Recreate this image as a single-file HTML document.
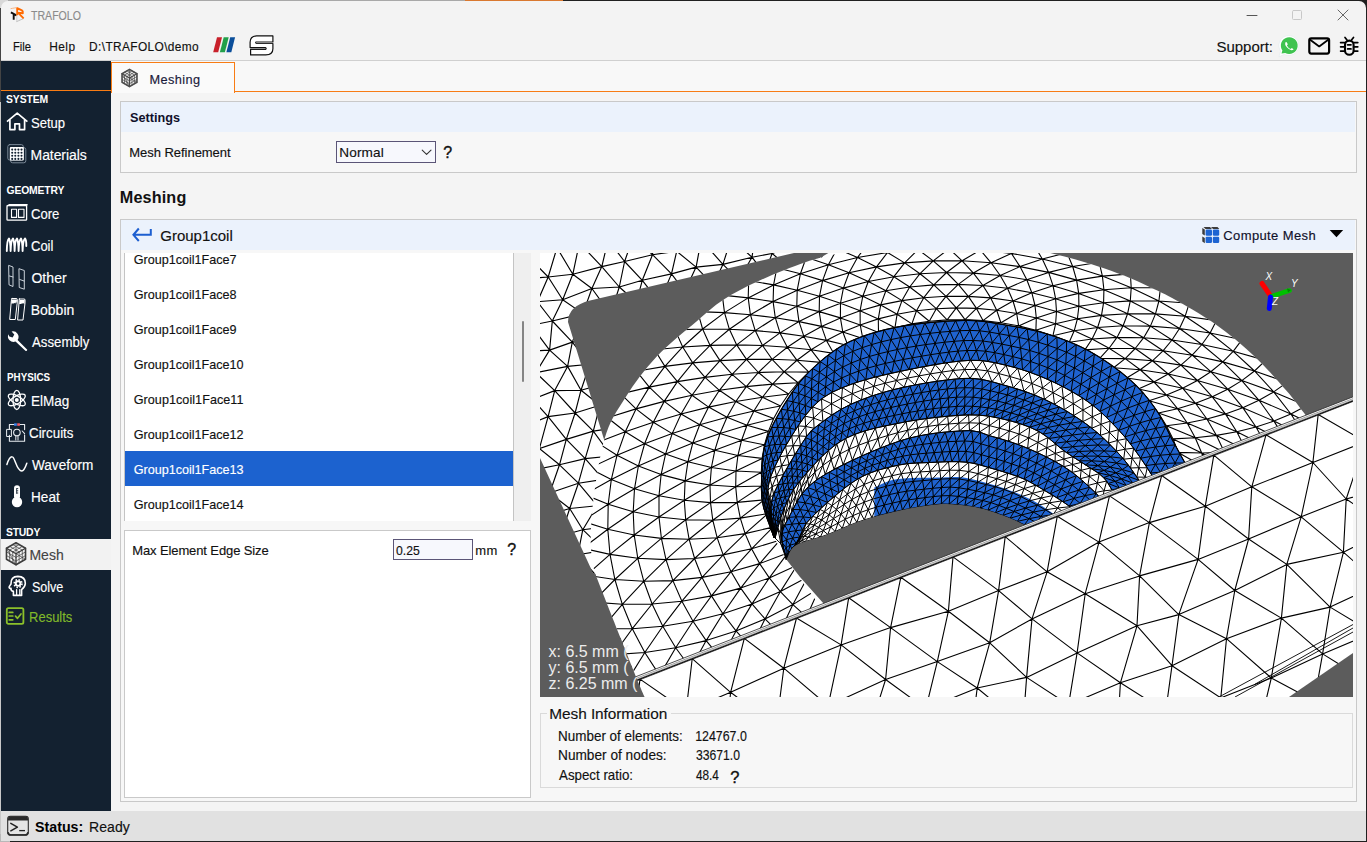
<!DOCTYPE html><html><head><meta charset="utf-8"><style>
html,body{margin:0;padding:0;width:1367px;height:842px;overflow:hidden;background:#202020}
body{position:relative;font-family:"Liberation Sans",sans-serif}
.t{position:absolute;line-height:1;white-space:pre;font-family:"Liberation Sans",sans-serif;-webkit-text-stroke:0.15px currentColor}
svg{position:absolute;overflow:hidden}
</style></head><body>
<div style="position:absolute;left:0px;top:0px;width:1367px;height:842px;background:#202020"></div>

<div style="position:absolute;left:0px;top:0px;width:10px;height:10px;background:#d8d8d8"></div>

<div style="position:absolute;left:0px;top:832px;width:10px;height:10px;background:#b8b8b8"></div>

<div style="position:absolute;left:1px;top:1px;width:1365px;height:840px;background:#f3f3f3;border-radius:7px;overflow:hidden"></div>

<div style="position:absolute;left:8px;top:0px;width:457px;height:1px;background:#a8a8a8"></div>

<div style="position:absolute;left:465px;top:0px;width:98px;height:1px;background:#d9782f"></div>

<div style="position:absolute;left:0px;top:8px;width:1px;height:94px;background:#444"></div>

<div style="position:absolute;left:0px;top:102px;width:1px;height:732px;background:#c8c8c8"></div>

<div style="position:absolute;left:1px;top:60px;width:1365px;height:1px;background:#d0d0d0"></div>

<div style="position:absolute;left:111px;top:61px;width:1255px;height:30px;background:#f8f8f8"></div>

<div style="position:absolute;left:1px;top:61px;width:110px;height:750px;background:#132130"></div>

<div style="position:absolute;left:1px;top:90px;width:111px;height:1px;background:#f87c14"></div>

<div style="position:absolute;left:234px;top:91px;width:1132px;height:1px;background:#f87c14"></div>

<div style="position:absolute;left:111px;top:92px;width:1255px;height:719px;background:#f4f4f4"></div>

<div style="position:absolute;left:111px;top:62px;width:122px;height:30px;background:#fafafa;border:1px solid #f87c14;border-bottom:none"></div>

<div style="position:absolute;left:1px;top:539px;width:110px;height:31px;background:#f2f2f2"></div>

<div style="position:absolute;left:120px;top:101px;width:1235px;height:70px;background:#f7f7f7;border:1px solid #c9c9c9"></div>

<div style="position:absolute;left:121px;top:102px;width:1234px;height:30px;background:#ebf2fc"></div>

<div style="position:absolute;left:336px;top:141px;width:98px;height:20px;background:#f7f8fd;border:1px solid #5b5577"></div>

<div style="position:absolute;left:120px;top:219px;width:1235px;height:581px;background:#f7f7f7;border:1px solid #c9c9c9"></div>

<div style="position:absolute;left:121px;top:220px;width:1234px;height:30px;background:#ebf2fc"></div>

<div style="position:absolute;left:124px;top:253px;width:389px;height:268px;background:#fff;border-left:1px solid #c4c4c4"></div>

<div style="position:absolute;left:513px;top:253px;width:1px;height:268px;background:#c4c4c4"></div>

<div style="position:absolute;left:514px;top:253px;width:17px;height:268px;background:#efefef"></div>

<div style="position:absolute;left:522px;top:321px;width:2px;height:61px;background:#848484;border-radius:1px"></div>

<div style="position:absolute;left:125px;top:451px;width:388px;height:35px;background:#1c62cf"></div>

<div style="position:absolute;left:124px;top:530px;width:405px;height:266px;background:#fff;border:1px solid #c9c9c9"></div>

<div style="position:absolute;left:393px;top:539px;width:78px;height:19px;background:#f7f8fd;border:1px solid #5b5577"></div>

<div style="position:absolute;left:540px;top:713px;width:811px;height:73px;border:1px solid #dadada"></div>

<div style="position:absolute;left:547px;top:705px;width:124px;height:16px;background:#f7f7f7"></div>

<div style="position:absolute;left:1px;top:811px;width:1365px;height:30px;background:#e1e1e1"></div>

<div style="position:absolute;left:540px;top:253px;width:813px;height:444px;overflow:hidden"><svg width="813" height="444" viewBox="540 253 813 444" style="left:0;top:0"><defs><clipPath id="cd"><path d="M845 240L840.4 252.9C828.7 256 818.9 257.6 805.3 262.3C791.6 267 772.1 274.8 758.5 281C744.9 287.2 733.7 293 723.4 299.7C713.1 306.4 707.9 311.7 696.8 321.2C685.6 330.7 668.4 344.1 656.5 356.8C644.6 369.5 634.3 383.3 625.6 397.2C616.9 411.1 609.9 419.6 604.2 440C598.5 460.4 593 497.6 591.5 519.8C590 542 590.2 553.6 594.9 573C599.6 592.4 612.3 617.4 619.8 636.2C627.3 655 635.4 675.4 639.8 686C644.2 696.6 643.9 695.3 646 700L1400 705L1400 428L1315 428C1311.2 422.8 1308.2 418.5 1303.5 412.3C1298.8 406.1 1294.7 400.1 1286.5 390.7C1278.3 381.3 1265.9 367.1 1254.1 356C1242.3 344.9 1229.2 333.9 1215.5 324.3C1201.8 314.7 1183.1 304.3 1172.1 298.1C1161.1 291.9 1157.6 290.6 1149.6 286.9C1141.6 283.1 1132.5 279 1124 275.6C1115.5 272.2 1106.6 269.1 1098.4 266.4C1090.2 263.7 1082.8 261.4 1074.8 259.2C1066.8 257 1058.4 255.1 1050.2 253.1L1045 240Z"/></clipPath></defs><rect x="540" y="253" width="813" height="444" fill="#fff"/><path d="M509.1 618.2L536.4 612.7M509.1 618.2L529.6 637.4M509.1 618.2L500.1 644.3M500.1 644.3L529.6 637.4M500.1 644.3L514.8 663.9M500.1 644.3L489.6 669.7M514.8 663.9L546 656.5M514.8 663.9L532.6 682.5M514.8 663.9L508.3 694.1M508.3 694.1L532.6 682.5M508.3 694.1L527.4 709.8M508.3 694.1L499.1 715M527.4 709.8L550.9 705.1M527.4 709.8L546 728.6M527.4 709.8L517.4 734.6M517.4 734.6L546 728.6M517.4 734.6L536.2 753.9M517.4 734.6L513.6 762.9M507.3 475.1L529.1 470.7M507.3 475.1L520.9 496M507.3 475.1L498.9 505.4M514.8 520.6L539.2 517.8M514.8 520.6L530.7 543.9M514.8 520.6L506.9 550.9M506.9 550.9L530.7 543.9M506.9 550.9L522.2 564.5M506.9 550.9L497 575.4M522.2 564.5L551.2 559.6M522.2 564.5L541.8 587.9M522.2 564.5L516.3 594.7M516.3 594.7L541.8 587.9M516.3 594.7L536.4 612.7M516.3 594.7L509.1 618.2M536.4 612.7L563.9 607M536.4 612.7L550.6 637M536.4 612.7L529.6 637.4M529.6 637.4L550.6 637M529.6 637.4L546 656.5M529.6 637.4L514.8 663.9M546 656.5L573.3 655.4M546 656.5L560.7 677.2M546 656.5L532.6 682.5M532.6 682.5L560.7 677.2M532.6 682.5L550.9 705.1M532.6 682.5L527.4 709.8M550.9 705.1L578.7 696.5M550.9 705.1L568.8 725.3M550.9 705.1L546 728.6M546 728.6L568.8 725.3M546 728.6L566.8 749.9M546 728.6L536.2 753.9M500.7 335.6L531.2 325.3M500.7 335.6L518.2 351.9M500.7 335.6L495.6 356M512.4 377.4L535.9 372.7M512.4 377.4L532.5 399.5M512.4 377.4L503.5 402.2M503.5 402.2L532.5 399.5M503.5 402.2L518.7 428.5M503.5 402.2L497.3 429M518.7 428.5L548.1 416.6M518.7 428.5L539.4 448.6M518.7 428.5L512.4 453.4M512.4 453.4L539.4 448.6M512.4 453.4L529.1 470.7M512.4 453.4L507.3 475.1M529.1 470.7L559.5 464.8M529.1 470.7L549.7 493M529.1 470.7L520.9 496M520.9 496L549.7 493M520.9 496L539.2 517.8M520.9 496L514.8 520.6M539.2 517.8L569.7 508.5M539.2 517.8L560.8 535.7M539.2 517.8L530.7 543.9M530.7 543.9L560.8 535.7M530.7 543.9L551.2 559.6M530.7 543.9L522.2 564.5M551.2 559.6L577.8 554.8M551.2 559.6L568.4 581.2M551.2 559.6L541.8 587.9M541.8 587.9L568.4 581.2M541.8 587.9L563.9 607M541.8 587.9L536.4 612.7M563.9 607L586.5 599M563.9 607L576.9 628.6M563.9 607L550.6 637M550.6 637L576.9 628.6M550.6 637L573.3 655.4M550.6 637L546 656.5M573.3 655.4L594 645.9M573.3 655.4L590.3 672.3M573.3 655.4L560.7 677.2M560.7 677.2L590.3 672.3M560.7 677.2L578.7 696.5M560.7 677.2L550.9 705.1M578.7 696.5L605.6 692.1M578.7 696.5L600.8 716.7M578.7 696.5L568.8 725.3M568.8 725.3L600.8 716.7M568.8 725.3L589.5 745.7M568.8 725.3L566.8 749.9M509.3 237.5L534.4 229.2M509.3 237.5L526.3 254.8M509.3 237.5L503.5 264.9M503.5 264.9L526.3 254.8M503.5 264.9L521.9 279M503.5 264.9L494.4 290.5M521.9 279L548.2 277M521.9 279L537.4 301.7M521.9 279L510.1 310.2M510.1 310.2L537.4 301.7M510.1 310.2L531.2 325.3M510.1 310.2L500.7 335.6M531.2 325.3L552.3 321M531.2 325.3L549.6 350.1M531.2 325.3L518.2 351.9M518.2 351.9L549.6 350.1M518.2 351.9L535.9 372.7M518.2 351.9L512.4 377.4M535.9 372.7L567.6 366.4M535.9 372.7L554.7 390.6M535.9 372.7L532.5 399.5M532.5 399.5L554.7 390.6M532.5 399.5L548.1 416.6M532.5 399.5L518.7 428.5M548.1 416.6L575.1 413M548.1 416.6L566.3 439.4M548.1 416.6L539.4 448.6M539.4 448.6L566.3 439.4M539.4 448.6L559.5 464.8M539.4 448.6L529.1 470.7M559.5 464.8L585.2 458.6M559.5 464.8L578.4 483.2M559.5 464.8L549.7 493M549.7 493L578.4 483.2M549.7 493L569.7 508.5M549.7 493L539.2 517.8M569.7 508.5L597.2 505.7M569.7 508.5L582.8 529.7M569.7 508.5L560.8 535.7M560.8 535.7L582.8 529.7M560.8 535.7L577.8 554.8M560.8 535.7L551.2 559.6M577.8 554.8L604.3 550.4M577.8 554.8L596.1 575.5M577.8 554.8L568.4 581.2M568.4 581.2L596.1 575.5M568.4 581.2L586.5 599M568.4 581.2L563.9 607M586.5 599L612.2 598.9M586.5 599L604 624M586.5 599L576.9 628.6M576.9 628.6L604 624M576.9 628.6L594 645.9M576.9 628.6L573.3 655.4M594 645.9L625.6 643.2M594 645.9L614.8 671.3M594 645.9L590.3 672.3M590.3 672.3L614.8 671.3M590.3 672.3L605.6 692.1M590.3 672.3L578.7 696.5M605.6 692.1L632.8 690.9M605.6 692.1L621.8 713.5M605.6 692.1L600.8 716.7M600.8 716.7L621.8 713.5M600.8 716.7L617.5 742.2M600.8 716.7L589.5 745.7M514.4 214.2L542.7 207.9M514.4 214.2L534.4 229.2M514.4 214.2L509.3 237.5M534.4 229.2L564.8 223.3M534.4 229.2L557 247.7M534.4 229.2L526.3 254.8M526.3 254.8L557 247.7M526.3 254.8L548.2 277M526.3 254.8L521.9 279M548.2 277L572.8 274.3M548.2 277L562.7 299.8M548.2 277L537.4 301.7M537.4 301.7L562.7 299.8M537.4 301.7L552.3 321M537.4 301.7L531.2 325.3M552.3 321L582.9 313.6M552.3 321L572.3 342.1M552.3 321L549.6 350.1M549.6 350.1L572.3 342.1M549.6 350.1L567.6 366.4M549.6 350.1L535.9 372.7M567.6 366.4L589.8 364.2M567.6 366.4L581 390.2M567.6 366.4L554.7 390.6M554.7 390.6L581 390.2M554.7 390.6L575.1 413M554.7 390.6L548.1 416.6M575.1 413L599.9 405.2M575.1 413L593.3 431.1M575.1 413L566.3 439.4M566.3 439.4L593.3 431.1M566.3 439.4L585.2 458.6M566.3 439.4L559.5 464.8M585.2 458.6L611.4 456M585.2 458.6L603.3 479.4M585.2 458.6L578.4 483.2M578.4 483.2L603.3 479.4M578.4 483.2L597.2 505.7M578.4 483.2L569.7 508.5M597.2 505.7L617.5 499.8M597.2 505.7L609.6 526.4M597.2 505.7L582.8 529.7M582.8 529.7L609.6 526.4M582.8 529.7L604.3 550.4M582.8 529.7L577.8 554.8M604.3 550.4L627.9 546M604.3 550.4L621.1 570.2M604.3 550.4L596.1 575.5M596.1 575.5L621.1 570.2M596.1 575.5L612.2 598.9M596.1 575.5L586.5 599M612.2 598.9L641.3 588.8M612.2 598.9L629.5 620M612.2 598.9L604 624M604 624L629.5 620M604 624L625.6 643.2M604 624L594 645.9M625.6 643.2L648.7 639.3M625.6 643.2L644.2 662.5M625.6 643.2L614.8 671.3M614.8 671.3L644.2 662.5M614.8 671.3L632.8 690.9M614.8 671.3L605.6 692.1M632.8 690.9L657.2 679.8M632.8 690.9L653.9 705.7M632.8 690.9L621.8 713.5M621.8 713.5L653.9 705.7M621.8 713.5L643.9 730.9M621.8 713.5L617.5 742.2M643.9 730.9L669.3 728.7M643.9 730.9L658.3 753.9M643.9 730.9L637.1 756.7M564.8 223.3L585.9 221.2M564.8 223.3L579.4 243M564.8 223.3L557 247.7M557 247.7L579.4 243M557 247.7L572.8 274.3M557 247.7L548.2 277M572.8 274.3L601.8 266.6M572.8 274.3L591.9 288.5M572.8 274.3L562.7 299.8M562.7 299.8L591.9 288.5M562.7 299.8L582.9 313.6M562.7 299.8L552.3 321M582.9 313.6L610.5 314.2M582.9 313.6L602.7 338.5M582.9 313.6L572.3 342.1M572.3 342.1L602.7 338.5M572.3 342.1L589.8 364.2M572.3 342.1L567.6 366.4M589.8 364.2L620.3 359M589.8 364.2L610.2 382.1M589.8 364.2L581 390.2M581 390.2L610.2 382.1M581 390.2L599.9 405.2M581 390.2L575.1 413M599.9 405.2L630 404.6M599.9 405.2L621.9 426.9M599.9 405.2L593.3 431.1M593.3 431.1L621.9 426.9M593.3 431.1L611.4 456M593.3 431.1L585.2 458.6M611.4 456L640.6 448.6M611.4 456L632.2 471.3M611.4 456L603.3 479.4M603.3 479.4L632.2 471.3M603.3 479.4L617.5 499.8M603.3 479.4L597.2 505.7M617.5 499.8L650.4 496.1M617.5 499.8L637 522.1M617.5 499.8L609.6 526.4M609.6 526.4L637 522.1M609.6 526.4L627.9 546M609.6 526.4L604.3 550.4M627.9 546L655 537.7M627.9 546L648.2 563.7M627.9 546L621.1 570.2M621.1 570.2L648.2 563.7M621.1 570.2L641.3 588.8M621.1 570.2L612.2 598.9M641.3 588.8L666.5 588.4M641.3 588.8L659.5 612.7M641.3 588.8L629.5 620M629.5 620L659.5 612.7M629.5 620L648.7 639.3M629.5 620L625.6 643.2M648.7 639.3L675.5 633.3M648.7 639.3L670 658.3M648.7 639.3L644.2 662.5M644.2 662.5L670 658.3M644.2 662.5L657.2 679.8M644.2 662.5L632.8 690.9M657.2 679.8L689.1 679.3M657.2 679.8L677 699.8M657.2 679.8L653.9 705.7M653.9 705.7L677 699.8M653.9 705.7L669.3 728.7M653.9 705.7L643.9 730.9M669.3 728.7L696.8 725.2M669.3 728.7L686.3 749.1M669.3 728.7L658.3 753.9M585.9 221.2L612.1 216.4M585.9 221.2L608.1 240.1M585.9 221.2L579.4 243M579.4 243L608.1 240.1M579.4 243L601.8 266.6M579.4 243L572.8 274.3M601.8 266.6L624.6 261.5M601.8 266.6L619.3 287M601.8 266.6L591.9 288.5M591.9 288.5L619.3 287M591.9 288.5L610.5 314.2M591.9 288.5L582.9 313.6M610.5 314.2L636.4 302.3M610.5 314.2L625.1 328.6M610.5 314.2L602.7 338.5M602.7 338.5L625.1 328.6M602.7 338.5L620.3 359M602.7 338.5L589.8 364.2M620.3 359L647.5 354M620.3 359L633.5 377.5M620.3 359L610.2 382.1M610.2 382.1L633.5 377.5M610.2 382.1L630 404.6M610.2 382.1L599.9 405.2M630 404.6L654.6 393.8M630 404.6L645 424.4M630 404.6L621.9 426.9M621.9 426.9L645 424.4M621.9 426.9L640.6 448.6M621.9 426.9L611.4 456M640.6 448.6L664.8 441.2M640.6 448.6L657.3 467M640.6 448.6L632.2 471.3M632.2 471.3L657.3 467M632.2 471.3L650.4 496.1M632.2 471.3L617.5 499.8M650.4 496.1L673.8 487.9M650.4 496.1L668.5 515.2M650.4 496.1L637 522.1M637 522.1L668.5 515.2M637 522.1L655 537.7M637 522.1L627.9 546M655 537.7L685.4 535.5M655 537.7L674.1 563.1M655 537.7L648.2 563.7M648.2 563.7L674.1 563.1M648.2 563.7L666.5 588.4M648.2 563.7L641.3 588.8M666.5 588.4L694.5 581.3M666.5 588.4L683.1 603.3M666.5 588.4L659.5 612.7M659.5 612.7L683.1 603.3M659.5 612.7L675.5 633.3M659.5 612.7L648.7 639.3M675.5 633.3L703.2 628M675.5 633.3L696.4 650.3M675.5 633.3L670 658.3M670 658.3L696.4 650.3M670 658.3L689.1 679.3M670 658.3L657.2 679.8M689.1 679.3L709.9 671.6M689.1 679.3L706.7 694.8M689.1 679.3L677 699.8M677 699.8L706.7 694.8M677 699.8L696.8 725.2M677 699.8L669.3 728.7M696.8 725.2L723.8 714.9M696.8 725.2L712.5 739.7M696.8 725.2L686.3 749.1M612.1 216.4L638.6 207.8M612.1 216.4L633.3 236.6M612.1 216.4L608.1 240.1M608.1 240.1L633.3 236.6M608.1 240.1L624.6 261.5M608.1 240.1L601.8 266.6M624.6 261.5L652.5 254.7M624.6 261.5L642.3 280.3M624.6 261.5L619.3 287M619.3 287L642.3 280.3M619.3 287L636.4 302.3M619.3 287L610.5 314.2M636.4 302.3L659.5 302.3M636.4 302.3L654.7 327.9M636.4 302.3L625.1 328.6M625.1 328.6L654.7 327.9M625.1 328.6L647.5 354M625.1 328.6L620.3 359M647.5 354L668.3 346.8M647.5 354L664.2 371.3M647.5 354L633.5 377.5M633.5 377.5L664.2 371.3M633.5 377.5L654.6 393.8M633.5 377.5L630 404.6M654.6 393.8L683.3 394.2M654.6 393.8L673.9 419.3M654.6 393.8L645 424.4M645 424.4L673.9 419.3M645 424.4L664.8 441.2M645 424.4L640.6 448.6M664.8 441.2L691.3 439.8M664.8 441.2L679.3 464.2M664.8 441.2L657.3 467M657.3 467L679.3 464.2M657.3 467L673.8 487.9M657.3 467L650.4 496.1M673.8 487.9L701.4 483.7M673.8 487.9L690 505.5M673.8 487.9L668.5 515.2M668.5 515.2L690 505.5M668.5 515.2L685.4 535.5M668.5 515.2L655 537.7M685.4 535.5L710.4 530.9M685.4 535.5L699.7 552.3M685.4 535.5L674.1 563.1M674.1 563.1L699.7 552.3M674.1 563.1L694.5 581.3M674.1 563.1L666.5 588.4M694.5 581.3L717.5 571.5M694.5 581.3L712.3 603.4M694.5 581.3L683.1 603.3M683.1 603.3L712.3 603.4M683.1 603.3L703.2 628M683.1 603.3L675.5 633.3M703.2 628L731.2 619.1M703.2 628L722.2 642.8M703.2 628L696.4 650.3M696.4 650.3L722.2 642.8M696.4 650.3L709.9 671.6M696.4 650.3L689.1 679.3M709.9 671.6L741.2 664.6M709.9 671.6L727 692.4M709.9 671.6L706.7 694.8M706.7 694.8L727 692.4M706.7 694.8L723.8 714.9M706.7 694.8L696.8 725.2M723.8 714.9L746 710M723.8 714.9L737.1 736.9M723.8 714.9L712.5 739.7M633.3 236.6L656.5 226.2M633.3 236.6L652.5 254.7M633.3 236.6L624.6 261.5M652.5 254.7L676.7 251.3M652.5 254.7L671.5 273.9M652.5 254.7L642.3 280.3M642.3 280.3L671.5 273.9M642.3 280.3L659.5 302.3M642.3 280.3L636.4 302.3M659.5 302.3L684.7 291.5M659.5 302.3L676.7 321.9M659.5 302.3L654.7 327.9M654.7 327.9L676.7 321.9M654.7 327.9L668.3 346.8M654.7 327.9L647.5 354M668.3 346.8L697 343.5M668.3 346.8L691.7 367.8M668.3 346.8L664.2 371.3M664.2 371.3L691.7 367.8M664.2 371.3L683.3 394.2M664.2 371.3L654.6 393.8M683.3 394.2L706.7 388M683.3 394.2L696 408.7M683.3 394.2L673.9 419.3M673.9 419.3L696 408.7M673.9 419.3L691.3 439.8M673.9 419.3L664.8 441.2M691.3 439.8L717.1 431.6M691.3 439.8L706.3 455.5M691.3 439.8L679.3 464.2M679.3 464.2L706.3 455.5M679.3 464.2L701.4 483.7M679.3 464.2L673.8 487.9M701.4 483.7L723 480.1M701.4 483.7L719.5 506M701.4 483.7L690 505.5M690 505.5L719.5 506M690 505.5L710.4 530.9M690 505.5L685.4 535.5M710.4 530.9L739.4 522.6M710.4 530.9L729.4 547.9M710.4 530.9L699.7 552.3M699.7 552.3L729.4 547.9M699.7 552.3L717.5 571.5M699.7 552.3L694.5 581.3M717.5 571.5L748 571.1M717.5 571.5L734.9 591M717.5 571.5L712.3 603.4M712.3 603.4L734.9 591M712.3 603.4L731.2 619.1M712.3 603.4L703.2 628M731.2 619.1L753.5 615.1M731.2 619.1L746.3 636.7M731.2 619.1L722.2 642.8M722.2 642.8L746.3 636.7M722.2 642.8L741.2 664.6M722.2 642.8L709.9 671.6M741.2 664.6L767.6 662.2M741.2 664.6L756.7 682.7M741.2 664.6L727 692.4M727 692.4L756.7 682.7M727 692.4L746 710M727 692.4L723.8 714.9M746 710L777.7 706.2M746 710L763.6 730.4M746 710L737.1 736.9M737.1 736.9L763.6 730.4M737.1 736.9L758.7 759.5M737.1 736.9L730.5 762.1M656.5 226.2L686.8 225M656.5 226.2L676.7 251.3M656.5 226.2L652.5 254.7M676.7 251.3L701.2 239.8M676.7 251.3L696.1 267.1M676.7 251.3L671.5 273.9M671.5 273.9L696.1 267.1M671.5 273.9L684.7 291.5M671.5 273.9L659.5 302.3M684.7 291.5L713.2 285.2M684.7 291.5L707.2 311M684.7 291.5L676.7 321.9M676.7 321.9L707.2 311M676.7 321.9L697 343.5M676.7 321.9L668.3 346.8M697 343.5L725.9 336.6M697 343.5L715 357.4M697 343.5L691.7 367.8M691.7 367.8L715 357.4M691.7 367.8L706.7 388M691.7 367.8L683.3 394.2M706.7 388L734.4 378.1M706.7 388L724.5 403.1M706.7 388L696 408.7M696 408.7L724.5 403.1M696 408.7L717.1 431.6M696 408.7L691.3 439.8M717.1 431.6L746.4 426.2M717.1 431.6L733.7 448.7M717.1 431.6L706.3 455.5M706.3 455.5L733.7 448.7M706.3 455.5L723 480.1M706.3 455.5L701.4 483.7M723 480.1L754.4 474.1M723 480.1L746.9 494.5M723 480.1L719.5 506M719.5 506L746.9 494.5M719.5 506L739.4 522.6M719.5 506L710.4 530.9M739.4 522.6L761.6 516M739.4 522.6L756 540.6M739.4 522.6L729.4 547.9M729.4 547.9L756 540.6M729.4 547.9L748 571.1M729.4 547.9L717.5 571.5M748 571.1L773 566.5M748 571.1L765.8 585.3M748 571.1L734.9 591M734.9 591L765.8 585.3M734.9 591L753.5 615.1M734.9 591L731.2 619.1M753.5 615.1L779 606.2M753.5 615.1L774.9 635.2M753.5 615.1L746.3 636.7M746.3 636.7L774.9 635.2M746.3 636.7L767.6 662.2M746.3 636.7L741.2 664.6M767.6 662.2L791.8 654.3M767.6 662.2L782.7 681.1M767.6 662.2L756.7 682.7M756.7 682.7L782.7 681.1M756.7 682.7L777.7 706.2M756.7 682.7L746 710M777.7 706.2L802.4 703.3M777.7 706.2L794.7 728.1M777.7 706.2L763.6 730.4M763.6 730.4L794.7 728.1M763.6 730.4L785.6 754.4M763.6 730.4L758.7 759.5M686.8 225L715.7 218.3M686.8 225L701.2 239.8M686.8 225L676.7 251.3M701.2 239.8L731.2 238.4M701.2 239.8L722.9 264.4M701.2 239.8L696.1 267.1M696.1 267.1L722.9 264.4M696.1 267.1L713.2 285.2M696.1 267.1L684.7 291.5M713.2 285.2L738.9 280M713.2 285.2L728.9 305.3M713.2 285.2L707.2 311M707.2 311L728.9 305.3M707.2 311L725.9 336.6M707.2 311L697 343.5M725.9 336.6L749 326.3M725.9 336.6L739 354.4M725.9 336.6L715 357.4M715 357.4L739 354.4M715 357.4L734.4 378.1M715 357.4L706.7 388M734.4 378.1L763 375.9M734.4 378.1L749.8 402.1M734.4 378.1L724.5 403.1M724.5 403.1L749.8 402.1M724.5 403.1L746.4 426.2M724.5 403.1L717.1 431.6M746.4 426.2L767.2 417.5M746.4 426.2L759.7 445.3M746.4 426.2L733.7 448.7M733.7 448.7L759.7 445.3M733.7 448.7L754.4 474.1M733.7 448.7L723 480.1M754.4 474.1L780.5 465.6M754.4 474.1L772.4 488.9M754.4 474.1L746.9 494.5M746.9 494.5L772.4 488.9M746.9 494.5L761.6 516M746.9 494.5L739.4 522.6M761.6 516L791.9 510.7M761.6 516L782.9 534.2M761.6 516L756 540.6M756 540.6L782.9 534.2M756 540.6L773 566.5M756 540.6L748 571.1M773 566.5L800.9 555.6M773 566.5L792.8 585.3M773 566.5L765.8 585.3M765.8 585.3L792.8 585.3M765.8 585.3L779 606.2M765.8 585.3L753.5 615.1M779 606.2L809.5 601.7M779 606.2L796.6 626.8M779 606.2L774.9 635.2M774.9 635.2L796.6 626.8M774.9 635.2L791.8 654.3M774.9 635.2L767.6 662.2M791.8 654.3L820.9 646.6M791.8 654.3L810.8 675.3M791.8 654.3L782.7 681.1M782.7 681.1L810.8 675.3M782.7 681.1L802.4 703.3M782.7 681.1L777.7 706.2M802.4 703.3L828.9 692.5M802.4 703.3L817 717.6M802.4 703.3L794.7 728.1M794.7 728.1L817 717.6M794.7 728.1L814 748.5M794.7 728.1L785.6 754.4M715.7 218.3L736.8 212.8M715.7 218.3L731.2 238.4M715.7 218.3L701.2 239.8M731.2 238.4L756 229M731.2 238.4L752 257.2M731.2 238.4L722.9 264.4M722.9 264.4L752 257.2M722.9 264.4L738.9 280M722.9 264.4L713.2 285.2M738.9 280L764.5 274M738.9 280L759.4 303.2M738.9 280L728.9 305.3M728.9 305.3L759.4 303.2M728.9 305.3L749 326.3M728.9 305.3L725.9 336.6M749 326.3L773.1 323M749 326.3L769.8 349.1M749 326.3L739 354.4M739 354.4L769.8 349.1M739 354.4L763 375.9M739 354.4L734.4 378.1M763 375.9L784.3 368.9M763 375.9L778.5 395.7M763 375.9L749.8 402.1M749.8 402.1L778.5 395.7M749.8 402.1L767.2 417.5M749.8 402.1L746.4 426.2M767.2 417.5L793.4 416.8M767.2 417.5L790.6 442M767.2 417.5L759.7 445.3M759.7 445.3L790.6 442M759.7 445.3L780.5 465.6M759.7 445.3L754.4 474.1M780.5 465.6L808.1 459.5M780.5 465.6L800.1 483.9M780.5 465.6L772.4 488.9M772.4 488.9L800.1 483.9M772.4 488.9L791.9 510.7M772.4 488.9L761.6 516M791.9 510.7L813.4 506.8M791.9 510.7L809.8 528.9M791.9 510.7L782.9 534.2M782.9 534.2L809.8 528.9M782.9 534.2L800.9 555.6M782.9 534.2L773 566.5M800.9 555.6L823.1 548.6M800.9 555.6L816.3 575.1M800.9 555.6L792.8 585.3M792.8 585.3L816.3 575.1M792.8 585.3L809.5 601.7M792.8 585.3L779 606.2M809.5 601.7L832.6 599.4M809.5 601.7L827 626.4M809.5 601.7L796.6 626.8M796.6 626.8L827 626.4M796.6 626.8L820.9 646.6M796.6 626.8L791.8 654.3M820.9 646.6L843.8 644.6M820.9 646.6L832.7 672.2M820.9 646.6L810.8 675.3M810.8 675.3L832.7 672.2M810.8 675.3L828.9 692.5M810.8 675.3L802.4 703.3M828.9 692.5L852.3 689M828.9 692.5L845.9 717.9M828.9 692.5L817 717.6M817 717.6L845.9 717.9M817 717.6L840.9 739.7M817 717.6L814 748.5M756 229L783.6 227.3M756 229L772.1 253.5M756 229L752 257.2M752 257.2L772.1 253.5M752 257.2L764.5 274M752 257.2L738.9 280M764.5 274L794 271.6M764.5 274L786 299.6M764.5 274L759.4 303.2M759.4 303.2L786 299.6M759.4 303.2L773.1 323M759.4 303.2L749 326.3M773.1 323L799.4 317.4M773.1 323L795.7 344.7M773.1 323L769.8 349.1M769.8 349.1L795.7 344.7M769.8 349.1L784.3 368.9M769.8 349.1L763 375.9M784.3 368.9L813.6 361.1M784.3 368.9L807.4 391M784.3 368.9L778.5 395.7M778.5 395.7L807.4 391M778.5 395.7L793.4 416.8M778.5 395.7L767.2 417.5M793.4 416.8L820.4 408.6M793.4 416.8L817.1 432.7M793.4 416.8L790.6 442M790.6 442L817.1 432.7M790.6 442L808.1 459.5M790.6 442L780.5 465.6M808.1 459.5L831.4 458M808.1 459.5L826.5 478.6M808.1 459.5L800.1 483.9M800.1 483.9L826.5 478.6M800.1 483.9L813.4 506.8M800.1 483.9L791.9 510.7M813.4 506.8L843.4 499.6M813.4 506.8L834.5 528.1M813.4 506.8L809.8 528.9M809.8 528.9L834.5 528.1M809.8 528.9L823.1 548.6M809.8 528.9L800.9 555.6M823.1 548.6L848.8 544.3M823.1 548.6L841.1 570.3M823.1 548.6L816.3 575.1M816.3 575.1L841.1 570.3M816.3 575.1L832.6 599.4M816.3 575.1L809.5 601.7M832.6 599.4L857.9 589.5M832.6 599.4L852.2 617.1M832.6 599.4L827 626.4M827 626.4L852.2 617.1M827 626.4L843.8 644.6M827 626.4L820.9 646.6M843.8 644.6L867.9 638.3M843.8 644.6L865.6 664M843.8 644.6L832.7 672.2M832.7 672.2L865.6 664M832.7 672.2L852.3 689M832.7 672.2L828.9 692.5M852.3 689L879.6 684.9M852.3 689L871.8 706.9M852.3 689L845.9 717.9M845.9 717.9L871.8 706.9M845.9 717.9L863.9 738.3M845.9 717.9L840.9 739.7M783.6 227.3L810.9 220.9M783.6 227.3L798.9 244M783.6 227.3L772.1 253.5M772.1 253.5L798.9 244M772.1 253.5L794 271.6M772.1 253.5L764.5 274M794 271.6L820.1 263.5M794 271.6L812.1 290.1M794 271.6L786 299.6M786 299.6L812.1 290.1M786 299.6L799.4 317.4M786 299.6L773.1 323M799.4 317.4L827.5 311.4M799.4 317.4L821.1 339.2M799.4 317.4L795.7 344.7M795.7 344.7L821.1 339.2M795.7 344.7L813.6 361.1M795.7 344.7L784.3 368.9M813.6 361.1L835.7 359.3M813.6 361.1L828.7 381.9M813.6 361.1L807.4 391M807.4 391L828.7 381.9M807.4 391L820.4 408.6M807.4 391L793.4 416.8M820.4 408.6L849.7 404.8M820.4 408.6L841.1 431.9M820.4 408.6L817.1 432.7M817.1 432.7L841.1 431.9M817.1 432.7L831.4 458M817.1 432.7L808.1 459.5M831.4 458L856.3 447.9M831.4 458L851.2 473.2M831.4 458L826.5 478.6M826.5 478.6L851.2 473.2M826.5 478.6L843.4 499.6M826.5 478.6L813.4 506.8M843.4 499.6L865.7 493M843.4 499.6L861.7 522.9M843.4 499.6L834.5 528.1M834.5 528.1L861.7 522.9M834.5 528.1L848.8 544.3M834.5 528.1L823.1 548.6M848.8 544.3L879.4 543.9M848.8 544.3L871.6 565M848.8 544.3L841.1 570.3M841.1 570.3L871.6 565M841.1 570.3L857.9 589.5M841.1 570.3L832.6 599.4M857.9 589.5L886.3 588M857.9 589.5L876.1 612.9M857.9 589.5L852.2 617.1M852.2 617.1L876.1 612.9M852.2 617.1L867.9 638.3M852.2 617.1L843.8 644.6M867.9 638.3L894.4 629M867.9 638.3L889.1 655.4M867.9 638.3L865.6 664M865.6 664L889.1 655.4M865.6 664L879.6 684.9M865.6 664L852.3 689M879.6 684.9L910 680.5M879.6 684.9L898.4 701.5M879.6 684.9L871.8 706.9M871.8 706.9L898.4 701.5M871.8 706.9L890.2 725.9M871.8 706.9L863.9 738.3M890.2 725.9L914.1 723.7M890.2 725.9L908.6 748.4M890.2 725.9L883.2 752.6M810.9 220.9L835.1 213.1M810.9 220.9L826.1 240.3M810.9 220.9L798.9 244M798.9 244L826.1 240.3M798.9 244L820.1 263.5M798.9 244L794 271.6M820.1 263.5L849.4 258.1M820.1 263.5L840.1 285M820.1 263.5L812.1 290.1M812.1 290.1L840.1 285M812.1 290.1L827.5 311.4M812.1 290.1L799.4 317.4M827.5 311.4L853.4 308.1M827.5 311.4L846.2 329.8M827.5 311.4L821.1 339.2M821.1 339.2L846.2 329.8M821.1 339.2L835.7 359.3M821.1 339.2L813.6 361.1M835.7 359.3L864.8 354.3M835.7 359.3L859.6 378.3M835.7 359.3L828.7 381.9M828.7 381.9L859.6 378.3M828.7 381.9L849.7 404.8M828.7 381.9L820.4 408.6M849.7 404.8L871.7 399.7M849.7 404.8L867.5 426.3M849.7 404.8L841.1 431.9M841.1 431.9L867.5 426.3M841.1 431.9L856.3 447.9M841.1 431.9L831.4 458M856.3 447.9L888 442.4M856.3 447.9L878.9 471.5M856.3 447.9L851.2 473.2M851.2 473.2L878.9 471.5M851.2 473.2L865.7 493M851.2 473.2L843.4 499.6M865.7 493L892.9 488.4M865.7 493L885.3 514M865.7 493L861.7 522.9M861.7 522.9L885.3 514M861.7 522.9L879.4 543.9M861.7 522.9L848.8 544.3M879.4 543.9L903.4 532.3M879.4 543.9L894 563.6M879.4 543.9L871.6 565M871.6 565L894 563.6M871.6 565L886.3 588M871.6 565L857.9 589.5M886.3 588L913.4 581.7M886.3 588L908.4 608.3M886.3 588L876.1 612.9M876.1 612.9L908.4 608.3M876.1 612.9L894.4 629M876.1 612.9L867.9 638.3M894.4 629L921.9 629.5M894.4 629L917.5 655.7M894.4 629L889.1 655.4M889.1 655.4L917.5 655.7M889.1 655.4L910 680.5M889.1 655.4L879.6 684.9M910 680.5L935 674.1M910 680.5L927.3 696.2M910 680.5L898.4 701.5M898.4 701.5L927.3 696.2M898.4 701.5L914.1 723.7M898.4 701.5L890.2 725.9M914.1 723.7L944.2 717.2M914.1 723.7L937.2 741.1M914.1 723.7L908.6 748.4M835.1 213.1L864.7 207.3M835.1 213.1L857 238.4M835.1 213.1L826.1 240.3M826.1 240.3L857 238.4M826.1 240.3L849.4 258.1M826.1 240.3L820.1 263.5M849.4 258.1L871.9 254.2M849.4 258.1L865.5 283.7M849.4 258.1L840.1 285M840.1 285L865.5 283.7M840.1 285L853.4 308.1M840.1 285L827.5 311.4M853.4 308.1L880 299.3M853.4 308.1L872.5 328M853.4 308.1L846.2 329.8M846.2 329.8L872.5 328M846.2 329.8L864.8 354.3M846.2 329.8L835.7 359.3M864.8 354.3L889.6 346.8M864.8 354.3L883.4 373.3M864.8 354.3L859.6 378.3M859.6 378.3L883.4 373.3M859.6 378.3L871.7 399.7M859.6 378.3L849.7 404.8M871.7 399.7L899 395.4M871.7 399.7L896.7 418.3M871.7 399.7L867.5 426.3M867.5 426.3L896.7 418.3M867.5 426.3L888 442.4M867.5 426.3L856.3 447.9M888 442.4L913.3 435.7M888 442.4L905.8 464M888 442.4L878.9 471.5M878.9 471.5L905.8 464M878.9 471.5L892.9 488.4M878.9 471.5L865.7 493M892.9 488.4L922.8 486.3M892.9 488.4L911.6 512.3M892.9 488.4L885.3 514M885.3 514L911.6 512.3M885.3 514L903.4 532.3M885.3 514L879.4 543.9M903.4 532.3L928.6 526.1M903.4 532.3L922.3 557.9M903.4 532.3L894 563.6M894 563.6L922.3 557.9M894 563.6L913.4 581.7M894 563.6L886.3 588M913.4 581.7L943.2 578.4M913.4 581.7L932.1 603.9M913.4 581.7L908.4 608.3M908.4 608.3L932.1 603.9M908.4 608.3L921.9 629.5M908.4 608.3L894.4 629M921.9 629.5L950.5 618.4M921.9 629.5L942.7 648.7M921.9 629.5L917.5 655.7M917.5 655.7L942.7 648.7M917.5 655.7L935 674.1M917.5 655.7L910 680.5M935 674.1L959.3 667.4M935 674.1L949.8 690.8M935 674.1L927.3 696.2M927.3 696.2L949.8 690.8M927.3 696.2L944.2 717.2M927.3 696.2L914.1 723.7M944.2 717.2L969 712.5M944.2 717.2L961 735.2M944.2 717.2L937.2 741.1M857 238.4L880.2 227.9M857 238.4L871.9 254.2M857 238.4L849.4 258.1M871.9 254.2L899.1 250.5M871.9 254.2L892 278.2M871.9 254.2L865.5 283.7M865.5 283.7L892 278.2M865.5 283.7L880 299.3M865.5 283.7L853.4 308.1M880 299.3L906 294.2M880 299.3L902.6 322.8M880 299.3L872.5 328M872.5 328L902.6 322.8M872.5 328L889.6 346.8M872.5 328L864.8 354.3M889.6 346.8L918.8 342.1M889.6 346.8L908.7 369.6M889.6 346.8L883.4 373.3M883.4 373.3L908.7 369.6M883.4 373.3L899 395.4M883.4 373.3L871.7 399.7M899 395.4L928.3 385.9M899 395.4L917.3 409.6M899 395.4L896.7 418.3M896.7 418.3L917.3 409.6M896.7 418.3L913.3 435.7M896.7 418.3L888 442.4M913.3 435.7L940.4 434.4M913.3 435.7L926 456.8M913.3 435.7L905.8 464M905.8 464L926 456.8M905.8 464L922.8 486.3M905.8 464L892.9 488.4M922.8 486.3L947.2 478.1M922.8 486.3L938.1 506.5M922.8 486.3L911.6 512.3M911.6 512.3L938.1 506.5M911.6 512.3L928.6 526.1M911.6 512.3L903.4 532.3M928.6 526.1L956 524.1M928.6 526.1L951.7 550.5M928.6 526.1L922.3 557.9M922.3 557.9L951.7 550.5M922.3 557.9L943.2 578.4M922.3 557.9L913.4 581.7M943.2 578.4L966.6 568.4M943.2 578.4L957.7 596M943.2 578.4L932.1 603.9M932.1 603.9L957.7 596M932.1 603.9L950.5 618.4M932.1 603.9L921.9 629.5M950.5 618.4L978.5 613.6M950.5 618.4L967.3 640.2M950.5 618.4L942.7 648.7M942.7 648.7L967.3 640.2M942.7 648.7L959.3 667.4M942.7 648.7L935 674.1M959.3 667.4L985.3 663.9M959.3 667.4L978.2 685.2M959.3 667.4L949.8 690.8M949.8 690.8L978.2 685.2M949.8 690.8L969 712.5M949.8 690.8L944.2 717.2M969 712.5L994.8 709M969 712.5L985.3 733.8M969 712.5L961 735.2M961 735.2L985.3 733.8M961 735.2L975.8 757M961 735.2L953.2 762.6M880.2 227.9L909.1 223.8M880.2 227.9L899.1 250.5M880.2 227.9L871.9 254.2M899.1 250.5L921.7 245.8M899.1 250.5L916.2 270.6M899.1 250.5L892 278.2M892 278.2L916.2 270.6M892 278.2L906 294.2M892 278.2L880 299.3M906 294.2L935.4 291.1M906 294.2L925.9 318.4M906 294.2L902.6 322.8M902.6 322.8L925.9 318.4M902.6 322.8L918.8 342.1M902.6 322.8L889.6 346.8M918.8 342.1L947.8 338.2M918.8 342.1L937.1 359.6M918.8 342.1L908.7 369.6M908.7 369.6L937.1 359.6M908.7 369.6L928.3 385.9M908.7 369.6L899 395.4M928.3 385.9L953.5 379.4M928.3 385.9L948.8 408.7M928.3 385.9L917.3 409.6M917.3 409.6L948.8 408.7M917.3 409.6L940.4 434.4M917.3 409.6L913.3 435.7M940.4 434.4L966.1 429M940.4 434.4L959.1 453.7M940.4 434.4L926 456.8M926 456.8L959.1 453.7M926 456.8L947.2 478.1M926 456.8L922.8 486.3M947.2 478.1L972.5 474.3M947.2 478.1L963.8 498.9M947.2 478.1L938.1 506.5M938.1 506.5L963.8 498.9M938.1 506.5L956 524.1M938.1 506.5L928.6 526.1M956 524.1L981.1 520.7M956 524.1L975.1 542.3M956 524.1L951.7 550.5M951.7 550.5L975.1 542.3M951.7 550.5L966.6 568.4M951.7 550.5L943.2 578.4M966.6 568.4L996.2 561M966.6 568.4L987.9 591.4M966.6 568.4L957.7 596M957.7 596L987.9 591.4M957.7 596L978.5 613.6M957.7 596L950.5 618.4M978.5 613.6L1000.5 611.5M978.5 613.6L995.1 638.2M978.5 613.6L967.3 640.2M967.3 640.2L995.1 638.2M967.3 640.2L985.3 663.9M967.3 640.2L959.3 667.4M985.3 663.9L1013.3 654.9M985.3 663.9L1007.4 678.2M985.3 663.9L978.2 685.2M978.2 685.2L1007.4 678.2M978.2 685.2L994.8 709M978.2 685.2L969 712.5M994.8 709L1024.3 698.4M994.8 709L1012.5 724.2M994.8 709L985.3 733.8M985.3 733.8L1012.5 724.2M985.3 733.8L1002.4 750.4M985.3 733.8L975.8 757M909.1 223.8L935.6 219.4M909.1 223.8L921.7 245.8M909.1 223.8L899.1 250.5M921.7 245.8L953.3 236.3M921.7 245.8L943 266.1M921.7 245.8L916.2 270.6M916.2 270.6L943 266.1M916.2 270.6L935.4 291.1M916.2 270.6L906 294.2M935.4 291.1L964.5 286.9M935.4 291.1L950.6 310.9M935.4 291.1L925.9 318.4M925.9 318.4L950.6 310.9M925.9 318.4L947.8 338.2M925.9 318.4L918.8 342.1M947.8 338.2L971.4 329M947.8 338.2L960.3 352.8M947.8 338.2L937.1 359.6M937.1 359.6L960.3 352.8M937.1 359.6L953.5 379.4M937.1 359.6L928.3 385.9M953.5 379.4L980.5 375.3M953.5 379.4L970.8 400.1M953.5 379.4L948.8 408.7M948.8 408.7L970.8 400.1M948.8 408.7L966.1 429M948.8 408.7L940.4 434.4M966.1 429L990.8 422.9M966.1 429L982.7 444.4M966.1 429L959.1 453.7M959.1 453.7L982.7 444.4M959.1 453.7L972.5 474.3M959.1 453.7L947.2 478.1M972.5 474.3L1002.9 465.9M972.5 474.3L995.1 495.9M972.5 474.3L963.8 498.9M963.8 498.9L995.1 495.9M963.8 498.9L981.1 520.7M963.8 498.9L956 524.1M981.1 520.7L1007.4 513.2M981.1 520.7L1004.8 537.5M981.1 520.7L975.1 542.3M975.1 542.3L1004.8 537.5M975.1 542.3L996.2 561M975.1 542.3L966.6 568.4M996.2 561L1020 557M996.2 561L1008 582M996.2 561L987.9 591.4M987.9 591.4L1008 582M987.9 591.4L1000.5 611.5M987.9 591.4L978.5 613.6M1000.5 611.5L1026.7 602.6M1000.5 611.5L1021.9 630.2M1000.5 611.5L995.1 638.2M995.1 638.2L1021.9 630.2M995.1 638.2L1013.3 654.9M995.1 638.2L985.3 663.9M1013.3 654.9L1042.2 651.1M1013.3 654.9L1029.8 678.6M1013.3 654.9L1007.4 678.2M1007.4 678.2L1029.8 678.6M1007.4 678.2L1024.3 698.4M1007.4 678.2L994.8 709M1024.3 698.4L1049.7 695.9M1024.3 698.4L1043 722.4M1024.3 698.4L1012.5 724.2M1012.5 724.2L1043 722.4M1012.5 724.2L1034.7 746.5M1012.5 724.2L1002.4 750.4M935.6 219.4L956.5 209.4M935.6 219.4L953.3 236.3M935.6 219.4L921.7 245.8M953.3 236.3L977.4 230.7M953.3 236.3L971.4 256.4M953.3 236.3L943 266.1M943 266.1L971.4 256.4M943 266.1L964.5 286.9M943 266.1L935.4 291.1M964.5 286.9L990 276.5M964.5 286.9L976.5 303.8M964.5 286.9L950.6 310.9M950.6 310.9L976.5 303.8M950.6 310.9L971.4 329M950.6 310.9L947.8 338.2M971.4 329L996.6 322.9M971.4 329L990.9 347.8M971.4 329L960.3 352.8M960.3 352.8L990.9 347.8M960.3 352.8L980.5 375.3M960.3 352.8L953.5 379.4M980.5 375.3L1008.3 372.1M980.5 375.3L998.5 395.5M980.5 375.3L970.8 400.1M970.8 400.1L998.5 395.5M970.8 400.1L990.8 422.9M970.8 400.1L966.1 429M990.8 422.9L1019.8 416.2M990.8 422.9L1006.3 438.2M990.8 422.9L982.7 444.4M982.7 444.4L1006.3 438.2M982.7 444.4L1002.9 465.9M982.7 444.4L972.5 474.3M1002.9 465.9L1023.7 460.1M1002.9 465.9L1015.4 488M1002.9 465.9L995.1 495.9M995.1 495.9L1015.4 488M995.1 495.9L1007.4 513.2M995.1 495.9L981.1 520.7M1007.4 513.2L1035.8 505.6M1007.4 513.2L1028.1 535.7M1007.4 513.2L1004.8 537.5M1004.8 537.5L1028.1 535.7M1004.8 537.5L1020 557M1004.8 537.5L996.2 561M1020 557L1044.2 550.3M1020 557L1036.3 577.2M1020 557L1008 582M1008 582L1036.3 577.2M1008 582L1026.7 602.6M1008 582L1000.5 611.5M1026.7 602.6L1058.6 599.9M1026.7 602.6L1046.9 621.8M1026.7 602.6L1021.9 630.2M1021.9 630.2L1046.9 621.8M1021.9 630.2L1042.2 651.1M1021.9 630.2L1013.3 654.9M1042.2 651.1L1062.3 641.6M1042.2 651.1L1059.6 670.9M1042.2 651.1L1029.8 678.6M1029.8 678.6L1059.6 670.9M1029.8 678.6L1049.7 695.9M1029.8 678.6L1024.3 698.4M1049.7 695.9L1072.8 690.8M1049.7 695.9L1063.8 715.7M1049.7 695.9L1043 722.4M1043 722.4L1063.8 715.7M1043 722.4L1057.5 742M1043 722.4L1034.7 746.5M977.4 230.7L1003.4 229.5M977.4 230.7L999.5 251.3M977.4 230.7L971.4 256.4M971.4 256.4L999.5 251.3M971.4 256.4L990 276.5M971.4 256.4L964.5 286.9M990 276.5L1017 274.7M990 276.5L1008.3 299M990 276.5L976.5 303.8M976.5 303.8L1008.3 299M976.5 303.8L996.6 322.9M976.5 303.8L971.4 329M996.6 322.9L1027.1 319.4M996.6 322.9L1018.6 344.5M996.6 322.9L990.9 347.8M990.9 347.8L1018.6 344.5M990.9 347.8L1008.3 372.1M990.9 347.8L980.5 375.3M1008.3 372.1L1031.4 364.3M1008.3 372.1L1025.1 388.7M1008.3 372.1L998.5 395.5M998.5 395.5L1025.1 388.7M998.5 395.5L1019.8 416.2M998.5 395.5L990.8 422.9M1019.8 416.2L1042.4 410M1019.8 416.2L1035.6 433.6M1019.8 416.2L1006.3 438.2M1006.3 438.2L1035.6 433.6M1006.3 438.2L1023.7 460.1M1006.3 438.2L1002.9 465.9M1023.7 460.1L1051.4 455.7M1023.7 460.1L1044.7 480.7M1023.7 460.1L1015.4 488M1015.4 488L1044.7 480.7M1015.4 488L1035.8 505.6M1015.4 488L1007.4 513.2M1035.8 505.6L1063.9 499.2M1035.8 505.6L1054.6 525.5M1035.8 505.6L1028.1 535.7M1028.1 535.7L1054.6 525.5M1028.1 535.7L1044.2 550.3M1028.1 535.7L1020 557M1044.2 550.3L1074.3 548.5M1044.2 550.3L1066.1 572.9M1044.2 550.3L1036.3 577.2M1036.3 577.2L1066.1 572.9M1036.3 577.2L1058.6 599.9M1036.3 577.2L1026.7 602.6M1058.6 599.9L1080.4 595.8M1058.6 599.9L1073.9 617.7M1058.6 599.9L1046.9 621.8M1046.9 621.8L1073.9 617.7M1046.9 621.8L1062.3 641.6M1046.9 621.8L1042.2 651.1M1062.3 641.6L1090.4 637.9M1062.3 641.6L1085 666.5M1062.3 641.6L1059.6 670.9M1059.6 670.9L1085 666.5M1059.6 670.9L1072.8 690.8M1059.6 670.9L1049.7 695.9M1072.8 690.8L1101.5 686M1072.8 690.8L1091.3 709.7M1072.8 690.8L1063.8 715.7M1063.8 715.7L1091.3 709.7M1063.8 715.7L1083.8 732.9M1063.8 715.7L1057.5 742M1083.8 732.9L1110.3 728.7M1083.8 732.9L1102 757.5M1083.8 732.9L1078.3 762.9M1003.4 229.5L1029.6 218.1M1003.4 229.5L1021.2 248M1003.4 229.5L999.5 251.3M999.5 251.3L1021.2 248M999.5 251.3L1017 274.7M999.5 251.3L990 276.5M1017 274.7L1041.2 267.1M1017 274.7L1029.5 290.7M1017 274.7L1008.3 299M1008.3 299L1029.5 290.7M1008.3 299L1027.1 319.4M1008.3 299L996.6 322.9M1027.1 319.4L1048.9 312.2M1027.1 319.4L1040.9 341.3M1027.1 319.4L1018.6 344.5M1018.6 344.5L1040.9 341.3M1018.6 344.5L1031.4 364.3M1018.6 344.5L1008.3 372.1M1031.4 364.3L1057.3 361.9M1031.4 364.3L1049.8 386.7M1031.4 364.3L1025.1 388.7M1025.1 388.7L1049.8 386.7M1025.1 388.7L1042.4 410M1025.1 388.7L1019.8 416.2M1042.4 410L1067.9 404.9M1042.4 410L1060.5 426.7M1042.4 410L1035.6 433.6M1035.6 433.6L1060.5 426.7M1035.6 433.6L1051.4 455.7M1035.6 433.6L1023.7 460.1M1051.4 455.7L1081.5 452.2M1051.4 455.7L1069.5 477.6M1051.4 455.7L1044.7 480.7M1044.7 480.7L1069.5 477.6M1044.7 480.7L1063.9 499.2M1044.7 480.7L1035.8 505.6M1063.9 499.2L1089 499.2M1063.9 499.2L1077.7 520.6M1063.9 499.2L1054.6 525.5M1054.6 525.5L1077.7 520.6M1054.6 525.5L1074.3 548.5M1054.6 525.5L1044.2 550.3M1074.3 548.5L1097 542.4M1074.3 548.5L1092.5 569.6M1074.3 548.5L1066.1 572.9M1066.1 572.9L1092.5 569.6M1066.1 572.9L1080.4 595.8M1066.1 572.9L1058.6 599.9M1080.4 595.8L1108.9 586.5M1080.4 595.8L1102.3 610.2M1080.4 595.8L1073.9 617.7M1073.9 617.7L1102.3 610.2M1073.9 617.7L1090.4 637.9M1073.9 617.7L1062.3 641.6M1090.4 637.9L1116.6 634.8M1090.4 637.9L1109.5 662.1M1090.4 637.9L1085 666.5M1085 666.5L1109.5 662.1M1085 666.5L1101.5 686M1085 666.5L1072.8 690.8M1101.5 686L1125.2 678.5M1101.5 686L1117.7 700.9M1101.5 686L1091.3 709.7M1091.3 709.7L1117.7 700.9M1091.3 709.7L1110.3 728.7M1091.3 709.7L1083.8 732.9M1110.3 728.7L1134.9 721.6M1110.3 728.7L1128.5 749.7M1110.3 728.7L1102 757.5M1029.6 218.1L1056.8 218M1029.6 218.1L1049.3 243.1M1029.6 218.1L1021.2 248M1021.2 248L1049.3 243.1M1021.2 248L1041.2 267.1M1021.2 248L1017 274.7M1041.2 267.1L1066 261.1M1041.2 267.1L1061.9 289.4M1041.2 267.1L1029.5 290.7M1029.5 290.7L1061.9 289.4M1029.5 290.7L1048.9 312.2M1029.5 290.7L1027.1 319.4M1048.9 312.2L1077.7 304.4M1048.9 312.2L1069.1 329.6M1048.9 312.2L1040.9 341.3M1040.9 341.3L1069.1 329.6M1040.9 341.3L1057.3 361.9M1040.9 341.3L1031.4 364.3M1057.3 361.9L1089.4 356.2M1057.3 361.9L1079.6 377M1057.3 361.9L1049.8 386.7M1049.8 386.7L1079.6 377M1049.8 386.7L1067.9 404.9M1049.8 386.7L1042.4 410M1067.9 404.9L1098.5 396.4M1067.9 404.9L1090 424.5M1067.9 404.9L1060.5 426.7M1060.5 426.7L1090 424.5M1060.5 426.7L1081.5 452.2M1060.5 426.7L1051.4 455.7M1081.5 452.2L1102.4 447.1M1081.5 452.2L1097.1 472.4M1081.5 452.2L1069.5 477.6M1069.5 477.6L1097.1 472.4M1069.5 477.6L1089 499.2M1069.5 477.6L1063.9 499.2M1089 499.2L1116.9 490.4M1089 499.2L1109.7 513.7M1089 499.2L1077.7 520.6M1077.7 520.6L1109.7 513.7M1077.7 520.6L1097 542.4M1077.7 520.6L1074.3 548.5M1097 542.4L1128.1 534.8M1097 542.4L1113.6 560.4M1097 542.4L1092.5 569.6M1092.5 569.6L1113.6 560.4M1092.5 569.6L1108.9 586.5M1092.5 569.6L1080.4 595.8M1108.9 586.5L1132 578.6M1108.9 586.5L1127.5 604.7M1108.9 586.5L1102.3 610.2M1102.3 610.2L1127.5 604.7M1102.3 610.2L1116.6 634.8M1102.3 610.2L1090.4 637.9M1116.6 634.8L1142.3 625.9M1116.6 634.8L1134.8 656M1116.6 634.8L1109.5 662.1M1109.5 662.1L1134.8 656M1109.5 662.1L1125.2 678.5M1109.5 662.1L1101.5 686M1125.2 678.5L1157.3 675.7M1125.2 678.5L1149.5 698.4M1125.2 678.5L1117.7 700.9M1117.7 700.9L1149.5 698.4M1117.7 700.9L1134.9 721.6M1117.7 700.9L1110.3 728.7M1134.9 721.6L1166.2 717.3M1134.9 721.6L1158.8 746.7M1134.9 721.6L1128.5 749.7M1056.8 218L1080.8 209.5M1056.8 218L1075.3 233.3M1056.8 218L1049.3 243.1M1049.3 243.1L1075.3 233.3M1049.3 243.1L1066 261.1M1049.3 243.1L1041.2 267.1M1066 261.1L1091.4 258.4M1066 261.1L1084.2 279M1066 261.1L1061.9 289.4M1061.9 289.4L1084.2 279M1061.9 289.4L1077.7 304.4M1061.9 289.4L1048.9 312.2M1077.7 304.4L1100.8 302.1M1077.7 304.4L1092.5 327.1M1077.7 304.4L1069.1 329.6M1069.1 329.6L1092.5 327.1M1069.1 329.6L1089.4 356.2M1069.1 329.6L1057.3 361.9M1089.4 356.2L1113 346.9M1089.4 356.2L1104.5 375.3M1089.4 356.2L1079.6 377M1079.6 377L1104.5 375.3M1079.6 377L1098.5 396.4M1079.6 377L1067.9 404.9M1098.5 396.4L1119.1 396.1M1098.5 396.4L1112.1 415.5M1098.5 396.4L1090 424.5M1090 424.5L1112.1 415.5M1090 424.5L1102.4 447.1M1090 424.5L1081.5 452.2M1102.4 447.1L1134.1 439.3M1102.4 447.1L1124.2 462.5M1102.4 447.1L1097.1 472.4M1097.1 472.4L1124.2 462.5M1097.1 472.4L1116.9 490.4M1097.1 472.4L1089 499.2M1116.9 490.4L1143.9 483.2M1116.9 490.4L1135.2 508.3M1116.9 490.4L1109.7 513.7M1109.7 513.7L1135.2 508.3M1109.7 513.7L1128.1 534.8M1109.7 513.7L1097 542.4M1128.1 534.8L1152.2 531.3M1128.1 534.8L1142.4 555.8M1128.1 534.8L1113.6 560.4M1113.6 560.4L1142.4 555.8M1113.6 560.4L1132 578.6M1113.6 560.4L1108.9 586.5M1132 578.6L1158.4 577M1132 578.6L1154.4 599.3M1132 578.6L1127.5 604.7M1127.5 604.7L1154.4 599.3M1127.5 604.7L1142.3 625.9M1127.5 604.7L1116.6 634.8M1142.3 625.9L1171.5 623.4M1142.3 625.9L1160 649.8M1142.3 625.9L1134.8 656M1134.8 656L1160 649.8M1134.8 656L1157.3 675.7M1134.8 656L1125.2 678.5M1157.3 675.7L1183.4 664.4M1157.3 675.7L1170.7 690.3M1157.3 675.7L1149.5 698.4M1149.5 698.4L1170.7 690.3M1149.5 698.4L1166.2 717.3M1149.5 698.4L1134.9 721.6M1166.2 717.3L1188.8 710.3M1166.2 717.3L1182.1 737.2M1166.2 717.3L1158.8 746.7M1075.3 233.3L1100.8 227.9M1075.3 233.3L1091.4 258.4M1075.3 233.3L1066 261.1M1091.4 258.4L1119 250.2M1091.4 258.4L1110.8 273.2M1091.4 258.4L1084.2 279M1084.2 279L1110.8 273.2M1084.2 279L1100.8 302.1M1084.2 279L1077.7 304.4M1100.8 302.1L1129.6 294.5M1100.8 302.1L1124.4 320.8M1100.8 302.1L1092.5 327.1M1092.5 327.1L1124.4 320.8M1092.5 327.1L1113 346.9M1092.5 327.1L1089.4 356.2M1113 346.9L1138.7 339.8M1113 346.9L1134.1 366.1M1113 346.9L1104.5 375.3M1104.5 375.3L1134.1 366.1M1104.5 375.3L1119.1 396.1M1104.5 375.3L1098.5 396.4M1119.1 396.1L1149.9 389.8M1119.1 396.1L1139.8 414.9M1119.1 396.1L1112.1 415.5M1112.1 415.5L1139.8 414.9M1112.1 415.5L1134.1 439.3M1112.1 415.5L1102.4 447.1M1134.1 439.3L1157.1 430.4M1134.1 439.3L1147.1 458.5M1134.1 439.3L1124.2 462.5M1124.2 462.5L1147.1 458.5M1124.2 462.5L1143.9 483.2M1124.2 462.5L1116.9 490.4M1143.9 483.2L1171 476.8M1143.9 483.2L1159.6 506.4M1143.9 483.2L1135.2 508.3M1135.2 508.3L1159.6 506.4M1135.2 508.3L1152.2 531.3M1135.2 508.3L1128.1 534.8M1152.2 531.3L1176.5 522.2M1152.2 531.3L1169.9 549.8M1152.2 531.3L1142.4 555.8M1142.4 555.8L1169.9 549.8M1142.4 555.8L1158.4 577M1142.4 555.8L1132 578.6M1158.4 577L1190.9 573.2M1158.4 577L1177.6 596.5M1158.4 577L1154.4 599.3M1154.4 599.3L1177.6 596.5M1154.4 599.3L1171.5 623.4M1154.4 599.3L1142.3 625.9M1171.5 623.4L1196.9 612.9M1171.5 623.4L1188.8 644.7M1171.5 623.4L1160 649.8M1160 649.8L1188.8 644.7M1160 649.8L1183.4 664.4M1160 649.8L1157.3 675.7M1183.4 664.4L1205.9 662.5M1183.4 664.4L1200.4 684.5M1183.4 664.4L1170.7 690.3M1170.7 690.3L1200.4 684.5M1170.7 690.3L1188.8 710.3M1170.7 690.3L1166.2 717.3M1188.8 710.3L1219.9 704.9M1188.8 710.3L1207.2 734.8M1188.8 710.3L1182.1 737.2M1100.8 227.9L1129.1 225.8M1100.8 227.9L1119 250.2M1100.8 227.9L1091.4 258.4M1119 250.2L1143 242.4M1119 250.2L1141 269.5M1119 250.2L1110.8 273.2M1110.8 273.2L1141 269.5M1110.8 273.2L1129.6 294.5M1110.8 273.2L1100.8 302.1M1129.6 294.5L1155.4 289.5M1129.6 294.5L1148.9 317.7M1129.6 294.5L1124.4 320.8M1124.4 320.8L1148.9 317.7M1124.4 320.8L1138.7 339.8M1124.4 320.8L1113 346.9M1138.7 339.8L1166.7 335.4M1138.7 339.8L1157.7 361.9M1138.7 339.8L1134.1 366.1M1134.1 366.1L1157.7 361.9M1134.1 366.1L1149.9 389.8M1134.1 366.1L1119.1 396.1M1149.9 389.8L1173.1 385M1149.9 389.8L1170.2 409.4M1149.9 389.8L1139.8 414.9M1139.8 414.9L1170.2 409.4M1139.8 414.9L1157.1 430.4M1139.8 414.9L1134.1 439.3M1157.1 430.4L1188.5 427.3M1157.1 430.4L1179.1 451.4M1157.1 430.4L1147.1 458.5M1147.1 458.5L1179.1 451.4M1147.1 458.5L1171 476.8M1147.1 458.5L1143.9 483.2M1171 476.8L1196.5 474.8M1171 476.8L1189.5 501.3M1171 476.8L1159.6 506.4M1159.6 506.4L1189.5 501.3M1159.6 506.4L1176.5 522.2M1159.6 506.4L1152.2 531.3M1176.5 522.2L1207.2 517.4M1176.5 522.2L1198.2 544.6M1176.5 522.2L1169.9 549.8M1169.9 549.8L1198.2 544.6M1169.9 549.8L1190.9 573.2M1169.9 549.8L1158.4 577M1190.9 573.2L1212.9 563.9M1190.9 573.2L1208 592.9M1190.9 573.2L1177.6 596.5M1177.6 596.5L1208 592.9M1177.6 596.5L1196.9 612.9M1177.6 596.5L1171.5 623.4M1196.9 612.9L1226.4 611.7M1196.9 612.9L1213.3 633.8M1196.9 612.9L1188.8 644.7M1188.8 644.7L1213.3 633.8M1188.8 644.7L1205.9 662.5M1188.8 644.7L1183.4 664.4M1205.9 662.5L1234.1 654.3M1205.9 662.5L1224.2 679.2M1205.9 662.5L1200.4 684.5M1200.4 684.5L1224.2 679.2M1200.4 684.5L1219.9 704.9M1200.4 684.5L1188.8 710.3M1219.9 704.9L1241 703.5M1219.9 704.9L1233.1 730.1M1219.9 704.9L1207.2 734.8M1207.2 734.8L1233.1 730.1M1207.2 734.8L1223.3 752.5M1207.2 734.8L1198.9 758.7M1129.1 225.8L1154.1 221M1129.1 225.8L1143 242.4M1129.1 225.8L1119 250.2M1143 242.4L1173.5 236.7M1143 242.4L1167.5 262.4M1143 242.4L1141 269.5M1141 269.5L1167.5 262.4M1141 269.5L1155.4 289.5M1141 269.5L1129.6 294.5M1155.4 289.5L1179.3 284.4M1155.4 289.5L1170.6 310.3M1155.4 289.5L1148.9 317.7M1148.9 317.7L1170.6 310.3M1148.9 317.7L1166.7 335.4M1148.9 317.7L1138.7 339.8M1166.7 335.4L1191.4 333.6M1166.7 335.4L1183.1 358.6M1166.7 335.4L1157.7 361.9M1157.7 361.9L1183.1 358.6M1157.7 361.9L1173.1 385M1157.7 361.9L1149.9 389.8M1173.1 385L1203.7 376.8M1173.1 385L1191.6 400.5M1173.1 385L1170.2 409.4M1170.2 409.4L1191.6 400.5M1170.2 409.4L1188.5 427.3M1170.2 409.4L1157.1 430.4M1188.5 427.3L1211.4 421.2M1188.5 427.3L1204.1 447.7M1188.5 427.3L1179.1 451.4M1179.1 451.4L1204.1 447.7M1179.1 451.4L1196.5 474.8M1179.1 451.4L1171 476.8M1196.5 474.8L1219.9 468.4M1196.5 474.8L1216.3 491.3M1196.5 474.8L1189.5 501.3M1189.5 501.3L1216.3 491.3M1189.5 501.3L1207.2 517.4M1189.5 501.3L1176.5 522.2M1207.2 517.4L1229.8 510M1207.2 517.4L1219.7 536M1207.2 517.4L1198.2 544.6M1198.2 544.6L1219.7 536M1198.2 544.6L1212.9 563.9M1198.2 544.6L1190.9 573.2M1212.9 563.9L1240.1 561.5M1212.9 563.9L1233.7 588.1M1212.9 563.9L1208 592.9M1208 592.9L1233.7 588.1M1208 592.9L1226.4 611.7M1208 592.9L1196.9 612.9M1226.4 611.7L1252.7 605.5M1226.4 611.7L1242.6 627.2M1226.4 611.7L1213.3 633.8M1213.3 633.8L1242.6 627.2M1213.3 633.8L1234.1 654.3M1213.3 633.8L1205.9 662.5M1234.1 654.3L1259.3 649M1234.1 654.3L1252.6 673.3M1234.1 654.3L1224.2 679.2M1224.2 679.2L1252.6 673.3M1224.2 679.2L1241 703.5M1224.2 679.2L1219.9 704.9M1241 703.5L1270.1 695.5M1241 703.5L1261.4 721.4M1241 703.5L1233.1 730.1M1233.1 730.1L1261.4 721.4M1233.1 730.1L1251.9 750.2M1233.1 730.1L1223.3 752.5M1154.1 221L1180.2 213.6M1154.1 221L1173.5 236.7M1154.1 221L1143 242.4M1173.5 236.7L1202 230.3M1173.5 236.7L1189.4 256.6M1173.5 236.7L1167.5 262.4M1167.5 262.4L1189.4 256.6M1167.5 262.4L1179.3 284.4M1167.5 262.4L1155.4 289.5M1179.3 284.4L1206.1 277.7M1179.3 284.4L1201.8 305.3M1179.3 284.4L1170.6 310.3M1170.6 310.3L1201.8 305.3M1170.6 310.3L1191.4 333.6M1170.6 310.3L1166.7 335.4M1191.4 333.6L1215.8 327M1191.4 333.6L1210.1 348M1191.4 333.6L1183.1 358.6M1183.1 358.6L1210.1 348M1183.1 358.6L1203.7 376.8M1183.1 358.6L1173.1 385M1203.7 376.8L1230.4 372.8M1203.7 376.8L1217.8 399.3M1203.7 376.8L1191.6 400.5M1191.6 400.5L1217.8 399.3M1191.6 400.5L1211.4 421.2M1191.6 400.5L1188.5 427.3M1211.4 421.2L1240 414.4M1211.4 421.2L1226 444.6M1211.4 421.2L1204.1 447.7M1204.1 447.7L1226 444.6M1204.1 447.7L1219.9 468.4M1204.1 447.7L1196.5 474.8M1219.9 468.4L1249.9 459.3M1219.9 468.4L1241.1 489.7M1219.9 468.4L1216.3 491.3M1216.3 491.3L1241.1 489.7M1216.3 491.3L1229.8 510M1216.3 491.3L1207.2 517.4M1229.8 510L1258.3 510.1M1229.8 510L1252.4 532.3M1229.8 510L1219.7 536M1219.7 536L1252.4 532.3M1219.7 536L1240.1 561.5M1219.7 536L1212.9 563.9M1240.1 561.5L1269.4 556.5M1240.1 561.5L1257.4 580.5M1240.1 561.5L1233.7 588.1M1233.7 588.1L1257.4 580.5M1233.7 588.1L1252.7 605.5M1233.7 588.1L1226.4 611.7M1252.7 605.5L1278.1 601.7M1252.7 605.5L1268.9 623.4M1252.7 605.5L1242.6 627.2M1242.6 627.2L1268.9 623.4M1242.6 627.2L1259.3 649M1242.6 627.2L1234.1 654.3M1259.3 649L1284.7 645.3M1259.3 649L1275.6 673.2M1259.3 649L1252.6 673.3M1252.6 673.3L1275.6 673.2M1252.6 673.3L1270.1 695.5M1252.6 673.3L1241 703.5M1270.1 695.5L1298.9 689M1270.1 695.5L1289.2 717.7M1270.1 695.5L1261.4 721.4M1261.4 721.4L1289.2 717.7M1261.4 721.4L1276.7 743.8M1261.4 721.4L1251.9 750.2M1180.2 213.6L1210.3 207.5M1180.2 213.6L1202 230.3M1180.2 213.6L1173.5 236.7M1202 230.3L1228.6 225.2M1202 230.3L1220 254.4M1202 230.3L1189.4 256.6M1189.4 256.6L1220 254.4M1189.4 256.6L1206.1 277.7M1189.4 256.6L1179.3 284.4M1206.1 277.7L1237.7 272.9M1206.1 277.7L1230.2 295.8M1206.1 277.7L1201.8 305.3M1201.8 305.3L1230.2 295.8M1201.8 305.3L1215.8 327M1201.8 305.3L1191.4 333.6M1215.8 327L1247.3 321.5M1215.8 327L1235.6 347.2M1215.8 327L1210.1 348M1210.1 348L1235.6 347.2M1210.1 348L1230.4 372.8M1210.1 348L1203.7 376.8M1230.4 372.8L1252.6 366.7M1230.4 372.8L1246 390M1230.4 372.8L1217.8 399.3M1217.8 399.3L1246 390M1217.8 399.3L1240 414.4M1217.8 399.3L1211.4 421.2M1240 414.4L1262.2 412.8M1240 414.4L1257.6 433.5M1240 414.4L1226 444.6M1226 444.6L1257.6 433.5M1226 444.6L1249.9 459.3M1226 444.6L1219.9 468.4M1249.9 459.3L1277.3 454.5M1249.9 459.3L1264.8 481.5M1249.9 459.3L1241.1 489.7M1241.1 489.7L1264.8 481.5M1241.1 489.7L1258.3 510.1M1241.1 489.7L1229.8 510M1258.3 510.1L1284.3 504.9M1258.3 510.1L1278.5 528.8M1258.3 510.1L1252.4 532.3M1252.4 532.3L1278.5 528.8M1252.4 532.3L1269.4 556.5M1252.4 532.3L1240.1 561.5M1269.4 556.5L1292.5 545.2M1269.4 556.5L1282.1 573.8M1269.4 556.5L1257.4 580.5M1257.4 580.5L1282.1 573.8M1257.4 580.5L1278.1 601.7M1257.4 580.5L1252.7 605.5M1278.1 601.7L1303.8 593.3M1278.1 601.7L1298.2 618.8M1278.1 601.7L1268.9 623.4M1268.9 623.4L1298.2 618.8M1268.9 623.4L1284.7 645.3M1268.9 623.4L1259.3 649M1284.7 645.3L1311.9 638.9M1284.7 645.3L1302.3 668.2M1284.7 645.3L1275.6 673.2M1275.6 673.2L1302.3 668.2M1275.6 673.2L1298.9 689M1275.6 673.2L1270.1 695.5M1298.9 689L1323.3 685.5M1298.9 689L1313.8 709.1M1298.9 689L1289.2 717.7M1289.2 717.7L1313.8 709.1M1289.2 717.7L1303.3 738.5M1289.2 717.7L1276.7 743.8M1228.6 225.2L1252.1 221.4M1228.6 225.2L1245.3 246.5M1228.6 225.2L1220 254.4M1220 254.4L1245.3 246.5M1220 254.4L1237.7 272.9M1220 254.4L1206.1 277.7M1237.7 272.9L1259.5 269.9M1237.7 272.9L1253.5 295.3M1237.7 272.9L1230.2 295.8M1230.2 295.8L1253.5 295.3M1230.2 295.8L1247.3 321.5M1230.2 295.8L1215.8 327M1247.3 321.5L1271.2 310.4M1247.3 321.5L1264.8 337.3M1247.3 321.5L1235.6 347.2M1235.6 347.2L1264.8 337.3M1235.6 347.2L1252.6 366.7M1235.6 347.2L1230.4 372.8M1252.6 366.7L1280.8 355.9M1252.6 366.7L1270.9 386.2M1252.6 366.7L1246 390M1246 390L1270.9 386.2M1246 390L1262.2 412.8M1246 390L1240 414.4M1262.2 412.8L1292.5 406.1M1262.2 412.8L1281.9 432.4M1262.2 412.8L1257.6 433.5M1257.6 433.5L1281.9 432.4M1257.6 433.5L1277.3 454.5M1257.6 433.5L1249.9 459.3M1277.3 454.5L1301.6 448.8M1277.3 454.5L1292.3 477.2M1277.3 454.5L1264.8 481.5M1264.8 481.5L1292.3 477.2M1264.8 481.5L1284.3 504.9M1264.8 481.5L1258.3 510.1M1284.3 504.9L1311.7 494.5M1284.3 504.9L1300.5 521.2M1284.3 504.9L1278.5 528.8M1278.5 528.8L1300.5 521.2M1278.5 528.8L1292.5 545.2M1278.5 528.8L1269.4 556.5M1292.5 545.2L1317 541.3M1292.5 545.2L1313.1 568.6M1292.5 545.2L1282.1 573.8M1282.1 573.8L1313.1 568.6M1282.1 573.8L1303.8 593.3M1282.1 573.8L1278.1 601.7M1303.8 593.3L1327.3 589.7M1303.8 593.3L1318.6 615.5M1303.8 593.3L1298.2 618.8M1298.2 618.8L1318.6 615.5M1298.2 618.8L1311.9 638.9M1298.2 618.8L1284.7 645.3M1311.9 638.9L1336.8 631M1311.9 638.9L1329.2 659.6M1311.9 638.9L1302.3 668.2M1302.3 668.2L1329.2 659.6M1302.3 668.2L1323.3 685.5M1302.3 668.2L1298.9 689M1323.3 685.5L1347.4 682.2M1323.3 685.5L1343.8 703.7M1323.3 685.5L1313.8 709.1M1313.8 709.1L1343.8 703.7M1313.8 709.1L1331 730.9M1313.8 709.1L1303.3 738.5M1331 730.9L1360.5 726.7M1331 730.9L1350.8 749.3M1331 730.9L1323.6 759.9M1252.1 221.4L1280.9 214.4M1252.1 221.4L1270.2 245.3M1252.1 221.4L1245.3 246.5M1245.3 246.5L1270.2 245.3M1245.3 246.5L1259.5 269.9M1245.3 246.5L1237.7 272.9M1259.5 269.9L1285.3 264.7M1259.5 269.9L1281.5 289.7M1259.5 269.9L1253.5 295.3M1253.5 295.3L1281.5 289.7M1253.5 295.3L1271.2 310.4M1253.5 295.3L1247.3 321.5M1271.2 310.4L1298.4 305.2M1271.2 310.4L1292.5 330.9M1271.2 310.4L1264.8 337.3M1264.8 337.3L1292.5 330.9M1264.8 337.3L1280.8 355.9M1264.8 337.3L1252.6 366.7M1280.8 355.9L1309.4 355.3M1280.8 355.9L1297.8 380.7M1280.8 355.9L1270.9 386.2M1270.9 386.2L1297.8 380.7M1270.9 386.2L1292.5 406.1M1270.9 386.2L1262.2 412.8M1292.5 406.1L1316.5 401.2M1292.5 406.1L1305.6 428.2M1292.5 406.1L1281.9 432.4M1281.9 432.4L1305.6 428.2M1281.9 432.4L1301.6 448.8M1281.9 432.4L1277.3 454.5M1301.6 448.8L1326 447.4M1301.6 448.8L1318.3 473.1M1301.6 448.8L1292.3 477.2M1292.3 477.2L1318.3 473.1M1292.3 477.2L1311.7 494.5M1292.3 477.2L1284.3 504.9M1311.7 494.5L1335.2 491.3M1311.7 494.5L1324.9 516.6M1311.7 494.5L1300.5 521.2M1300.5 521.2L1324.9 516.6M1300.5 521.2L1317 541.3M1300.5 521.2L1292.5 545.2M1317 541.3L1343.3 539.2M1317 541.3L1339.2 561.9M1317 541.3L1313.1 568.6M1313.1 568.6L1339.2 561.9M1313.1 568.6L1327.3 589.7M1313.1 568.6L1303.8 593.3M1327.3 589.7L1359.3 585.6M1327.3 589.7L1350.8 605.2M1327.3 589.7L1318.6 615.5M1318.6 615.5L1350.8 605.2M1318.6 615.5L1336.8 631M1318.6 615.5L1311.9 638.9M1336.8 631L1367.1 629.8M1336.8 631L1358.1 650.5M1336.8 631L1329.2 659.6M1329.2 659.6L1358.1 650.5M1329.2 659.6L1347.4 682.2M1329.2 659.6L1323.3 685.5M1347.4 682.2L1378.4 673.5M1347.4 682.2L1367.8 701.8M1347.4 682.2L1343.8 703.7M1343.8 703.7L1367.8 701.8M1343.8 703.7L1360.5 726.7M1343.8 703.7L1331 730.9M1360.5 726.7L1383.6 716.4M1360.5 726.7L1379.8 743.8M1360.5 726.7L1350.8 749.3M1280.9 214.4L1307.6 211.9M1280.9 214.4L1297.4 237.2M1280.9 214.4L1270.2 245.3M1270.2 245.3L1297.4 237.2M1270.2 245.3L1285.3 264.7M1270.2 245.3L1259.5 269.9M1285.3 264.7L1314.3 258.5M1285.3 264.7L1306.5 279.7M1285.3 264.7L1281.5 289.7M1281.5 289.7L1306.5 279.7M1281.5 289.7L1298.4 305.2M1281.5 289.7L1271.2 310.4M1298.4 305.2L1323.5 301.8M1298.4 305.2L1315.2 328.5M1298.4 305.2L1292.5 330.9M1292.5 330.9L1315.2 328.5M1292.5 330.9L1309.4 355.3M1292.5 330.9L1280.8 355.9M1309.4 355.3L1332.8 347.4M1309.4 355.3L1324.9 372.9M1309.4 355.3L1297.8 380.7M1297.8 380.7L1324.9 372.9M1297.8 380.7L1316.5 401.2M1297.8 380.7L1292.5 406.1M1316.5 401.2L1346.8 391M1316.5 401.2L1331.8 421.1M1316.5 401.2L1305.6 428.2M1305.6 428.2L1331.8 421.1M1305.6 428.2L1326 447.4M1305.6 428.2L1301.6 448.8M1326 447.4L1352.5 439.3M1326 447.4L1345.5 464.4M1326 447.4L1318.3 473.1M1318.3 473.1L1345.5 464.4M1318.3 473.1L1335.2 491.3M1318.3 473.1L1311.7 494.5M1335.2 491.3L1361.1 482M1335.2 491.3L1357.2 514.1M1335.2 491.3L1324.9 516.6M1324.9 516.6L1357.2 514.1M1324.9 516.6L1343.3 539.2M1324.9 516.6L1317 541.3M1343.3 539.2L1371.2 530.9M1343.3 539.2L1363.1 553.7M1343.3 539.2L1339.2 561.9M1339.2 561.9L1363.1 553.7M1339.2 561.9L1359.3 585.6M1339.2 561.9L1327.3 589.7M1359.3 585.6L1385.2 579.2M1359.3 585.6L1372.2 600.8M1359.3 585.6L1350.8 605.2M1350.8 605.2L1372.2 600.8M1350.8 605.2L1367.1 629.8M1350.8 605.2L1336.8 631M1367.1 629.8L1393.5 624.7M1367.1 629.8L1383.6 647.5M1367.1 629.8L1358.1 650.5M1358.1 650.5L1383.6 647.5M1358.1 650.5L1378.4 673.5M1358.1 650.5L1347.4 682.2M1378.4 673.5L1400 670.4M1378.4 673.5L1396 696.5M1378.4 673.5L1367.8 701.8M1367.8 701.8L1396 696.5M1367.8 701.8L1383.6 716.4M1367.8 701.8L1360.5 726.7M1383.6 716.4L1408.9 714.7M1383.6 716.4L1406.6 741.3M1383.6 716.4L1379.8 743.8M1297.4 237.2L1321.7 232.4M1297.4 237.2L1314.3 258.5M1297.4 237.2L1285.3 264.7M1314.3 258.5L1340.5 251.2M1314.3 258.5L1330.4 274.5M1314.3 258.5L1306.5 279.7M1306.5 279.7L1330.4 274.5M1306.5 279.7L1323.5 301.8M1306.5 279.7L1298.4 305.2M1323.5 301.8L1349.3 298.1M1323.5 301.8L1342.4 319M1323.5 301.8L1315.2 328.5M1315.2 328.5L1342.4 319M1315.2 328.5L1332.8 347.4M1315.2 328.5L1309.4 355.3M1332.8 347.4L1361.7 342.1M1332.8 347.4L1348.8 366.5M1332.8 347.4L1324.9 372.9M1324.9 372.9L1348.8 366.5M1324.9 372.9L1346.8 391M1324.9 372.9L1316.5 401.2M1346.8 391L1367.9 390.5M1346.8 391L1361.9 412.7M1346.8 391L1331.8 421.1M1331.8 421.1L1361.9 412.7M1331.8 421.1L1352.5 439.3M1331.8 421.1L1326 447.4M1352.5 439.3L1377.9 432.5M1352.5 439.3L1369.8 458.6M1352.5 439.3L1345.5 464.4M1345.5 464.4L1369.8 458.6M1345.5 464.4L1361.1 482M1345.5 464.4L1335.2 491.3M1361.1 482L1391.4 481.8M1361.1 482L1382.4 508.1M1361.1 482L1357.2 514.1M1357.2 514.1L1382.4 508.1M1357.2 514.1L1371.2 530.9M1357.2 514.1L1343.3 539.2M1371.2 530.9L1400.2 522.8M1371.2 530.9L1387.6 548.8M1371.2 530.9L1363.1 553.7M1363.1 553.7L1387.6 548.8M1363.1 553.7L1385.2 579.2M1363.1 553.7L1359.3 585.6M1385.2 579.2L1407.1 571.4M1385.2 579.2L1402.7 597.5M1385.2 579.2L1372.2 600.8M1372.2 600.8L1402.7 597.5M1372.2 600.8L1393.5 624.7M1372.2 600.8L1367.1 629.8M1383.6 647.5L1413.6 644.4M1383.6 647.5L1400 670.4M1383.6 647.5L1378.4 673.5M1321.7 232.4L1347.9 224.7M1321.7 232.4L1340.5 251.2M1321.7 232.4L1314.3 258.5M1340.5 251.2L1367.4 242.6M1340.5 251.2L1360.3 273.2M1340.5 251.2L1330.4 274.5M1330.4 274.5L1360.3 273.2M1330.4 274.5L1349.3 298.1M1330.4 274.5L1323.5 301.8M1349.3 298.1L1379 293.8M1349.3 298.1L1367.3 314.4M1349.3 298.1L1342.4 319M1342.4 319L1367.3 314.4M1342.4 319L1361.7 342.1M1342.4 319L1332.8 347.4M1361.7 342.1L1388.4 338.3M1361.7 342.1L1377.4 361.5M1361.7 342.1L1348.8 366.5M1348.8 366.5L1377.4 361.5M1348.8 366.5L1367.9 390.5M1348.8 366.5L1346.8 391M1367.9 390.5L1393.9 385M1367.9 390.5L1387.7 410.5M1367.9 390.5L1361.9 412.7M1361.9 412.7L1387.7 410.5M1361.9 412.7L1377.9 432.5M1361.9 412.7L1352.5 439.3M1377.9 432.5L1404.9 427.1M1377.9 432.5L1397.8 455.8M1377.9 432.5L1369.8 458.6M1369.8 458.6L1397.8 455.8M1369.8 458.6L1391.4 481.8M1369.8 458.6L1361.1 482M1391.4 481.8L1418.5 473.1M1391.4 481.8L1408.8 499.1M1391.4 481.8L1382.4 508.1M1382.4 508.1L1408.8 499.1M1382.4 508.1L1400.2 522.8M1382.4 508.1L1371.2 530.9M1387.6 548.8L1417.5 544.6M1387.6 548.8L1407.1 571.4M1387.6 548.8L1385.2 579.2M1347.9 224.7L1378.7 217.8M1347.9 224.7L1367.4 242.6M1347.9 224.7L1340.5 251.2M1367.4 242.6L1391.6 236.5M1367.4 242.6L1383.6 262.4M1367.4 242.6L1360.3 273.2M1360.3 273.2L1383.6 262.4M1360.3 273.2L1379 293.8M1360.3 273.2L1349.3 298.1M1379 293.8L1403.5 284.2M1379 293.8L1396.2 311.7M1379 293.8L1367.3 314.4M1367.3 314.4L1396.2 311.7M1367.3 314.4L1388.4 338.3M1367.3 314.4L1361.7 342.1M1388.4 338.3L1413.7 329.9M1388.4 338.3L1406.3 358.3M1388.4 338.3L1377.4 361.5M1377.4 361.5L1406.3 358.3M1377.4 361.5L1393.9 385M1377.4 361.5L1367.9 390.5M1387.7 410.5L1414.1 401.2M1387.7 410.5L1404.9 427.1M1387.7 410.5L1377.9 432.5M1378.7 217.8L1399.6 210.7M1378.7 217.8L1391.6 236.5M1378.7 217.8L1367.4 242.6M1391.6 236.5L1421.8 234.9M1391.6 236.5L1410.7 256.5M1391.6 236.5L1383.6 262.4M1383.6 262.4L1410.7 256.5M1383.6 262.4L1403.5 284.2M1383.6 262.4L1379 293.8" stroke="#000" stroke-width="1.15" fill="none"/><path d="M794 240L794 253L590 300.5Q568 306 568 322L604.2 440L700 330L850 240Z" fill="#5c5c5c"/><path d="M1000 240L1370 240L1370 420L1300 420L1200 330Z" fill="#5c5c5c"/><path d="M845 240L840.4 252.9C828.7 256 818.9 257.6 805.3 262.3C791.6 267 772.1 274.8 758.5 281C744.9 287.2 733.7 293 723.4 299.7C713.1 306.4 707.9 311.7 696.8 321.2C685.6 330.7 668.4 344.1 656.5 356.8C644.6 369.5 634.3 383.3 625.6 397.2C616.9 411.1 609.9 419.6 604.2 440C598.5 460.4 593 497.6 591.5 519.8C590 542 590.2 553.6 594.9 573C599.6 592.4 612.3 617.4 619.8 636.2C627.3 655 635.4 675.4 639.8 686C644.2 696.6 643.9 695.3 646 700L1400 705L1400 428L1315 428C1311.2 422.8 1308.2 418.5 1303.5 412.3C1298.8 406.1 1294.7 400.1 1286.5 390.7C1278.3 381.3 1265.9 367.1 1254.1 356C1242.3 344.9 1229.2 333.9 1215.5 324.3C1201.8 314.7 1183.1 304.3 1172.1 298.1C1161.1 291.9 1157.6 290.6 1149.6 286.9C1141.6 283.1 1132.5 279 1124 275.6C1115.5 272.2 1106.6 269.1 1098.4 266.4C1090.2 263.7 1082.8 261.4 1074.8 259.2C1066.8 257 1058.4 255.1 1050.2 253.1L1045 240Z" fill="#fff"/><g clip-path="url(#cd)"><path d="M1390 648L1382.9 675.7L1372.9 702.7L1360 728.6L1344.3 753.4L1326 776.8L1305.2 798.6L1282 818.8L1256.6 837.2L1229.2 853.6L1199.9 868L1169 880.1L1136.8 890L1103.4 897.5L1069 902.7L1034 905.4L998.6 905.7L963 903.5L927.6 898.9L892.4 891.8L857.9 882.5L824.2 870.8L791.6 856.9L760.3 841L730.6 823L702.7 803.2L676.7 781.7L652.9 758.6L631.4 734.1L612.4 708.4L596 681.7L582.3 654.1L571.5 625.9L563.6 597.3L558.7 568.4L556.8 539.5L557.9 510.8L562 482.5L569.1 454.8L579.1 427.9L592 401.9L607.6 377.2L625.9 353.8L646.7 331.9L669.9 311.7L695.3 293.3L722.8 276.9L752 262.6L782.9 250.4L815.1 240.5L848.6 233L882.9 227.9L917.9 225.1L953.3 224.9L988.9 227L1024.4 231.7L1059.5 238.7L1094.1 248.1L1127.7 259.7L1160.3 273.6L1191.6 289.6L1221.3 307.5L1249.3 327.3L1275.2 348.9L1299.1 371.9L1320.6 396.4L1339.6 422.1L1356 448.8L1369.6 476.4L1380.4 504.6L1388.3 533.2L1393.3 562.1L1395.2 591L1394.1 619.7ZM1361.8 641.7L1354 667.4L1343.6 692.2L1330.4 716.1L1314.7 738.8L1296.6 760.2L1276.1 780.1L1253.5 798.3L1228.9 814.9L1202.5 829.5L1174.4 842.2L1144.9 852.8L1114.1 861.2L1082.4 867.5L1049.9 871.5L1016.9 873.2L983.6 872.6L950.2 869.7L917 864.6L884.2 857.2L852.1 847.7L820.8 836.1L790.7 822.4L761.9 806.8L734.7 789.4L709.2 770.3L685.6 749.6L664.1 727.5L644.8 704.2L627.9 679.9L613.6 654.6L601.8 628.6L592.7 602.1L586.4 575.2L582.9 548.2L582.3 521.2L584.4 494.5L589.4 468.2L597.2 442.6L607.6 417.7L620.8 393.9L636.5 371.2L654.6 349.8L675.1 329.9L697.7 311.6L722.3 295.1L748.7 280.5L776.8 267.8L806.3 257.2L837.1 248.7L868.8 242.5L901.3 238.5L934.3 236.8L967.7 237.4L1001 240.2L1034.2 245.4L1067 252.7L1099.2 262.3L1130.4 273.9L1160.5 287.6L1189.3 303.2L1216.5 320.6L1242 339.7L1265.6 360.4L1287.1 382.4L1306.4 405.7L1323.3 430.1L1337.6 455.4L1349.4 481.4L1358.5 507.9L1364.8 534.8L1368.3 561.8L1368.9 588.7L1366.8 615.5ZM1339.2 609.8L1333.5 634.1L1325.2 657.7L1314.4 680.5L1301.2 702.3L1285.6 723L1267.8 742.4L1247.8 760.4L1225.9 776.8L1202.2 791.5L1176.9 804.5L1150.1 815.6L1122.1 824.7L1093 831.9L1063 836.9L1032.4 839.9L1001.4 840.7L970.2 839.4L939.1 836L908.2 830.4L877.8 822.9L848.1 813.3L819.3 801.7L791.6 788.4L765.3 773.2L740.4 756.5L717.3 738.1L696 718.4L676.7 697.5L659.6 675.4L644.8 652.5L632.3 628.7L622.3 604.3L614.9 579.5L610 554.4L607.8 529.3L608.2 504.3L611.3 479.6L617 455.3L625.3 431.7L636 408.9L649.3 387.1L664.9 366.4L682.7 347L702.6 329L724.5 312.6L748.2 297.9L773.6 284.9L800.4 273.8L828.4 264.7L857.5 257.5L887.5 252.5L918.1 249.5L949.1 248.7L980.3 250L1011.4 253.4L1042.3 259L1072.7 266.5L1102.4 276.1L1131.2 287.7L1158.9 301L1185.2 316.2L1210.1 333L1233.2 351.3L1254.5 371L1273.7 391.9L1290.9 414L1305.7 437L1318.2 460.7L1328.2 485.1L1335.6 509.9L1340.5 535L1342.7 560.1L1342.3 585.1ZM1311.4 602.8L1305.1 625L1296.5 646.6L1285.5 667.4L1272.4 687.2L1257 705.9L1239.7 723.4L1220.4 739.5L1199.3 754.2L1176.7 767.2L1152.6 778.6L1127.2 788.3L1100.7 796L1073.3 802L1045.2 805.9L1016.6 808L987.6 808L958.6 806.1L929.8 802.2L901.2 796.4L873.2 788.7L845.9 779.2L819.5 767.9L794.2 754.9L770.3 740.4L747.8 724.3L727 706.9L707.9 688.3L690.8 668.5L675.7 647.8L662.8 626.2L652.1 604L643.8 581.3L637.8 558.3L634.2 535L633.2 511.8L634.5 488.8L638.4 466L644.6 443.8L653.3 422.2L664.2 401.4L677.4 381.6L692.7 362.9L710.1 345.4L729.4 329.3L750.4 314.7L773.1 301.6L797.2 290.2L822.6 280.6L849.1 272.8L876.5 266.9L904.6 262.9L933.2 260.9L962.1 260.8L991.1 262.8L1020 266.6L1048.6 272.4L1076.6 280.1L1103.9 289.7L1130.3 300.9L1155.5 313.9L1179.5 328.5L1201.9 344.5L1222.8 361.9L1241.8 380.6L1259 400.3L1274 421.1L1287 442.6L1297.6 464.8L1306 487.5L1312 510.6L1315.5 533.8L1316.6 557L1315.2 580.1ZM1287.9 573.7L1283.5 594.4L1276.8 614.7L1268 634.3L1257 653L1244 670.9L1229.1 687.7L1212.3 703.3L1193.8 717.7L1173.8 730.6L1152.3 742.1L1129.5 752L1105.6 760.2L1080.8 766.7L1055.2 771.5L1029 774.6L1002.4 775.8L975.6 775.2L948.8 772.7L922.2 768.5L896 762.6L870.4 754.9L845.5 745.5L821.5 734.6L798.6 722.1L777 708.3L756.8 693L738.2 676.6L721.3 659.1L706.2 640.6L693 621.2L681.9 601.2L672.9 580.6L666 559.6L661.4 538.4L659 517L659 495.7L661.1 474.6L665.6 453.9L672.2 433.6L681.1 414L692 395.2L705 377.4L720 360.6L736.7 344.9L755.2 330.6L775.3 317.7L796.8 306.2L819.5 296.3L843.4 288.1L868.3 281.5L893.9 276.7L920 273.7L946.6 272.5L973.4 273.1L1000.2 275.5L1026.8 279.7L1053 285.7L1078.7 293.4L1103.6 302.7L1127.6 313.7L1150.4 326.1L1172 340L1192.2 355.2L1210.8 371.7L1227.7 389.2L1242.8 407.7L1256 427L1267.1 447.1L1276.1 467.7L1283 488.7L1287.6 509.9L1290 531.3L1290.1 552.6ZM1260.4 565.9L1255.5 584.7L1248.6 603L1239.7 620.6L1228.9 637.4L1216.2 653.4L1201.8 668.3L1185.8 682.2L1168.3 694.8L1149.3 706.1L1129.1 716.1L1107.8 724.6L1085.5 731.5L1062.4 736.9L1038.6 740.7L1014.4 742.9L990 743.4L965.4 742.2L940.8 739.4L916.5 735L892.6 729L869.4 721.4L846.8 712.4L825.2 701.9L804.6 690L785.3 676.9L767.3 662.6L750.9 647.3L736 630.9L722.9 613.8L711.5 595.9L702.1 577.4L694.6 558.5L689.1 539.2L685.7 519.8L684.3 500.3L685.1 480.9L687.9 461.8L692.8 443L699.7 424.8L708.6 407.1L719.4 390.3L732.1 374.3L746.5 359.4L762.5 345.5L780 332.9L799 321.6L819.2 311.6L840.5 303.2L862.8 296.2L885.9 290.8L909.7 287L933.8 284.9L958.3 284.4L982.9 285.5L1007.5 288.3L1031.8 292.7L1055.6 298.7L1078.9 306.3L1101.5 315.4L1123.1 325.8L1143.7 337.7L1163 350.8L1180.9 365.1L1197.4 380.5L1212.3 396.8L1225.4 413.9L1236.8 431.8L1246.2 450.3L1253.7 469.2L1259.2 488.5L1262.6 507.9L1264 527.4L1263.2 546.8ZM1236.1 539.6L1232.8 556.8L1227.6 573.6L1220.6 589.9L1211.8 605.6L1201.3 620.6L1189.1 634.7L1175.4 647.8L1160.3 660L1143.8 671L1126 680.8L1107.2 689.3L1087.4 696.4L1066.8 702.2L1045.6 706.6L1023.8 709.5L1001.6 710.9L979.3 710.8L956.9 709.2L934.6 706.2L912.6 701.6L891.1 695.7L870.1 688.4L849.9 679.7L830.6 669.8L812.3 658.6L795.2 646.4L779.4 633.1L765 618.9L752 603.9L740.7 588.1L731.1 571.7L723.2 554.9L717.1 537.7L712.8 520.2L710.5 502.6L710 485L711.4 467.5L714.8 450.3L720 433.5L727 417.2L735.8 401.5L746.3 386.6L758.4 372.5L772.1 359.3L787.3 347.2L803.8 336.2L821.5 326.4L840.4 317.9L860.1 310.7L880.7 304.9L902 300.6L923.8 297.7L946 296.3L968.3 296.4L990.7 297.9L1013 301L1035 305.5L1056.5 311.5L1077.4 318.8L1097.6 327.5L1117 337.4L1135.2 348.5L1152.4 360.8L1168.2 374L1182.6 388.2L1195.5 403.3L1206.9 419L1216.5 435.4L1224.4 452.3L1230.5 469.5L1234.7 487L1237.1 504.6L1237.6 522.2ZM1208.9 531.1L1205.2 546.4L1199.9 561.2L1192.9 575.6L1184.4 589.4L1174.3 602.5L1162.8 614.8L1149.9 626.3L1135.7 636.8L1120.4 646.2L1104 654.5L1086.7 661.7L1068.5 667.7L1049.7 672.4L1030.3 675.8L1010.6 677.9L990.5 678.7L970.3 678.2L950.2 676.3L930.2 673.1L910.5 668.5L891.3 662.8L872.6 655.8L854.7 647.6L837.7 638.4L821.6 628L806.6 616.8L792.9 604.6L780.4 591.6L769.3 577.9L759.7 563.6L751.6 548.8L745.1 533.6L740.3 518.1L737.2 502.4L735.7 486.7L736 471L737.9 455.5L741.6 440.2L747 425.3L753.9 411L762.5 397.2L772.6 384.1L784.1 371.8L797 360.3L811.1 349.8L826.4 340.4L842.8 332L860.2 324.9L878.3 318.9L897.1 314.2L916.5 310.8L936.3 308.7L956.3 307.9L976.5 308.4L996.7 310.3L1016.7 313.5L1036.3 318L1055.6 323.8L1074.2 330.8L1092.1 339L1109.1 348.2L1125.2 358.6L1140.2 369.8L1154 382L1166.5 395L1177.5 408.7L1187.2 423L1195.2 437.8L1201.7 453L1206.5 468.5L1209.7 484.2L1211.1 499.9L1210.9 515.6ZM1184 507.7L1181.6 521.3L1177.7 534.6L1172.4 547.6L1165.6 560.1L1157.5 572L1148 583.3L1137.2 593.9L1125.3 603.7L1112.3 612.6L1098.2 620.6L1083.3 627.6L1067.6 633.5L1051.2 638.4L1034.2 642.1L1016.8 644.7L999 646.1L981.1 646.4L963.2 645.5L945.2 643.4L927.5 640.1L910.2 635.8L893.3 630.3L876.9 623.7L861.2 616.2L846.4 607.7L832.5 598.3L819.5 588L807.7 577L797.1 565.3L787.7 553.1L779.7 540.3L773.1 527.1L767.9 513.6L764.2 499.9L762 486L761.3 472.2L762.1 458.4L764.5 444.8L768.4 431.4L773.7 418.5L780.5 406L788.6 394L798.1 382.7L808.9 372.1L820.8 362.4L833.8 353.4L847.9 345.5L862.8 338.5L878.5 332.5L895 327.7L911.9 323.9L929.3 321.3L947.1 319.9L965 319.6L983 320.6L1000.9 322.7L1018.6 325.9L1035.9 330.3L1052.9 335.8L1069.2 342.3L1084.9 349.9L1099.7 358.4L1113.6 367.8L1126.6 378L1138.4 389L1149 400.7L1158.4 413L1166.4 425.7L1173 438.9L1178.2 452.4L1181.9 466.2L1184.1 480L1184.8 493.9ZM1390 648L1361.8 641.7M1390 648L1366.8 615.5M1382.9 675.7L1354 667.4M1382.9 675.7L1361.8 641.7M1372.9 702.7L1343.6 692.2M1372.9 702.7L1354 667.4M1360 728.6L1330.4 716.1M1360 728.6L1343.6 692.2M1344.3 753.4L1314.7 738.8M1344.3 753.4L1330.4 716.1M1326 776.8L1296.6 760.2M1326 776.8L1314.7 738.8M1305.2 798.6L1276.1 780.1M1305.2 798.6L1296.6 760.2M1282 818.8L1253.5 798.3M1282 818.8L1276.1 780.1M1256.6 837.2L1228.9 814.9M1256.6 837.2L1253.5 798.3M1229.2 853.6L1202.5 829.5M1229.2 853.6L1228.9 814.9M1199.9 868L1174.4 842.2M1199.9 868L1202.5 829.5M1169 880.1L1144.9 852.8M1169 880.1L1174.4 842.2M1136.8 890L1114.1 861.2M1136.8 890L1144.9 852.8M1103.4 897.5L1082.4 867.5M1103.4 897.5L1114.1 861.2M1069 902.7L1049.9 871.5M1069 902.7L1082.4 867.5M1034 905.4L1016.9 873.2M1034 905.4L1049.9 871.5M998.6 905.7L983.6 872.6M998.6 905.7L1016.9 873.2M963 903.5L950.2 869.7M963 903.5L983.6 872.6M927.6 898.9L917 864.6M927.6 898.9L950.2 869.7M892.4 891.8L884.2 857.2M892.4 891.8L917 864.6M857.9 882.5L852.1 847.7M857.9 882.5L884.2 857.2M824.2 870.8L820.8 836.1M824.2 870.8L852.1 847.7M791.6 856.9L790.7 822.4M791.6 856.9L820.8 836.1M760.3 841L761.9 806.8M760.3 841L790.7 822.4M730.6 823L734.7 789.4M730.6 823L761.9 806.8M702.7 803.2L709.2 770.3M702.7 803.2L734.7 789.4M676.7 781.7L685.6 749.6M676.7 781.7L709.2 770.3M652.9 758.6L664.1 727.5M652.9 758.6L685.6 749.6M631.4 734.1L644.8 704.2M631.4 734.1L664.1 727.5M612.4 708.4L627.9 679.9M612.4 708.4L644.8 704.2M596 681.7L613.6 654.6M596 681.7L627.9 679.9M582.3 654.1L601.8 628.6M582.3 654.1L613.6 654.6M571.5 625.9L592.7 602.1M571.5 625.9L601.8 628.6M563.6 597.3L586.4 575.2M563.6 597.3L592.7 602.1M558.7 568.4L582.9 548.2M558.7 568.4L586.4 575.2M556.8 539.5L582.3 521.2M556.8 539.5L582.9 548.2M557.9 510.8L584.4 494.5M557.9 510.8L582.3 521.2M562 482.5L589.4 468.2M562 482.5L584.4 494.5M569.1 454.8L597.2 442.6M569.1 454.8L589.4 468.2M579.1 427.9L607.6 417.7M579.1 427.9L597.2 442.6M592 401.9L620.8 393.9M592 401.9L607.6 417.7M607.6 377.2L636.5 371.2M607.6 377.2L620.8 393.9M625.9 353.8L654.6 349.8M625.9 353.8L636.5 371.2M646.7 331.9L675.1 329.9M646.7 331.9L654.6 349.8M669.9 311.7L697.7 311.6M669.9 311.7L675.1 329.9M695.3 293.3L722.3 295.1M695.3 293.3L697.7 311.6M722.8 276.9L748.7 280.5M722.8 276.9L722.3 295.1M752 262.6L776.8 267.8M752 262.6L748.7 280.5M782.9 250.4L806.3 257.2M782.9 250.4L776.8 267.8M815.1 240.5L837.1 248.7M815.1 240.5L806.3 257.2M848.6 233L868.8 242.5M848.6 233L837.1 248.7M882.9 227.9L901.3 238.5M882.9 227.9L868.8 242.5M917.9 225.1L934.3 236.8M917.9 225.1L901.3 238.5M953.3 224.9L967.7 237.4M953.3 224.9L934.3 236.8M988.9 227L1001 240.2M988.9 227L967.7 237.4M1024.4 231.7L1034.2 245.4M1024.4 231.7L1001 240.2M1059.5 238.7L1067 252.7M1059.5 238.7L1034.2 245.4M1094.1 248.1L1099.2 262.3M1094.1 248.1L1067 252.7M1127.7 259.7L1130.4 273.9M1127.7 259.7L1099.2 262.3M1160.3 273.6L1160.5 287.6M1160.3 273.6L1130.4 273.9M1191.6 289.6L1189.3 303.2M1191.6 289.6L1160.5 287.6M1221.3 307.5L1216.5 320.6M1221.3 307.5L1189.3 303.2M1249.3 327.3L1242 339.7M1249.3 327.3L1216.5 320.6M1275.2 348.9L1265.6 360.4M1275.2 348.9L1242 339.7M1299.1 371.9L1287.1 382.4M1299.1 371.9L1265.6 360.4M1320.6 396.4L1306.4 405.7M1320.6 396.4L1287.1 382.4M1339.6 422.1L1323.3 430.1M1339.6 422.1L1306.4 405.7M1356 448.8L1337.6 455.4M1356 448.8L1323.3 430.1M1369.6 476.4L1349.4 481.4M1369.6 476.4L1337.6 455.4M1380.4 504.6L1358.5 507.9M1380.4 504.6L1349.4 481.4M1388.3 533.2L1364.8 534.8M1388.3 533.2L1358.5 507.9M1393.3 562.1L1368.3 561.8M1393.3 562.1L1364.8 534.8M1395.2 591L1368.9 588.7M1395.2 591L1368.3 561.8M1394.1 619.7L1366.8 615.5M1394.1 619.7L1368.9 588.7M1361.8 641.7L1339.2 609.8M1361.8 641.7L1333.5 634.1M1354 667.4L1333.5 634.1M1354 667.4L1325.2 657.7M1343.6 692.2L1325.2 657.7M1343.6 692.2L1314.4 680.5M1330.4 716.1L1314.4 680.5M1330.4 716.1L1301.2 702.3M1314.7 738.8L1301.2 702.3M1314.7 738.8L1285.6 723M1296.6 760.2L1285.6 723M1296.6 760.2L1267.8 742.4M1276.1 780.1L1267.8 742.4M1276.1 780.1L1247.8 760.4M1253.5 798.3L1247.8 760.4M1253.5 798.3L1225.9 776.8M1228.9 814.9L1225.9 776.8M1228.9 814.9L1202.2 791.5M1202.5 829.5L1202.2 791.5M1202.5 829.5L1176.9 804.5M1174.4 842.2L1176.9 804.5M1174.4 842.2L1150.1 815.6M1144.9 852.8L1150.1 815.6M1144.9 852.8L1122.1 824.7M1114.1 861.2L1122.1 824.7M1114.1 861.2L1093 831.9M1082.4 867.5L1093 831.9M1082.4 867.5L1063 836.9M1049.9 871.5L1063 836.9M1049.9 871.5L1032.4 839.9M1016.9 873.2L1032.4 839.9M1016.9 873.2L1001.4 840.7M983.6 872.6L1001.4 840.7M983.6 872.6L970.2 839.4M950.2 869.7L970.2 839.4M950.2 869.7L939.1 836M917 864.6L939.1 836M917 864.6L908.2 830.4M884.2 857.2L908.2 830.4M884.2 857.2L877.8 822.9M852.1 847.7L877.8 822.9M852.1 847.7L848.1 813.3M820.8 836.1L848.1 813.3M820.8 836.1L819.3 801.7M790.7 822.4L819.3 801.7M790.7 822.4L791.6 788.4M761.9 806.8L791.6 788.4M761.9 806.8L765.3 773.2M734.7 789.4L765.3 773.2M734.7 789.4L740.4 756.5M709.2 770.3L740.4 756.5M709.2 770.3L717.3 738.1M685.6 749.6L717.3 738.1M685.6 749.6L696 718.4M664.1 727.5L696 718.4M664.1 727.5L676.7 697.5M644.8 704.2L676.7 697.5M644.8 704.2L659.6 675.4M627.9 679.9L659.6 675.4M627.9 679.9L644.8 652.5M613.6 654.6L644.8 652.5M613.6 654.6L632.3 628.7M601.8 628.6L632.3 628.7M601.8 628.6L622.3 604.3M592.7 602.1L622.3 604.3M592.7 602.1L614.9 579.5M586.4 575.2L614.9 579.5M586.4 575.2L610 554.4M582.9 548.2L610 554.4M582.9 548.2L607.8 529.3M582.3 521.2L607.8 529.3M582.3 521.2L608.2 504.3M584.4 494.5L608.2 504.3M584.4 494.5L611.3 479.6M589.4 468.2L611.3 479.6M589.4 468.2L617 455.3M597.2 442.6L617 455.3M597.2 442.6L625.3 431.7M607.6 417.7L625.3 431.7M607.6 417.7L636 408.9M620.8 393.9L636 408.9M620.8 393.9L649.3 387.1M636.5 371.2L649.3 387.1M636.5 371.2L664.9 366.4M654.6 349.8L664.9 366.4M654.6 349.8L682.7 347M675.1 329.9L682.7 347M675.1 329.9L702.6 329M697.7 311.6L702.6 329M697.7 311.6L724.5 312.6M722.3 295.1L724.5 312.6M722.3 295.1L748.2 297.9M748.7 280.5L748.2 297.9M748.7 280.5L773.6 284.9M776.8 267.8L773.6 284.9M776.8 267.8L800.4 273.8M806.3 257.2L800.4 273.8M806.3 257.2L828.4 264.7M837.1 248.7L828.4 264.7M837.1 248.7L857.5 257.5M868.8 242.5L857.5 257.5M868.8 242.5L887.5 252.5M901.3 238.5L887.5 252.5M901.3 238.5L918.1 249.5M934.3 236.8L918.1 249.5M934.3 236.8L949.1 248.7M967.7 237.4L949.1 248.7M967.7 237.4L980.3 250M1001 240.2L980.3 250M1001 240.2L1011.4 253.4M1034.2 245.4L1011.4 253.4M1034.2 245.4L1042.3 259M1067 252.7L1042.3 259M1067 252.7L1072.7 266.5M1099.2 262.3L1072.7 266.5M1099.2 262.3L1102.4 276.1M1130.4 273.9L1102.4 276.1M1130.4 273.9L1131.2 287.7M1160.5 287.6L1131.2 287.7M1160.5 287.6L1158.9 301M1189.3 303.2L1158.9 301M1189.3 303.2L1185.2 316.2M1216.5 320.6L1185.2 316.2M1216.5 320.6L1210.1 333M1242 339.7L1210.1 333M1242 339.7L1233.2 351.3M1265.6 360.4L1233.2 351.3M1265.6 360.4L1254.5 371M1287.1 382.4L1254.5 371M1287.1 382.4L1273.7 391.9M1306.4 405.7L1273.7 391.9M1306.4 405.7L1290.9 414M1323.3 430.1L1290.9 414M1323.3 430.1L1305.7 437M1337.6 455.4L1305.7 437M1337.6 455.4L1318.2 460.7M1349.4 481.4L1318.2 460.7M1349.4 481.4L1328.2 485.1M1358.5 507.9L1328.2 485.1M1358.5 507.9L1335.6 509.9M1364.8 534.8L1335.6 509.9M1364.8 534.8L1340.5 535M1368.3 561.8L1340.5 535M1368.3 561.8L1342.7 560.1M1368.9 588.7L1342.7 560.1M1368.9 588.7L1342.3 585.1M1366.8 615.5L1342.3 585.1M1366.8 615.5L1339.2 609.8M1339.2 609.8L1311.4 602.8M1339.2 609.8L1315.2 580.1M1333.5 634.1L1305.1 625M1333.5 634.1L1311.4 602.8M1325.2 657.7L1296.5 646.6M1325.2 657.7L1305.1 625M1314.4 680.5L1285.5 667.4M1314.4 680.5L1296.5 646.6M1301.2 702.3L1272.4 687.2M1301.2 702.3L1285.5 667.4M1285.6 723L1257 705.9M1285.6 723L1272.4 687.2M1267.8 742.4L1239.7 723.4M1267.8 742.4L1257 705.9M1247.8 760.4L1220.4 739.5M1247.8 760.4L1239.7 723.4M1225.9 776.8L1199.3 754.2M1225.9 776.8L1220.4 739.5M1202.2 791.5L1176.7 767.2M1202.2 791.5L1199.3 754.2M1176.9 804.5L1152.6 778.6M1176.9 804.5L1176.7 767.2M1150.1 815.6L1127.2 788.3M1150.1 815.6L1152.6 778.6M1122.1 824.7L1100.7 796M1122.1 824.7L1127.2 788.3M1093 831.9L1073.3 802M1093 831.9L1100.7 796M1063 836.9L1045.2 805.9M1063 836.9L1073.3 802M1032.4 839.9L1016.6 808M1032.4 839.9L1045.2 805.9M1001.4 840.7L987.6 808M1001.4 840.7L1016.6 808M970.2 839.4L958.6 806.1M970.2 839.4L987.6 808M939.1 836L929.8 802.2M939.1 836L958.6 806.1M908.2 830.4L901.2 796.4M908.2 830.4L929.8 802.2M877.8 822.9L873.2 788.7M877.8 822.9L901.2 796.4M848.1 813.3L845.9 779.2M848.1 813.3L873.2 788.7M819.3 801.7L819.5 767.9M819.3 801.7L845.9 779.2M791.6 788.4L794.2 754.9M791.6 788.4L819.5 767.9M765.3 773.2L770.3 740.4M765.3 773.2L794.2 754.9M740.4 756.5L747.8 724.3M740.4 756.5L770.3 740.4M717.3 738.1L727 706.9M717.3 738.1L747.8 724.3M696 718.4L707.9 688.3M696 718.4L727 706.9M676.7 697.5L690.8 668.5M676.7 697.5L707.9 688.3M659.6 675.4L675.7 647.8M659.6 675.4L690.8 668.5M644.8 652.5L662.8 626.2M644.8 652.5L675.7 647.8M632.3 628.7L652.1 604M632.3 628.7L662.8 626.2M622.3 604.3L643.8 581.3M622.3 604.3L652.1 604M614.9 579.5L637.8 558.3M614.9 579.5L643.8 581.3M610 554.4L634.2 535M610 554.4L637.8 558.3M607.8 529.3L633.2 511.8M607.8 529.3L634.2 535M608.2 504.3L634.5 488.8M608.2 504.3L633.2 511.8M611.3 479.6L638.4 466M611.3 479.6L634.5 488.8M617 455.3L644.6 443.8M617 455.3L638.4 466M625.3 431.7L653.3 422.2M625.3 431.7L644.6 443.8M636 408.9L664.2 401.4M636 408.9L653.3 422.2M649.3 387.1L677.4 381.6M649.3 387.1L664.2 401.4M664.9 366.4L692.7 362.9M664.9 366.4L677.4 381.6M682.7 347L710.1 345.4M682.7 347L692.7 362.9M702.6 329L729.4 329.3M702.6 329L710.1 345.4M724.5 312.6L750.4 314.7M724.5 312.6L729.4 329.3M748.2 297.9L773.1 301.6M748.2 297.9L750.4 314.7M773.6 284.9L797.2 290.2M773.6 284.9L773.1 301.6M800.4 273.8L822.6 280.6M800.4 273.8L797.2 290.2M828.4 264.7L849.1 272.8M828.4 264.7L822.6 280.6M857.5 257.5L876.5 266.9M857.5 257.5L849.1 272.8M887.5 252.5L904.6 262.9M887.5 252.5L876.5 266.9M918.1 249.5L933.2 260.9M918.1 249.5L904.6 262.9M949.1 248.7L962.1 260.8M949.1 248.7L933.2 260.9M980.3 250L991.1 262.8M980.3 250L962.1 260.8M1011.4 253.4L1020 266.6M1011.4 253.4L991.1 262.8M1042.3 259L1048.6 272.4M1042.3 259L1020 266.6M1072.7 266.5L1076.6 280.1M1072.7 266.5L1048.6 272.4M1102.4 276.1L1103.9 289.7M1102.4 276.1L1076.6 280.1M1131.2 287.7L1130.3 300.9M1131.2 287.7L1103.9 289.7M1158.9 301L1155.5 313.9M1158.9 301L1130.3 300.9M1185.2 316.2L1179.5 328.5M1185.2 316.2L1155.5 313.9M1210.1 333L1201.9 344.5M1210.1 333L1179.5 328.5M1233.2 351.3L1222.8 361.9M1233.2 351.3L1201.9 344.5M1254.5 371L1241.8 380.6M1254.5 371L1222.8 361.9M1273.7 391.9L1259 400.3M1273.7 391.9L1241.8 380.6M1290.9 414L1274 421.1M1290.9 414L1259 400.3M1305.7 437L1287 442.6M1305.7 437L1274 421.1M1318.2 460.7L1297.6 464.8M1318.2 460.7L1287 442.6M1328.2 485.1L1306 487.5M1328.2 485.1L1297.6 464.8M1335.6 509.9L1312 510.6M1335.6 509.9L1306 487.5M1340.5 535L1315.5 533.8M1340.5 535L1312 510.6M1342.7 560.1L1316.6 557M1342.7 560.1L1315.5 533.8M1342.3 585.1L1315.2 580.1M1342.3 585.1L1316.6 557M1311.4 602.8L1287.9 573.7M1311.4 602.8L1283.5 594.4M1305.1 625L1283.5 594.4M1305.1 625L1276.8 614.7M1296.5 646.6L1276.8 614.7M1296.5 646.6L1268 634.3M1285.5 667.4L1268 634.3M1285.5 667.4L1257 653M1272.4 687.2L1257 653M1272.4 687.2L1244 670.9M1257 705.9L1244 670.9M1257 705.9L1229.1 687.7M1239.7 723.4L1229.1 687.7M1239.7 723.4L1212.3 703.3M1220.4 739.5L1212.3 703.3M1220.4 739.5L1193.8 717.7M1199.3 754.2L1193.8 717.7M1199.3 754.2L1173.8 730.6M1176.7 767.2L1173.8 730.6M1176.7 767.2L1152.3 742.1M1152.6 778.6L1152.3 742.1M1152.6 778.6L1129.5 752M1127.2 788.3L1129.5 752M1127.2 788.3L1105.6 760.2M1100.7 796L1105.6 760.2M1100.7 796L1080.8 766.7M1073.3 802L1080.8 766.7M1073.3 802L1055.2 771.5M1045.2 805.9L1055.2 771.5M1045.2 805.9L1029 774.6M1016.6 808L1029 774.6M1016.6 808L1002.4 775.8M987.6 808L1002.4 775.8M987.6 808L975.6 775.2M958.6 806.1L975.6 775.2M958.6 806.1L948.8 772.7M929.8 802.2L948.8 772.7M929.8 802.2L922.2 768.5M901.2 796.4L922.2 768.5M901.2 796.4L896 762.6M873.2 788.7L896 762.6M873.2 788.7L870.4 754.9M845.9 779.2L870.4 754.9M845.9 779.2L845.5 745.5M819.5 767.9L845.5 745.5M819.5 767.9L821.5 734.6M794.2 754.9L821.5 734.6M794.2 754.9L798.6 722.1M770.3 740.4L798.6 722.1M770.3 740.4L777 708.3M747.8 724.3L777 708.3M747.8 724.3L756.8 693M727 706.9L756.8 693M727 706.9L738.2 676.6M707.9 688.3L738.2 676.6M707.9 688.3L721.3 659.1M690.8 668.5L721.3 659.1M690.8 668.5L706.2 640.6M675.7 647.8L706.2 640.6M675.7 647.8L693 621.2M662.8 626.2L693 621.2M662.8 626.2L681.9 601.2M652.1 604L681.9 601.2M652.1 604L672.9 580.6M643.8 581.3L672.9 580.6M643.8 581.3L666 559.6M637.8 558.3L666 559.6M637.8 558.3L661.4 538.4M634.2 535L661.4 538.4M634.2 535L659 517M633.2 511.8L659 517M633.2 511.8L659 495.7M634.5 488.8L659 495.7M634.5 488.8L661.1 474.6M638.4 466L661.1 474.6M638.4 466L665.6 453.9M644.6 443.8L665.6 453.9M644.6 443.8L672.2 433.6M653.3 422.2L672.2 433.6M653.3 422.2L681.1 414M664.2 401.4L681.1 414M664.2 401.4L692 395.2M677.4 381.6L692 395.2M677.4 381.6L705 377.4M692.7 362.9L705 377.4M692.7 362.9L720 360.6M710.1 345.4L720 360.6M710.1 345.4L736.7 344.9M729.4 329.3L736.7 344.9M729.4 329.3L755.2 330.6M750.4 314.7L755.2 330.6M750.4 314.7L775.3 317.7M773.1 301.6L775.3 317.7M773.1 301.6L796.8 306.2M797.2 290.2L796.8 306.2M797.2 290.2L819.5 296.3M822.6 280.6L819.5 296.3M822.6 280.6L843.4 288.1M849.1 272.8L843.4 288.1M849.1 272.8L868.3 281.5M876.5 266.9L868.3 281.5M876.5 266.9L893.9 276.7M904.6 262.9L893.9 276.7M904.6 262.9L920 273.7M933.2 260.9L920 273.7M933.2 260.9L946.6 272.5M962.1 260.8L946.6 272.5M962.1 260.8L973.4 273.1M991.1 262.8L973.4 273.1M991.1 262.8L1000.2 275.5M1020 266.6L1000.2 275.5M1020 266.6L1026.8 279.7M1048.6 272.4L1026.8 279.7M1048.6 272.4L1053 285.7M1076.6 280.1L1053 285.7M1076.6 280.1L1078.7 293.4M1103.9 289.7L1078.7 293.4M1103.9 289.7L1103.6 302.7M1130.3 300.9L1103.6 302.7M1130.3 300.9L1127.6 313.7M1155.5 313.9L1127.6 313.7M1155.5 313.9L1150.4 326.1M1179.5 328.5L1150.4 326.1M1179.5 328.5L1172 340M1201.9 344.5L1172 340M1201.9 344.5L1192.2 355.2M1222.8 361.9L1192.2 355.2M1222.8 361.9L1210.8 371.7M1241.8 380.6L1210.8 371.7M1241.8 380.6L1227.7 389.2M1259 400.3L1227.7 389.2M1259 400.3L1242.8 407.7M1274 421.1L1242.8 407.7M1274 421.1L1256 427M1287 442.6L1256 427M1287 442.6L1267.1 447.1M1297.6 464.8L1267.1 447.1M1297.6 464.8L1276.1 467.7M1306 487.5L1276.1 467.7M1306 487.5L1283 488.7M1312 510.6L1283 488.7M1312 510.6L1287.6 509.9M1315.5 533.8L1287.6 509.9M1315.5 533.8L1290 531.3M1316.6 557L1290 531.3M1316.6 557L1290.1 552.6M1315.2 580.1L1290.1 552.6M1315.2 580.1L1287.9 573.7M1287.9 573.7L1260.4 565.9M1287.9 573.7L1263.2 546.8M1283.5 594.4L1255.5 584.7M1283.5 594.4L1260.4 565.9M1276.8 614.7L1248.6 603M1276.8 614.7L1255.5 584.7M1268 634.3L1239.7 620.6M1268 634.3L1248.6 603M1257 653L1228.9 637.4M1257 653L1239.7 620.6M1244 670.9L1216.2 653.4M1244 670.9L1228.9 637.4M1229.1 687.7L1201.8 668.3M1229.1 687.7L1216.2 653.4M1212.3 703.3L1185.8 682.2M1212.3 703.3L1201.8 668.3M1193.8 717.7L1168.3 694.8M1193.8 717.7L1185.8 682.2M1173.8 730.6L1149.3 706.1M1173.8 730.6L1168.3 694.8M1152.3 742.1L1129.1 716.1M1152.3 742.1L1149.3 706.1M1129.5 752L1107.8 724.6M1129.5 752L1129.1 716.1M1105.6 760.2L1085.5 731.5M1105.6 760.2L1107.8 724.6M1080.8 766.7L1062.4 736.9M1080.8 766.7L1085.5 731.5M1055.2 771.5L1038.6 740.7M1055.2 771.5L1062.4 736.9M1029 774.6L1014.4 742.9M1029 774.6L1038.6 740.7M1002.4 775.8L990 743.4M1002.4 775.8L1014.4 742.9M975.6 775.2L965.4 742.2M975.6 775.2L990 743.4M948.8 772.7L940.8 739.4M948.8 772.7L965.4 742.2M922.2 768.5L916.5 735M922.2 768.5L940.8 739.4M896 762.6L892.6 729M896 762.6L916.5 735M870.4 754.9L869.4 721.4M870.4 754.9L892.6 729M845.5 745.5L846.8 712.4M845.5 745.5L869.4 721.4M821.5 734.6L825.2 701.9M821.5 734.6L846.8 712.4M798.6 722.1L804.6 690M798.6 722.1L825.2 701.9M777 708.3L785.3 676.9M777 708.3L804.6 690M756.8 693L767.3 662.6M756.8 693L785.3 676.9M738.2 676.6L750.9 647.3M738.2 676.6L767.3 662.6M721.3 659.1L736 630.9M721.3 659.1L750.9 647.3M706.2 640.6L722.9 613.8M706.2 640.6L736 630.9M693 621.2L711.5 595.9M693 621.2L722.9 613.8M681.9 601.2L702.1 577.4M681.9 601.2L711.5 595.9M672.9 580.6L694.6 558.5M672.9 580.6L702.1 577.4M666 559.6L689.1 539.2M666 559.6L694.6 558.5M661.4 538.4L685.7 519.8M661.4 538.4L689.1 539.2M659 517L684.3 500.3M659 517L685.7 519.8M659 495.7L685.1 480.9M659 495.7L684.3 500.3M661.1 474.6L687.9 461.8M661.1 474.6L685.1 480.9M665.6 453.9L692.8 443M665.6 453.9L687.9 461.8M672.2 433.6L699.7 424.8M672.2 433.6L692.8 443M681.1 414L708.6 407.1M681.1 414L699.7 424.8M692 395.2L719.4 390.3M692 395.2L708.6 407.1M705 377.4L732.1 374.3M705 377.4L719.4 390.3M720 360.6L746.5 359.4M720 360.6L732.1 374.3M736.7 344.9L762.5 345.5M736.7 344.9L746.5 359.4M755.2 330.6L780 332.9M755.2 330.6L762.5 345.5M775.3 317.7L799 321.6M775.3 317.7L780 332.9M796.8 306.2L819.2 311.6M796.8 306.2L799 321.6M819.5 296.3L840.5 303.2M819.5 296.3L819.2 311.6M843.4 288.1L862.8 296.2M843.4 288.1L840.5 303.2M868.3 281.5L885.9 290.8M868.3 281.5L862.8 296.2M893.9 276.7L909.7 287M893.9 276.7L885.9 290.8M920 273.7L933.8 284.9M920 273.7L909.7 287M946.6 272.5L958.3 284.4M946.6 272.5L933.8 284.9M973.4 273.1L982.9 285.5M973.4 273.1L958.3 284.4M1000.2 275.5L1007.5 288.3M1000.2 275.5L982.9 285.5M1026.8 279.7L1031.8 292.7M1026.8 279.7L1007.5 288.3M1053 285.7L1055.6 298.7M1053 285.7L1031.8 292.7M1078.7 293.4L1078.9 306.3M1078.7 293.4L1055.6 298.7M1103.6 302.7L1101.5 315.4M1103.6 302.7L1078.9 306.3M1127.6 313.7L1123.1 325.8M1127.6 313.7L1101.5 315.4M1150.4 326.1L1143.7 337.7M1150.4 326.1L1123.1 325.8M1172 340L1163 350.8M1172 340L1143.7 337.7M1192.2 355.2L1180.9 365.1M1192.2 355.2L1163 350.8M1210.8 371.7L1197.4 380.5M1210.8 371.7L1180.9 365.1M1227.7 389.2L1212.3 396.8M1227.7 389.2L1197.4 380.5M1242.8 407.7L1225.4 413.9M1242.8 407.7L1212.3 396.8M1256 427L1236.8 431.8M1256 427L1225.4 413.9M1267.1 447.1L1246.2 450.3M1267.1 447.1L1236.8 431.8M1276.1 467.7L1253.7 469.2M1276.1 467.7L1246.2 450.3M1283 488.7L1259.2 488.5M1283 488.7L1253.7 469.2M1287.6 509.9L1262.6 507.9M1287.6 509.9L1259.2 488.5M1290 531.3L1264 527.4M1290 531.3L1262.6 507.9M1290.1 552.6L1263.2 546.8M1290.1 552.6L1264 527.4M1260.4 565.9L1236.1 539.6M1260.4 565.9L1232.8 556.8M1255.5 584.7L1232.8 556.8M1255.5 584.7L1227.6 573.6M1248.6 603L1227.6 573.6M1248.6 603L1220.6 589.9M1239.7 620.6L1220.6 589.9M1239.7 620.6L1211.8 605.6M1228.9 637.4L1211.8 605.6M1228.9 637.4L1201.3 620.6M1216.2 653.4L1201.3 620.6M1216.2 653.4L1189.1 634.7M1201.8 668.3L1189.1 634.7M1201.8 668.3L1175.4 647.8M1185.8 682.2L1175.4 647.8M1185.8 682.2L1160.3 660M1168.3 694.8L1160.3 660M1168.3 694.8L1143.8 671M1149.3 706.1L1143.8 671M1149.3 706.1L1126 680.8M1129.1 716.1L1126 680.8M1129.1 716.1L1107.2 689.3M1107.8 724.6L1107.2 689.3M1107.8 724.6L1087.4 696.4M1085.5 731.5L1087.4 696.4M1085.5 731.5L1066.8 702.2M1062.4 736.9L1066.8 702.2M1062.4 736.9L1045.6 706.6M1038.6 740.7L1045.6 706.6M1038.6 740.7L1023.8 709.5M1014.4 742.9L1023.8 709.5M1014.4 742.9L1001.6 710.9M990 743.4L1001.6 710.9M990 743.4L979.3 710.8M965.4 742.2L979.3 710.8M965.4 742.2L956.9 709.2M940.8 739.4L956.9 709.2M940.8 739.4L934.6 706.2M916.5 735L934.6 706.2M916.5 735L912.6 701.6M892.6 729L912.6 701.6M892.6 729L891.1 695.7M869.4 721.4L891.1 695.7M869.4 721.4L870.1 688.4M846.8 712.4L870.1 688.4M846.8 712.4L849.9 679.7M825.2 701.9L849.9 679.7M825.2 701.9L830.6 669.8M804.6 690L830.6 669.8M804.6 690L812.3 658.6M785.3 676.9L812.3 658.6M785.3 676.9L795.2 646.4M767.3 662.6L795.2 646.4M767.3 662.6L779.4 633.1M750.9 647.3L779.4 633.1M750.9 647.3L765 618.9M736 630.9L765 618.9M736 630.9L752 603.9M722.9 613.8L752 603.9M722.9 613.8L740.7 588.1M711.5 595.9L740.7 588.1M711.5 595.9L731.1 571.7M702.1 577.4L731.1 571.7M702.1 577.4L723.2 554.9M694.6 558.5L723.2 554.9M694.6 558.5L717.1 537.7M689.1 539.2L717.1 537.7M689.1 539.2L712.8 520.2M685.7 519.8L712.8 520.2M685.7 519.8L710.5 502.6M684.3 500.3L710.5 502.6M684.3 500.3L710 485M685.1 480.9L710 485M685.1 480.9L711.4 467.5M687.9 461.8L711.4 467.5M687.9 461.8L714.8 450.3M692.8 443L714.8 450.3M692.8 443L720 433.5M699.7 424.8L720 433.5M699.7 424.8L727 417.2M708.6 407.1L727 417.2M708.6 407.1L735.8 401.5M719.4 390.3L735.8 401.5M719.4 390.3L746.3 386.6M732.1 374.3L746.3 386.6M732.1 374.3L758.4 372.5M746.5 359.4L758.4 372.5M746.5 359.4L772.1 359.3M762.5 345.5L772.1 359.3M762.5 345.5L787.3 347.2M780 332.9L787.3 347.2M780 332.9L803.8 336.2M799 321.6L803.8 336.2M799 321.6L821.5 326.4M819.2 311.6L821.5 326.4M819.2 311.6L840.4 317.9M840.5 303.2L840.4 317.9M840.5 303.2L860.1 310.7M862.8 296.2L860.1 310.7M862.8 296.2L880.7 304.9M885.9 290.8L880.7 304.9M885.9 290.8L902 300.6M909.7 287L902 300.6M909.7 287L923.8 297.7M933.8 284.9L923.8 297.7M933.8 284.9L946 296.3M958.3 284.4L946 296.3M958.3 284.4L968.3 296.4M982.9 285.5L968.3 296.4M982.9 285.5L990.7 297.9M1007.5 288.3L990.7 297.9M1007.5 288.3L1013 301M1031.8 292.7L1013 301M1031.8 292.7L1035 305.5M1055.6 298.7L1035 305.5M1055.6 298.7L1056.5 311.5M1078.9 306.3L1056.5 311.5M1078.9 306.3L1077.4 318.8M1101.5 315.4L1077.4 318.8M1101.5 315.4L1097.6 327.5M1123.1 325.8L1097.6 327.5M1123.1 325.8L1117 337.4M1143.7 337.7L1117 337.4M1143.7 337.7L1135.2 348.5M1163 350.8L1135.2 348.5M1163 350.8L1152.4 360.8M1180.9 365.1L1152.4 360.8M1180.9 365.1L1168.2 374M1197.4 380.5L1168.2 374M1197.4 380.5L1182.6 388.2M1212.3 396.8L1182.6 388.2M1212.3 396.8L1195.5 403.3M1225.4 413.9L1195.5 403.3M1225.4 413.9L1206.9 419M1236.8 431.8L1206.9 419M1236.8 431.8L1216.5 435.4M1246.2 450.3L1216.5 435.4M1246.2 450.3L1224.4 452.3M1253.7 469.2L1224.4 452.3M1253.7 469.2L1230.5 469.5M1259.2 488.5L1230.5 469.5M1259.2 488.5L1234.7 487M1262.6 507.9L1234.7 487M1262.6 507.9L1237.1 504.6M1264 527.4L1237.1 504.6M1264 527.4L1237.6 522.2M1263.2 546.8L1237.6 522.2M1263.2 546.8L1236.1 539.6M1236.1 539.6L1208.9 531.1M1236.1 539.6L1210.9 515.6M1232.8 556.8L1205.2 546.4M1232.8 556.8L1208.9 531.1M1227.6 573.6L1199.9 561.2M1227.6 573.6L1205.2 546.4M1220.6 589.9L1192.9 575.6M1220.6 589.9L1199.9 561.2M1211.8 605.6L1184.4 589.4M1211.8 605.6L1192.9 575.6M1201.3 620.6L1174.3 602.5M1201.3 620.6L1184.4 589.4M1189.1 634.7L1162.8 614.8M1189.1 634.7L1174.3 602.5M1175.4 647.8L1149.9 626.3M1175.4 647.8L1162.8 614.8M1160.3 660L1135.7 636.8M1160.3 660L1149.9 626.3M1143.8 671L1120.4 646.2M1143.8 671L1135.7 636.8M1126 680.8L1104 654.5M1126 680.8L1120.4 646.2M1107.2 689.3L1086.7 661.7M1107.2 689.3L1104 654.5M1087.4 696.4L1068.5 667.7M1087.4 696.4L1086.7 661.7M1066.8 702.2L1049.7 672.4M1066.8 702.2L1068.5 667.7M1045.6 706.6L1030.3 675.8M1045.6 706.6L1049.7 672.4M1023.8 709.5L1010.6 677.9M1023.8 709.5L1030.3 675.8M1001.6 710.9L990.5 678.7M1001.6 710.9L1010.6 677.9M979.3 710.8L970.3 678.2M979.3 710.8L990.5 678.7M956.9 709.2L950.2 676.3M956.9 709.2L970.3 678.2M934.6 706.2L930.2 673.1M934.6 706.2L950.2 676.3M912.6 701.6L910.5 668.5M912.6 701.6L930.2 673.1M891.1 695.7L891.3 662.8M891.1 695.7L910.5 668.5M870.1 688.4L872.6 655.8M870.1 688.4L891.3 662.8M849.9 679.7L854.7 647.6M849.9 679.7L872.6 655.8M830.6 669.8L837.7 638.4M830.6 669.8L854.7 647.6M812.3 658.6L821.6 628M812.3 658.6L837.7 638.4M795.2 646.4L806.6 616.8M795.2 646.4L821.6 628M779.4 633.1L792.9 604.6M779.4 633.1L806.6 616.8M765 618.9L780.4 591.6M765 618.9L792.9 604.6M752 603.9L769.3 577.9M752 603.9L780.4 591.6M740.7 588.1L759.7 563.6M740.7 588.1L769.3 577.9M731.1 571.7L751.6 548.8M731.1 571.7L759.7 563.6M723.2 554.9L745.1 533.6M723.2 554.9L751.6 548.8M717.1 537.7L740.3 518.1M717.1 537.7L745.1 533.6M712.8 520.2L737.2 502.4M712.8 520.2L740.3 518.1M710.5 502.6L735.7 486.7M710.5 502.6L737.2 502.4M710 485L736 471M710 485L735.7 486.7M711.4 467.5L737.9 455.5M711.4 467.5L736 471M714.8 450.3L741.6 440.2M714.8 450.3L737.9 455.5M720 433.5L747 425.3M720 433.5L741.6 440.2M727 417.2L753.9 411M727 417.2L747 425.3M735.8 401.5L762.5 397.2M735.8 401.5L753.9 411M746.3 386.6L772.6 384.1M746.3 386.6L762.5 397.2M758.4 372.5L784.1 371.8M758.4 372.5L772.6 384.1M772.1 359.3L797 360.3M772.1 359.3L784.1 371.8M787.3 347.2L811.1 349.8M787.3 347.2L797 360.3M803.8 336.2L826.4 340.4M803.8 336.2L811.1 349.8M821.5 326.4L842.8 332M821.5 326.4L826.4 340.4M840.4 317.9L860.2 324.9M840.4 317.9L842.8 332M860.1 310.7L878.3 318.9M860.1 310.7L860.2 324.9M880.7 304.9L897.1 314.2M880.7 304.9L878.3 318.9M902 300.6L916.5 310.8M902 300.6L897.1 314.2M923.8 297.7L936.3 308.7M923.8 297.7L916.5 310.8M946 296.3L956.3 307.9M946 296.3L936.3 308.7M968.3 296.4L976.5 308.4M968.3 296.4L956.3 307.9M990.7 297.9L996.7 310.3M990.7 297.9L976.5 308.4M1013 301L1016.7 313.5M1013 301L996.7 310.3M1035 305.5L1036.3 318M1035 305.5L1016.7 313.5M1056.5 311.5L1055.6 323.8M1056.5 311.5L1036.3 318M1077.4 318.8L1074.2 330.8M1077.4 318.8L1055.6 323.8M1097.6 327.5L1092.1 339M1097.6 327.5L1074.2 330.8M1117 337.4L1109.1 348.2M1117 337.4L1092.1 339M1135.2 348.5L1125.2 358.6M1135.2 348.5L1109.1 348.2M1152.4 360.8L1140.2 369.8M1152.4 360.8L1125.2 358.6M1168.2 374L1154 382M1168.2 374L1140.2 369.8M1182.6 388.2L1166.5 395M1182.6 388.2L1154 382M1195.5 403.3L1177.5 408.7M1195.5 403.3L1166.5 395M1206.9 419L1187.2 423M1206.9 419L1177.5 408.7M1216.5 435.4L1195.2 437.8M1216.5 435.4L1187.2 423M1224.4 452.3L1201.7 453M1224.4 452.3L1195.2 437.8M1230.5 469.5L1206.5 468.5M1230.5 469.5L1201.7 453M1234.7 487L1209.7 484.2M1234.7 487L1206.5 468.5M1237.1 504.6L1211.1 499.9M1237.1 504.6L1209.7 484.2M1237.6 522.2L1210.9 515.6M1237.6 522.2L1211.1 499.9M1208.9 531.1L1184 507.7M1208.9 531.1L1181.6 521.3M1205.2 546.4L1181.6 521.3M1205.2 546.4L1177.7 534.6M1199.9 561.2L1177.7 534.6M1199.9 561.2L1172.4 547.6M1192.9 575.6L1172.4 547.6M1192.9 575.6L1165.6 560.1M1184.4 589.4L1165.6 560.1M1184.4 589.4L1157.5 572M1174.3 602.5L1157.5 572M1174.3 602.5L1148 583.3M1162.8 614.8L1148 583.3M1162.8 614.8L1137.2 593.9M1149.9 626.3L1137.2 593.9M1149.9 626.3L1125.3 603.7M1135.7 636.8L1125.3 603.7M1135.7 636.8L1112.3 612.6M1120.4 646.2L1112.3 612.6M1120.4 646.2L1098.2 620.6M1104 654.5L1098.2 620.6M1104 654.5L1083.3 627.6M1086.7 661.7L1083.3 627.6M1086.7 661.7L1067.6 633.5M1068.5 667.7L1067.6 633.5M1068.5 667.7L1051.2 638.4M1049.7 672.4L1051.2 638.4M1049.7 672.4L1034.2 642.1M1030.3 675.8L1034.2 642.1M1030.3 675.8L1016.8 644.7M1010.6 677.9L1016.8 644.7M1010.6 677.9L999 646.1M990.5 678.7L999 646.1M990.5 678.7L981.1 646.4M970.3 678.2L981.1 646.4M970.3 678.2L963.2 645.5M950.2 676.3L963.2 645.5M950.2 676.3L945.2 643.4M930.2 673.1L945.2 643.4M930.2 673.1L927.5 640.1M910.5 668.5L927.5 640.1M910.5 668.5L910.2 635.8M891.3 662.8L910.2 635.8M891.3 662.8L893.3 630.3M872.6 655.8L893.3 630.3M872.6 655.8L876.9 623.7M854.7 647.6L876.9 623.7M854.7 647.6L861.2 616.2M837.7 638.4L861.2 616.2M837.7 638.4L846.4 607.7M821.6 628L846.4 607.7M821.6 628L832.5 598.3M806.6 616.8L832.5 598.3M806.6 616.8L819.5 588M792.9 604.6L819.5 588M792.9 604.6L807.7 577M780.4 591.6L807.7 577M780.4 591.6L797.1 565.3M769.3 577.9L797.1 565.3M769.3 577.9L787.7 553.1M759.7 563.6L787.7 553.1M759.7 563.6L779.7 540.3M751.6 548.8L779.7 540.3M751.6 548.8L773.1 527.1M745.1 533.6L773.1 527.1M745.1 533.6L767.9 513.6M740.3 518.1L767.9 513.6M740.3 518.1L764.2 499.9M737.2 502.4L764.2 499.9M737.2 502.4L762 486M735.7 486.7L762 486M735.7 486.7L761.3 472.2M736 471L761.3 472.2M736 471L762.1 458.4M737.9 455.5L762.1 458.4M737.9 455.5L764.5 444.8M741.6 440.2L764.5 444.8M741.6 440.2L768.4 431.4M747 425.3L768.4 431.4M747 425.3L773.7 418.5M753.9 411L773.7 418.5M753.9 411L780.5 406M762.5 397.2L780.5 406M762.5 397.2L788.6 394M772.6 384.1L788.6 394M772.6 384.1L798.1 382.7M784.1 371.8L798.1 382.7M784.1 371.8L808.9 372.1M797 360.3L808.9 372.1M797 360.3L820.8 362.4M811.1 349.8L820.8 362.4M811.1 349.8L833.8 353.4M826.4 340.4L833.8 353.4M826.4 340.4L847.9 345.5M842.8 332L847.9 345.5M842.8 332L862.8 338.5M860.2 324.9L862.8 338.5M860.2 324.9L878.5 332.5M878.3 318.9L878.5 332.5M878.3 318.9L895 327.7M897.1 314.2L895 327.7M897.1 314.2L911.9 323.9M916.5 310.8L911.9 323.9M916.5 310.8L929.3 321.3M936.3 308.7L929.3 321.3M936.3 308.7L947.1 319.9M956.3 307.9L947.1 319.9M956.3 307.9L965 319.6M976.5 308.4L965 319.6M976.5 308.4L983 320.6M996.7 310.3L983 320.6M996.7 310.3L1000.9 322.7M1016.7 313.5L1000.9 322.7M1016.7 313.5L1018.6 325.9M1036.3 318L1018.6 325.9M1036.3 318L1035.9 330.3M1055.6 323.8L1035.9 330.3M1055.6 323.8L1052.9 335.8M1074.2 330.8L1052.9 335.8M1074.2 330.8L1069.2 342.3M1092.1 339L1069.2 342.3M1092.1 339L1084.9 349.9M1109.1 348.2L1084.9 349.9M1109.1 348.2L1099.7 358.4M1125.2 358.6L1099.7 358.4M1125.2 358.6L1113.6 367.8M1140.2 369.8L1113.6 367.8M1140.2 369.8L1126.6 378M1154 382L1126.6 378M1154 382L1138.4 389M1166.5 395L1138.4 389M1166.5 395L1149 400.7M1177.5 408.7L1149 400.7M1177.5 408.7L1158.4 413M1187.2 423L1158.4 413M1187.2 423L1166.4 425.7M1195.2 437.8L1166.4 425.7M1195.2 437.8L1173 438.9M1201.7 453L1173 438.9M1201.7 453L1178.2 452.4M1206.5 468.5L1178.2 452.4M1206.5 468.5L1181.9 466.2M1209.7 484.2L1181.9 466.2M1209.7 484.2L1184.1 480M1211.1 499.9L1184.1 480M1211.1 499.9L1184.8 493.9M1210.9 515.6L1184.8 493.9M1210.9 515.6L1184 507.7" stroke="#000" stroke-width="1.1" fill="none"/></g><path d="M1190 472C1184.6 462.2 1179.3 452.9 1173.8 442.6C1168.2 432.4 1163.8 420.8 1156.7 410.5C1149.6 400.2 1142.4 390.6 1131 380.6C1119.6 370.6 1102.5 358.5 1088.3 350.6C1074 342.8 1059.8 337.9 1045.5 333.5C1031.2 329.1 1016.2 326.7 1002.8 324.5C989.4 322.3 982.2 320 965 320.4C947.8 320.8 918.8 323.1 899.6 326.6C880.4 330.1 863.6 335.2 849.8 341.6C835.9 348 826.2 356.3 816.5 364.9C806.8 373.5 800 380.6 791.6 393.1C783.2 405.6 771.4 425.5 766.4 440C761.4 454.5 762.2 469.2 761.6 480C761 490.8 760.9 495.4 763 505C765.1 514.6 770.3 526.7 774 537.5L786.4 559.4L830 620L1250 460Z" fill="#fff"/><path d="M1190 472C1184.6 462.2 1179.3 452.9 1173.8 442.6C1168.2 432.4 1163.8 420.8 1156.7 410.5C1149.6 400.2 1142.4 390.6 1131 380.6C1119.6 370.6 1102.5 358.5 1088.3 350.6C1074 342.8 1059.8 337.9 1045.5 333.5C1031.2 329.1 1016.2 326.7 1002.8 324.5C989.4 322.3 982.2 320 965 320.4C947.8 320.8 918.8 323.1 899.6 326.6C880.4 330.1 863.6 335.2 849.8 341.6C835.9 348 826.2 356.3 816.5 364.9C806.8 373.5 800 380.6 791.6 393.1C783.2 405.6 771.4 425.5 766.4 440C761.4 454.5 762.2 469.2 761.6 480C761 490.8 760.9 495.4 763 505C765.1 514.6 770.3 526.7 774 537.5L774 537.5C772.3 526.7 769.8 514.6 769 505C768.2 495.4 766.1 490.8 769.5 480C772.9 469.2 781.4 452.8 789.2 440C797 427.2 806.4 412.2 816.5 403C826.6 393.8 835.9 390.1 849.8 384.8C863.6 379.6 880.4 375.5 899.6 371.5C918.8 367.5 947.8 361.8 965 360.6C982.2 359.4 989.4 361.5 1002.8 364.5C1016.2 367.5 1031.2 372.2 1045.5 378.4C1059.8 384.6 1075.8 393 1088.3 401.9C1100.8 410.8 1111.5 422.3 1120.4 431.9C1129.3 441.5 1135.1 450.3 1141.7 459.7C1148.3 469.1 1153.9 478.6 1160 488Z" fill="#1f63d0"/><path d="M1150 495C1146.5 490.3 1144.5 487.6 1139.6 481C1134.7 474.4 1129 464.6 1120.4 455.4C1111.9 446.1 1100.8 434.8 1088.3 425.5C1075.8 416.2 1059.8 406.6 1045.5 399.8C1031.2 393 1016.2 388.4 1002.8 384.8C989.4 381.2 982.2 377.8 965 378.4C947.8 379 918.8 383.8 899.6 388.2C880.4 392.6 863.6 398.4 849.8 404.8C835.9 411.2 824.1 420.5 816.5 426.4C808.9 432.3 810.2 431.1 804.2 440C798.2 448.9 786 469.2 780.5 480C775 490.8 771.9 495.3 771 505C770.1 514.7 773.7 527 775 538L775 538C778 528.3 779.7 518.7 784 509C788.3 499.3 790.9 491.5 800.7 480C810.5 468.5 826.3 449.5 842.8 440C859.3 430.5 879.2 427.2 899.6 423C920 418.8 947.8 415.7 965 415C982.2 414.3 990.6 416.3 1002.8 419C1014.9 421.7 1027.6 425.6 1037.9 431C1048.2 436.4 1056.8 445.7 1064.8 451.4C1072.8 457.1 1079.8 461 1086.2 465.3C1092.6 469.6 1099 472.9 1103.3 477C1107.6 481.1 1109.1 485.7 1112 490Z" fill="#1f63d0"/><path d="M1102 500C1100.3 498 1101.3 498.3 1096.9 494.1C1092.5 489.9 1082.6 480.4 1075.5 474.9C1068.4 469.4 1063 465.8 1054.1 461C1045.2 456.2 1032.7 450.2 1022 446C1011.3 441.8 999.5 438.4 990 435.9C980.5 433.3 980.1 429.8 965 430.7C949.9 431.6 924.4 432.8 899.6 441C874.9 449.2 835 467.1 816.5 480C798 492.9 794.1 508.9 788.3 518.5C782.5 528.1 781.9 530.7 781.6 537.5C781.3 544.3 784.8 552.1 786.4 559.4L786.4 559.4C788 556.9 788.9 555.4 791.1 551.8C793.3 548.1 796.6 543 799.7 537.5C802.9 532 800.6 528.6 810 519C819.4 509.4 841.6 488.9 856 480C870.4 471.1 884.3 468.4 896.6 465.5C908.9 462.6 918.6 463.1 930 462.5C941.4 461.9 955 461.1 965 462C975 462.9 980.5 465.2 990 467.9C999.5 470.6 1013.1 474.5 1022 478.1C1030.9 481.8 1037.2 486.2 1043.4 489.8C1049.7 493.4 1054.5 496.3 1059.5 499.5C1064.5 502.7 1070.3 506.9 1073.4 509.1C1076.5 511.4 1076.5 511.7 1078 513Z" fill="#1f63d0"/><path d="M1055 515C1053.3 513.7 1053.5 513.6 1049.8 511.2C1046.1 508.8 1039.1 503.9 1032.7 500.5C1026.3 497.1 1018.5 493.6 1011.4 490.9C1004.3 488.1 997.7 486.2 990 484C982.3 481.8 973 478.8 965 477.7C957 476.6 953.7 477.1 942.3 477.4C930.9 477.6 907.9 477.5 896.6 479.2C885.3 480.9 881.7 484.7 874.3 487.4L874.3 519L1060 540Z" fill="#1f63d0"/><path d="M1190 472L1185 463L1180 454L1175.1 444.9L1170.3 435.8L1165.8 426.5L1161 417.4L1155.4 408.7L1149.4 400.3L1142.8 392.4L1135.7 384.9L1128 378L1120 371.6L1111.7 365.5L1103.1 359.6L1094.4 354.1L1085.4 349.1L1076.2 344.6L1066.6 340.6L1056.9 337.1L1047.1 334L1037.2 331.2L1027.1 328.9L1017 326.9L1006.8 325.2L996.7 323.4L986.5 321.7L976.3 320.6L965.9 320.4L955.6 320.7L945.3 321.3L935.1 322.1L924.8 323.1L914.5 324.3L904.3 325.8L894.2 327.6L884.1 329.9L874.2 332.6L864.4 335.7L854.7 339.4L845.4 343.8L836.5 349L828.1 355.1L820.2 361.6L812.5 368.5L805.2 375.8L798.5 383.6L792.4 391.9L786.8 400.6L781.4 409.4L776.3 418.4L771.6 427.5L767.5 437L764.4 446.8L762.7 457L762 467.3L761.7 477.6L761.3 487.9L761.8 498.2L763.8 508.3L766.9 518.1L770.5 527.8L774 537.5M1180 471.7L1175.1 463L1170.2 454.4L1165.3 445.7L1160.6 437L1155.8 428.3L1150.6 419.8L1144.8 411.7L1138.6 404L1131.9 396.6L1124.8 389.7L1117.2 383.2L1109.3 377.1L1101.2 371.4L1092.9 366L1084.3 360.9L1075.5 356.3L1066.4 352.2L1057.2 348.5L1047.8 345.2L1038.3 342.2L1028.7 339.6L1019 337.4L1009.2 335.5L999.4 333.8L989.6 332.1L979.7 330.8L969.8 330.4L959.9 330.7L949.9 331.4L940 332.2L930.1 333.3L920.3 334.5L910.4 335.9L900.6 337.6L890.9 339.6L881.2 341.9L871.6 344.6L862.2 347.7L852.9 351.3L843.9 355.6L835.4 360.6L827.2 366.2L819.4 372.3L811.9 378.8L804.9 385.9L798.7 393.6L793 401.8L787.6 410.1L782.5 418.7L777.6 427.4L773.2 436.3L769.4 445.4L766.6 454.9L764.8 464.6L763.7 474.4L763 484.4L763 494.3L764.3 504.2L766.5 513.8L769.5 523.3L772.5 532.8M1175 480L1170.1 471.7L1165.3 463.5L1160.4 455.2L1155.5 447L1150.7 438.7L1145.7 430.6L1140.1 422.8L1134.1 415.3L1127.8 408.1L1121.1 401.2L1114.1 394.7L1106.7 388.7L1098.9 383L1091 377.6L1082.8 372.6L1074.4 368L1065.8 363.8L1057 359.9L1048 356.5L1039 353.3L1029.8 350.5L1020.5 348.1L1011.2 346L1001.8 344.1L992.3 342.4L982.9 341L973.3 340.5L963.7 340.6L954.2 341.3L944.6 342.2L935.1 343.4L925.6 344.6L916.1 346.1L906.7 347.7L897.3 349.5L887.9 351.6L878.6 353.9L869.4 356.5L860.3 359.5L851.3 363L842.7 367.1L834.4 371.7L826.4 376.8L818.7 382.5L811.5 388.8L805 395.8L799.1 403.4L793.7 411.3L788.6 419.4L783.7 427.6L779.1 436L774.8 444.6L771.2 453.5L768.5 462.5L766.4 471.8L765 481.2L764.5 490.8L765.3 500.3L766.7 509.8L769 519.1L771.5 528.3L774 537.5M1165.1 480.1L1160.3 472.2L1155.5 464.3L1150.6 456.5L1145.6 448.7L1140.6 441L1135.3 433.5L1129.5 426.3L1123.4 419.3L1117.1 412.6L1110.5 406.2L1103.6 400.1L1096.3 394.4L1088.8 389.1L1080.9 384.2L1072.9 379.6L1064.7 375.4L1056.4 371.4L1047.9 367.8L1039.3 364.5L1030.6 361.5L1021.7 358.9L1012.8 356.6L1003.8 354.6L994.7 352.7L985.6 351.2L976.4 350.5L967.2 350.5L958 351.1L948.8 352.1L939.7 353.3L930.6 354.7L921.5 356.2L912.4 357.8L903.3 359.5L894.3 361.4L885.3 363.4L876.3 365.7L867.4 368.2L858.7 371L850.1 374.3L841.7 378L833.5 382.1L825.6 386.8L818.2 392.3L811.4 398.5L805.3 405.4L799.8 412.8L794.7 420.5L789.8 428.3L785.1 436.3L780.6 444.3L776.5 452.6L772.9 461L769.9 469.7L767.5 478.5L766.1 487.6L766.5 496.8L767.5 505.9L769.1 515L771 524L773 533M1160 488L1155.2 480.5L1150.5 473L1145.7 465.6L1140.7 458.2L1135.6 451L1130.4 443.8L1124.8 436.9L1118.9 430.3L1112.8 423.8L1106.6 417.5L1100.1 411.4L1093.4 405.7L1086.2 400.4L1078.8 395.6L1071.1 391.1L1063.3 386.9L1055.4 382.9L1047.3 379.2L1039.2 375.8L1030.9 372.6L1022.5 369.8L1014 367.3L1005.4 365.1L996.7 363.1L988 361.4L979.2 360.4L970.3 360.3L961.5 360.9L952.7 361.9L943.9 363.2L935.1 364.6L926.4 366.2L917.7 367.8L909 369.6L900.3 371.4L891.6 373.2L883 375.2L874.4 377.3L865.8 379.6L857.3 382.2L849 385.1L840.7 388.4L832.6 392L824.9 396.4L817.9 401.8L811.6 408L805.9 414.8L800.7 422L795.8 429.4L791.1 436.9L786.5 444.5L782.1 452.2L778 460.1L774.2 468.1L770.8 476.3L768.3 484.8L767.7 493.6L768.8 502.4L769.7 511.2L771 520L772.5 528.8L774 537.5M1190 472L1180 471.7L1185 463L1175.1 463L1180 454L1170.2 454.4L1175.1 444.9L1165.3 445.7L1170.3 435.8L1160.6 437L1165.8 426.5L1155.8 428.3L1161 417.4L1150.6 419.8L1155.4 408.7L1144.8 411.7L1149.4 400.3L1138.6 404L1142.8 392.4L1131.9 396.6L1135.7 384.9L1124.8 389.7L1128 378L1117.2 383.2L1120 371.6L1109.3 377.1L1111.7 365.5L1101.2 371.4L1103.1 359.6L1092.9 366L1094.4 354.1L1084.3 360.9L1085.4 349.1L1075.5 356.3L1076.2 344.6L1066.4 352.2L1066.6 340.6L1057.2 348.5L1056.9 337.1L1047.8 345.2L1047.1 334L1038.3 342.2L1037.2 331.2L1028.7 339.6L1027.1 328.9L1019 337.4L1017 326.9L1009.2 335.5L1006.8 325.2L999.4 333.8L996.7 323.4L989.6 332.1L986.5 321.7L979.7 330.8L976.3 320.6L969.8 330.4L965.9 320.4L959.9 330.7L955.6 320.7L949.9 331.4L945.3 321.3L940 332.2L935.1 322.1L930.1 333.3L924.8 323.1L920.3 334.5L914.5 324.3L910.4 335.9L904.3 325.8L900.6 337.6L894.2 327.6L890.9 339.6L884.1 329.9L881.2 341.9L874.2 332.6L871.6 344.6L864.4 335.7L862.2 347.7L854.7 339.4L852.9 351.3L845.4 343.8L843.9 355.6L836.5 349L835.4 360.6L828.1 355.1L827.2 366.2L820.2 361.6L819.4 372.3L812.5 368.5L811.9 378.8L805.2 375.8L804.9 385.9L798.5 383.6L798.7 393.6L792.4 391.9L793 401.8L786.8 400.6L787.6 410.1L781.4 409.4L782.5 418.7L776.3 418.4L777.6 427.4L771.6 427.5L773.2 436.3L767.5 437L769.4 445.4L764.4 446.8L766.6 454.9L762.7 457L764.8 464.6L762 467.3L763.7 474.4L761.7 477.6L763 484.4L761.3 487.9L763 494.3L761.8 498.2L764.3 504.2L763.8 508.3L766.5 513.8L766.9 518.1L769.5 523.3L770.5 527.8L772.5 532.8L774 537.5M1175 480L1180 471.7L1170.1 471.7L1175.1 463L1165.3 463.5L1170.2 454.4L1160.4 455.2L1165.3 445.7L1155.5 447L1160.6 437L1150.7 438.7L1155.8 428.3L1145.7 430.6L1150.6 419.8L1140.1 422.8L1144.8 411.7L1134.1 415.3L1138.6 404L1127.8 408.1L1131.9 396.6L1121.1 401.2L1124.8 389.7L1114.1 394.7L1117.2 383.2L1106.7 388.7L1109.3 377.1L1098.9 383L1101.2 371.4L1091 377.6L1092.9 366L1082.8 372.6L1084.3 360.9L1074.4 368L1075.5 356.3L1065.8 363.8L1066.4 352.2L1057 359.9L1057.2 348.5L1048 356.5L1047.8 345.2L1039 353.3L1038.3 342.2L1029.8 350.5L1028.7 339.6L1020.5 348.1L1019 337.4L1011.2 346L1009.2 335.5L1001.8 344.1L999.4 333.8L992.3 342.4L989.6 332.1L982.9 341L979.7 330.8L973.3 340.5L969.8 330.4L963.7 340.6L959.9 330.7L954.2 341.3L949.9 331.4L944.6 342.2L940 332.2L935.1 343.4L930.1 333.3L925.6 344.6L920.3 334.5L916.1 346.1L910.4 335.9L906.7 347.7L900.6 337.6L897.3 349.5L890.9 339.6L887.9 351.6L881.2 341.9L878.6 353.9L871.6 344.6L869.4 356.5L862.2 347.7L860.3 359.5L852.9 351.3L851.3 363L843.9 355.6L842.7 367.1L835.4 360.6L834.4 371.7L827.2 366.2L826.4 376.8L819.4 372.3L818.7 382.5L811.9 378.8L811.5 388.8L804.9 385.9L805 395.8L798.7 393.6L799.1 403.4L793 401.8L793.7 411.3L787.6 410.1L788.6 419.4L782.5 418.7L783.7 427.6L777.6 427.4L779.1 436L773.2 436.3L774.8 444.6L769.4 445.4L771.2 453.5L766.6 454.9L768.5 462.5L764.8 464.6L766.4 471.8L763.7 474.4L765 481.2L763 484.4L764.5 490.8L763 494.3L765.3 500.3L764.3 504.2L766.7 509.8L766.5 513.8L769 519.1L769.5 523.3L771.5 528.3L772.5 532.8L774 537.5M1175 480L1165.1 480.1L1170.1 471.7L1160.3 472.2L1165.3 463.5L1155.5 464.3L1160.4 455.2L1150.6 456.5L1155.5 447L1145.6 448.7L1150.7 438.7L1140.6 441L1145.7 430.6L1135.3 433.5L1140.1 422.8L1129.5 426.3L1134.1 415.3L1123.4 419.3L1127.8 408.1L1117.1 412.6L1121.1 401.2L1110.5 406.2L1114.1 394.7L1103.6 400.1L1106.7 388.7L1096.3 394.4L1098.9 383L1088.8 389.1L1091 377.6L1080.9 384.2L1082.8 372.6L1072.9 379.6L1074.4 368L1064.7 375.4L1065.8 363.8L1056.4 371.4L1057 359.9L1047.9 367.8L1048 356.5L1039.3 364.5L1039 353.3L1030.6 361.5L1029.8 350.5L1021.7 358.9L1020.5 348.1L1012.8 356.6L1011.2 346L1003.8 354.6L1001.8 344.1L994.7 352.7L992.3 342.4L985.6 351.2L982.9 341L976.4 350.5L973.3 340.5L967.2 350.5L963.7 340.6L958 351.1L954.2 341.3L948.8 352.1L944.6 342.2L939.7 353.3L935.1 343.4L930.6 354.7L925.6 344.6L921.5 356.2L916.1 346.1L912.4 357.8L906.7 347.7L903.3 359.5L897.3 349.5L894.3 361.4L887.9 351.6L885.3 363.4L878.6 353.9L876.3 365.7L869.4 356.5L867.4 368.2L860.3 359.5L858.7 371L851.3 363L850.1 374.3L842.7 367.1L841.7 378L834.4 371.7L833.5 382.1L826.4 376.8L825.6 386.8L818.7 382.5L818.2 392.3L811.5 388.8L811.4 398.5L805 395.8L805.3 405.4L799.1 403.4L799.8 412.8L793.7 411.3L794.7 420.5L788.6 419.4L789.8 428.3L783.7 427.6L785.1 436.3L779.1 436L780.6 444.3L774.8 444.6L776.5 452.6L771.2 453.5L772.9 461L768.5 462.5L769.9 469.7L766.4 471.8L767.5 478.5L765 481.2L766.1 487.6L764.5 490.8L766.5 496.8L765.3 500.3L767.5 505.9L766.7 509.8L769.1 515L769 519.1L771 524L771.5 528.3L773 533L774 537.5M1160 488L1165.1 480.1L1155.2 480.5L1160.3 472.2L1150.5 473L1155.5 464.3L1145.7 465.6L1150.6 456.5L1140.7 458.2L1145.6 448.7L1135.6 451L1140.6 441L1130.4 443.8L1135.3 433.5L1124.8 436.9L1129.5 426.3L1118.9 430.3L1123.4 419.3L1112.8 423.8L1117.1 412.6L1106.6 417.5L1110.5 406.2L1100.1 411.4L1103.6 400.1L1093.4 405.7L1096.3 394.4L1086.2 400.4L1088.8 389.1L1078.8 395.6L1080.9 384.2L1071.1 391.1L1072.9 379.6L1063.3 386.9L1064.7 375.4L1055.4 382.9L1056.4 371.4L1047.3 379.2L1047.9 367.8L1039.2 375.8L1039.3 364.5L1030.9 372.6L1030.6 361.5L1022.5 369.8L1021.7 358.9L1014 367.3L1012.8 356.6L1005.4 365.1L1003.8 354.6L996.7 363.1L994.7 352.7L988 361.4L985.6 351.2L979.2 360.4L976.4 350.5L970.3 360.3L967.2 350.5L961.5 360.9L958 351.1L952.7 361.9L948.8 352.1L943.9 363.2L939.7 353.3L935.1 364.6L930.6 354.7L926.4 366.2L921.5 356.2L917.7 367.8L912.4 357.8L909 369.6L903.3 359.5L900.3 371.4L894.3 361.4L891.6 373.2L885.3 363.4L883 375.2L876.3 365.7L874.4 377.3L867.4 368.2L865.8 379.6L858.7 371L857.3 382.2L850.1 374.3L849 385.1L841.7 378L840.7 388.4L833.5 382.1L832.6 392L825.6 386.8L824.9 396.4L818.2 392.3L817.9 401.8L811.4 398.5L811.6 408L805.3 405.4L805.9 414.8L799.8 412.8L800.7 422L794.7 420.5L795.8 429.4L789.8 428.3L791.1 436.9L785.1 436.3L786.5 444.5L780.6 444.3L782.1 452.2L776.5 452.6L778 460.1L772.9 461L774.2 468.1L769.9 469.7L770.8 476.3L767.5 478.5L768.3 484.8L766.1 487.6L767.7 493.6L766.5 496.8L768.8 502.4L767.5 505.9L769.7 511.2L769.1 515L771 520L771 524L772.5 528.8L773 533L774 537.5M1160 488L1153.6 477.9L1147.2 467.8L1140.5 457.9L1133.6 448.2L1126.3 438.7L1118.4 429.7L1110.1 421.1L1101.6 412.7L1092.4 405L1082.7 398.1L1072.5 391.9L1062 386.2L1051.2 381L1040.2 376.2L1029.1 372L1017.7 368.3L1006.1 365.3L994.5 362.6L982.7 360.7L970.7 360.3L958.8 361.2L946.9 362.7L935.1 364.6L923.4 366.7L911.6 369L899.9 371.4L888.2 374L876.6 376.7L865.1 379.8L853.7 383.4L842.5 387.6L831.6 392.5L821.5 398.9L812.6 406.9L805 416.1L798.1 425.9L791.7 435.9L785.5 446.2L779.8 456.7L774.5 467.4L770 478.5L767.7 490.1L768.7 502L770.1 513.9L772 525.7L774 537.5M1151.7 486.7L1145.2 477.2L1138.8 467.7L1132.1 458.3L1125 449.2L1117.4 440.5L1109.4 432.3L1101 424.3L1092.3 416.8L1083 410L1073.3 403.7L1063.3 398L1053.1 392.7L1042.6 387.8L1031.9 383.5L1021 379.7L1009.9 376.5L998.8 373.6L987.6 370.9L976.1 369.5L964.6 369.5L953.1 370.5L941.7 372.1L930.3 373.9L919 375.9L907.6 378.1L896.4 380.5L885.1 383.2L874 386.2L863 389.7L852.2 393.7L841.6 398.2L831.5 403.7L822.1 410.4L813.6 418.1L805.7 426.4L799.2 435.9L793.1 445.7L787.2 455.7L781.6 465.8L776.5 476.1L772.1 486.7L769.9 497.8L770.1 509.3L771.6 520.7L773.6 532.1M1150 495L1143.4 486.1L1136.8 477.1L1130.5 468L1123.7 459.2L1116.2 451L1108.5 443L1100.4 435.4L1091.9 428.2L1082.9 421.6L1073.7 415.5L1064.2 409.7L1054.5 404.3L1044.5 399.3L1034.3 394.9L1023.9 391.1L1013.3 387.8L1002.6 384.8L991.9 381.7L981.1 379.3L970 378.3L958.9 378.7L947.9 379.8L936.9 381.3L925.9 383L914.9 385L904.1 387.2L893.2 389.7L882.5 392.7L871.9 396L861.5 399.8L851.2 404.1L841.3 409.2L831.9 415L822.9 421.5L814.1 428.3L806.6 436.4L800.5 445.7L794.7 455.1L789 464.7L783.5 474.4L778.3 484.2L773.5 494.2L771 505L771.4 516.1L773.2 527L775 538M1160 488L1151.7 486.7L1153.6 477.9L1145.2 477.2L1147.2 467.8L1138.8 467.7L1140.5 457.9L1132.1 458.3L1133.6 448.2L1125 449.2L1126.3 438.7L1117.4 440.5L1118.4 429.7L1109.4 432.3L1110.1 421.1L1101 424.3L1101.6 412.7L1092.3 416.8L1092.4 405L1083 410L1082.7 398.1L1073.3 403.7L1072.5 391.9L1063.3 398L1062 386.2L1053.1 392.7L1051.2 381L1042.6 387.8L1040.2 376.2L1031.9 383.5L1029.1 372L1021 379.7L1017.7 368.3L1009.9 376.5L1006.1 365.3L998.8 373.6L994.5 362.6L987.6 370.9L982.7 360.7L976.1 369.5L970.7 360.3L964.6 369.5L958.8 361.2L953.1 370.5L946.9 362.7L941.7 372.1L935.1 364.6L930.3 373.9L923.4 366.7L919 375.9L911.6 369L907.6 378.1L899.9 371.4L896.4 380.5L888.2 374L885.1 383.2L876.6 376.7L874 386.2L865.1 379.8L863 389.7L853.7 383.4L852.2 393.7L842.5 387.6L841.6 398.2L831.6 392.5L831.5 403.7L821.5 398.9L822.1 410.4L812.6 406.9L813.6 418.1L805 416.1L805.7 426.4L798.1 425.9L799.2 435.9L791.7 435.9L793.1 445.7L785.5 446.2L787.2 455.7L779.8 456.7L781.6 465.8L774.5 467.4L776.5 476.1L770 478.5L772.1 486.7L767.7 490.1L769.9 497.8L768.7 502L770.1 509.3L770.1 513.9L771.6 520.7L772 525.7L773.6 532.1L774 537.5M1150 495L1151.7 486.7L1143.4 486.1L1145.2 477.2L1136.8 477.1L1138.8 467.7L1130.5 468L1132.1 458.3L1123.7 459.2L1125 449.2L1116.2 451L1117.4 440.5L1108.5 443L1109.4 432.3L1100.4 435.4L1101 424.3L1091.9 428.2L1092.3 416.8L1082.9 421.6L1083 410L1073.7 415.5L1073.3 403.7L1064.2 409.7L1063.3 398L1054.5 404.3L1053.1 392.7L1044.5 399.3L1042.6 387.8L1034.3 394.9L1031.9 383.5L1023.9 391.1L1021 379.7L1013.3 387.8L1009.9 376.5L1002.6 384.8L998.8 373.6L991.9 381.7L987.6 370.9L981.1 379.3L976.1 369.5L970 378.3L964.6 369.5L958.9 378.7L953.1 370.5L947.9 379.8L941.7 372.1L936.9 381.3L930.3 373.9L925.9 383L919 375.9L914.9 385L907.6 378.1L904.1 387.2L896.4 380.5L893.2 389.7L885.1 383.2L882.5 392.7L874 386.2L871.9 396L863 389.7L861.5 399.8L852.2 393.7L851.2 404.1L841.6 398.2L841.3 409.2L831.5 403.7L831.9 415L822.1 410.4L822.9 421.5L813.6 418.1L814.1 428.3L805.7 426.4L806.6 436.4L799.2 435.9L800.5 445.7L793.1 445.7L794.7 455.1L787.2 455.7L789 464.7L781.6 465.8L783.5 474.4L776.5 476.1L778.3 484.2L772.1 486.7L773.5 494.2L769.9 497.8L771 505L770.1 509.3L771.4 516.1L771.6 520.7L773.2 527L773.6 532.1L775 538M1150 495L1144.6 487.7L1139.1 480.3L1133.9 472.9L1128.6 465.4L1122.9 458.3L1116.8 451.5L1110.4 445L1103.9 438.6L1097.1 432.5L1090 426.8L1082.6 421.4L1075 416.4L1067.3 411.5L1059.4 407L1051.3 402.7L1043.1 398.7L1034.7 395.1L1026.2 391.9L1017.5 389L1008.7 386.4L999.9 384L991.2 381.5L982.3 379.5L973.2 378.4L964.1 378.4L955 379.1L945.9 380.1L936.9 381.3L927.8 382.7L918.8 384.3L909.9 386L901 387.9L892.1 390L883.3 392.4L874.6 395.1L865.9 398.1L857.4 401.5L849.1 405.1L841 409.4L833.2 414.2L825.7 419.4L818.5 424.9L811.3 430.5L805.7 437.7L800.7 445.4L795.9 453.1L791.2 460.9L786.6 468.8L782.2 476.8L778 484.9L774 493.1L771.4 501.8L770.9 510.9L772 520L773.6 529L775 538M1138 490.2L1132.9 483.1L1127.6 476.2L1122.2 469.5L1116.5 463L1110.5 456.8L1104.2 450.9L1097.8 445L1091.3 439.3L1084.6 433.6L1077.7 428.3L1070.7 423.2L1063.3 418.5L1055.8 414.1L1048.1 410.1L1040.2 406.3L1032.2 402.9L1024 400L1015.7 397.3L1007.4 394.9L998.9 392.8L990.5 390.8L982 389L973.4 387.9L964.7 387.7L956 388.1L947.3 388.9L938.7 390L930 391.2L921.4 392.6L912.8 394.2L904.3 395.9L895.8 397.7L887.3 399.8L878.9 402.1L870.6 404.7L862.4 407.6L854.3 410.8L846.4 414.4L838.7 418.6L831.4 423.4L824.4 428.6L817.6 434L811.3 440L806.2 447L801.3 454.2L796.5 461.4L791.8 468.7L787.2 476.2L783 483.8L779 491.5L775.6 499.5L773.8 508L773.5 516.6L774.1 525.2L774.8 533.7M1131 492.5L1126.4 485.6L1121.5 478.9L1116 472.8L1110.2 467.1L1104.2 461.5L1097.9 456.1L1091.6 450.9L1085.2 445.6L1078.8 440.3L1072.4 435L1065.8 430L1059 425.2L1051.9 420.9L1044.6 417.1L1037 413.6L1029.4 410.5L1021.6 407.7L1013.7 405.3L1005.7 403.1L997.6 401.1L989.5 399.6L981.3 398.2L973.2 397.2L964.9 397L956.6 397.2L948.3 397.9L940.1 398.8L931.8 399.9L923.6 401.1L915.4 402.5L907.3 404L899.1 405.7L891 407.5L883 409.5L874.9 411.6L867 414L859.2 416.8L851.5 419.9L844 423.5L836.9 427.8L830.1 432.5L823.5 437.6L817.2 443L811.8 449.2L806.7 455.8L801.8 462.5L797 469.2L792.3 476L787.9 483.1L784 490.3L780.4 497.8L777.6 505.6L776 513.7L775.5 521.8L775.3 529.9L775 538M1119.4 487.9L1115.1 481.3L1109.9 475.4L1104 470.4L1097.9 465.6L1091.7 460.8L1085.3 456.1L1079 451.5L1072.7 446.7L1066.6 441.7L1060.6 436.7L1054.3 431.9L1047.7 427.5L1040.7 423.8L1033.6 420.6L1026.2 417.7L1018.8 415.2L1011.2 413L1003.6 411L995.9 409.2L988.1 407.9L980.3 406.9L972.5 406.3L964.7 406.1L956.8 406.4L948.9 407L941.1 407.8L933.2 408.7L925.4 409.8L917.6 411L909.8 412.3L902.1 413.8L894.3 415.4L886.6 417.1L879 418.9L871.3 420.9L863.8 423.2L856.3 425.8L849.1 428.9L842.1 432.5L835.4 436.8L829.1 441.5L823.1 446.6L817.4 452L812.2 458L807.2 464L802.3 470.2L797.5 476.5L793 482.9L788.8 489.6L785.2 496.6L782.1 503.8L779.5 511.3L777.9 518.9L776.7 526.5L775.6 534.2M1112 490L1108.2 483.5L1103.8 477.5L1098 472.8L1091.7 468.8L1085.4 464.8L1079.1 460.8L1072.8 456.8L1066.5 452.6L1060.5 448.1L1054.8 443.3L1049.1 438.5L1043.1 434.1L1036.6 430.3L1029.8 427.2L1022.8 424.6L1015.7 422.3L1008.4 420.3L1001.1 418.6L993.8 417.1L986.4 415.8L979 415.1L971.5 414.9L964 415L956.6 415.5L949.1 416.1L941.7 416.8L934.2 417.6L926.8 418.5L919.4 419.6L912 420.7L904.6 422L897.3 423.5L890 424.9L882.6 426.5L875.3 428.1L868.1 429.9L860.9 432.1L853.9 434.7L847.1 437.7L840.5 441.4L834.4 445.6L828.6 450.4L823.1 455.4L817.8 460.7L812.7 466.2L807.7 471.8L802.8 477.5L798.1 483.2L793.7 489.3L790 495.8L786.8 502.6L783.8 509.4L781.2 516.4L779 523.6L777.1 530.8L775 538M1150 495L1138 490.2L1144.6 487.7L1132.9 483.1L1139.1 480.3L1127.6 476.2L1133.9 472.9L1122.2 469.5L1128.6 465.4L1116.5 463L1122.9 458.3L1110.5 456.8L1116.8 451.5L1104.2 450.9L1110.4 445L1097.8 445L1103.9 438.6L1091.3 439.3L1097.1 432.5L1084.6 433.6L1090 426.8L1077.7 428.3L1082.6 421.4L1070.7 423.2L1075 416.4L1063.3 418.5L1067.3 411.5L1055.8 414.1L1059.4 407L1048.1 410.1L1051.3 402.7L1040.2 406.3L1043.1 398.7L1032.2 402.9L1034.7 395.1L1024 400L1026.2 391.9L1015.7 397.3L1017.5 389L1007.4 394.9L1008.7 386.4L998.9 392.8L999.9 384L990.5 390.8L991.2 381.5L982 389L982.3 379.5L973.4 387.9L973.2 378.4L964.7 387.7L964.1 378.4L956 388.1L955 379.1L947.3 388.9L945.9 380.1L938.7 390L936.9 381.3L930 391.2L927.8 382.7L921.4 392.6L918.8 384.3L912.8 394.2L909.9 386L904.3 395.9L901 387.9L895.8 397.7L892.1 390L887.3 399.8L883.3 392.4L878.9 402.1L874.6 395.1L870.6 404.7L865.9 398.1L862.4 407.6L857.4 401.5L854.3 410.8L849.1 405.1L846.4 414.4L841 409.4L838.7 418.6L833.2 414.2L831.4 423.4L825.7 419.4L824.4 428.6L818.5 424.9L817.6 434L811.3 430.5L811.3 440L805.7 437.7L806.2 447L800.7 445.4L801.3 454.2L795.9 453.1L796.5 461.4L791.2 460.9L791.8 468.7L786.6 468.8L787.2 476.2L782.2 476.8L783 483.8L778 484.9L779 491.5L774 493.1L775.6 499.5L771.4 501.8L773.8 508L770.9 510.9L773.5 516.6L772 520L774.1 525.2L773.6 529L774.8 533.7L775 538M1131 492.5L1138 490.2L1126.4 485.6L1132.9 483.1L1121.5 478.9L1127.6 476.2L1116 472.8L1122.2 469.5L1110.2 467.1L1116.5 463L1104.2 461.5L1110.5 456.8L1097.9 456.1L1104.2 450.9L1091.6 450.9L1097.8 445L1085.2 445.6L1091.3 439.3L1078.8 440.3L1084.6 433.6L1072.4 435L1077.7 428.3L1065.8 430L1070.7 423.2L1059 425.2L1063.3 418.5L1051.9 420.9L1055.8 414.1L1044.6 417.1L1048.1 410.1L1037 413.6L1040.2 406.3L1029.4 410.5L1032.2 402.9L1021.6 407.7L1024 400L1013.7 405.3L1015.7 397.3L1005.7 403.1L1007.4 394.9L997.6 401.1L998.9 392.8L989.5 399.6L990.5 390.8L981.3 398.2L982 389L973.2 397.2L973.4 387.9L964.9 397L964.7 387.7L956.6 397.2L956 388.1L948.3 397.9L947.3 388.9L940.1 398.8L938.7 390L931.8 399.9L930 391.2L923.6 401.1L921.4 392.6L915.4 402.5L912.8 394.2L907.3 404L904.3 395.9L899.1 405.7L895.8 397.7L891 407.5L887.3 399.8L883 409.5L878.9 402.1L874.9 411.6L870.6 404.7L867 414L862.4 407.6L859.2 416.8L854.3 410.8L851.5 419.9L846.4 414.4L844 423.5L838.7 418.6L836.9 427.8L831.4 423.4L830.1 432.5L824.4 428.6L823.5 437.6L817.6 434L817.2 443L811.3 440L811.8 449.2L806.2 447L806.7 455.8L801.3 454.2L801.8 462.5L796.5 461.4L797 469.2L791.8 468.7L792.3 476L787.2 476.2L787.9 483.1L783 483.8L784 490.3L779 491.5L780.4 497.8L775.6 499.5L777.6 505.6L773.8 508L776 513.7L773.5 516.6L775.5 521.8L774.1 525.2L775.3 529.9L774.8 533.7L775 538M1131 492.5L1119.4 487.9L1126.4 485.6L1115.1 481.3L1121.5 478.9L1109.9 475.4L1116 472.8L1104 470.4L1110.2 467.1L1097.9 465.6L1104.2 461.5L1091.7 460.8L1097.9 456.1L1085.3 456.1L1091.6 450.9L1079 451.5L1085.2 445.6L1072.7 446.7L1078.8 440.3L1066.6 441.7L1072.4 435L1060.6 436.7L1065.8 430L1054.3 431.9L1059 425.2L1047.7 427.5L1051.9 420.9L1040.7 423.8L1044.6 417.1L1033.6 420.6L1037 413.6L1026.2 417.7L1029.4 410.5L1018.8 415.2L1021.6 407.7L1011.2 413L1013.7 405.3L1003.6 411L1005.7 403.1L995.9 409.2L997.6 401.1L988.1 407.9L989.5 399.6L980.3 406.9L981.3 398.2L972.5 406.3L973.2 397.2L964.7 406.1L964.9 397L956.8 406.4L956.6 397.2L948.9 407L948.3 397.9L941.1 407.8L940.1 398.8L933.2 408.7L931.8 399.9L925.4 409.8L923.6 401.1L917.6 411L915.4 402.5L909.8 412.3L907.3 404L902.1 413.8L899.1 405.7L894.3 415.4L891 407.5L886.6 417.1L883 409.5L879 418.9L874.9 411.6L871.3 420.9L867 414L863.8 423.2L859.2 416.8L856.3 425.8L851.5 419.9L849.1 428.9L844 423.5L842.1 432.5L836.9 427.8L835.4 436.8L830.1 432.5L829.1 441.5L823.5 437.6L823.1 446.6L817.2 443L817.4 452L811.8 449.2L812.2 458L806.7 455.8L807.2 464L801.8 462.5L802.3 470.2L797 469.2L797.5 476.5L792.3 476L793 482.9L787.9 483.1L788.8 489.6L784 490.3L785.2 496.6L780.4 497.8L782.1 503.8L777.6 505.6L779.5 511.3L776 513.7L777.9 518.9L775.5 521.8L776.7 526.5L775.3 529.9L775.6 534.2L775 538M1112 490L1119.4 487.9L1108.2 483.5L1115.1 481.3L1103.8 477.5L1109.9 475.4L1098 472.8L1104 470.4L1091.7 468.8L1097.9 465.6L1085.4 464.8L1091.7 460.8L1079.1 460.8L1085.3 456.1L1072.8 456.8L1079 451.5L1066.5 452.6L1072.7 446.7L1060.5 448.1L1066.6 441.7L1054.8 443.3L1060.6 436.7L1049.1 438.5L1054.3 431.9L1043.1 434.1L1047.7 427.5L1036.6 430.3L1040.7 423.8L1029.8 427.2L1033.6 420.6L1022.8 424.6L1026.2 417.7L1015.7 422.3L1018.8 415.2L1008.4 420.3L1011.2 413L1001.1 418.6L1003.6 411L993.8 417.1L995.9 409.2L986.4 415.8L988.1 407.9L979 415.1L980.3 406.9L971.5 414.9L972.5 406.3L964 415L964.7 406.1L956.6 415.5L956.8 406.4L949.1 416.1L948.9 407L941.7 416.8L941.1 407.8L934.2 417.6L933.2 408.7L926.8 418.5L925.4 409.8L919.4 419.6L917.6 411L912 420.7L909.8 412.3L904.6 422L902.1 413.8L897.3 423.5L894.3 415.4L890 424.9L886.6 417.1L882.6 426.5L879 418.9L875.3 428.1L871.3 420.9L868.1 429.9L863.8 423.2L860.9 432.1L856.3 425.8L853.9 434.7L849.1 428.9L847.1 437.7L842.1 432.5L840.5 441.4L835.4 436.8L834.4 445.6L829.1 441.5L828.6 450.4L823.1 446.6L823.1 455.4L817.4 452L817.8 460.7L812.2 458L812.7 466.2L807.2 464L807.7 471.8L802.3 470.2L802.8 477.5L797.5 476.5L798.1 483.2L793 482.9L793.7 489.3L788.8 489.6L790 495.8L785.2 496.6L786.8 502.6L782.1 503.8L783.8 509.4L779.5 511.3L781.2 516.4L777.9 518.9L779 523.6L776.7 526.5L777.1 530.8L775.6 534.2L775 538M1112 490L1106.7 481L1099.2 473.7L1090.4 468L1081.6 462.3L1072.8 456.8L1064.1 450.9L1056 444.3L1047.9 437.6L1039.2 431.7L1029.8 427.2L1019.9 423.6L1009.9 420.7L999.7 418.3L989.4 416.3L979 415.1L968.5 414.9L958.1 415.4L947.6 416.2L937.2 417.3L926.8 418.5L916.4 420L906.1 421.7L895.8 423.8L885.6 425.8L875.3 428.1L865.2 430.8L855.3 434.1L845.7 438.4L836.8 443.9L828.6 450.4L820.9 457.5L813.7 465.1L806.7 472.9L799.9 480.9L793.7 489.3L788.6 498.5L784.4 508.1L780.7 517.8L777.8 527.9L775 538M1104.1 490.8L1097.4 483L1089.4 476.4L1081.2 470.3L1072.6 464.5L1063.9 459L1055.3 453.4L1046.7 447.7L1038 442.4L1028.7 437.9L1019.1 434.1L1009.3 430.9L999.3 428.2L989.4 425.6L979.4 423.2L969.1 422.8L958.8 423.2L948.5 424L938.2 425L928 426.4L917.8 428.1L907.7 430.2L897.7 432.7L887.8 435.5L878 438.5L868.2 441.7L858.5 445.3L849.1 449.3L839.9 454L831.1 459.5L822.8 465.5L814.9 472.1L807.7 479.5L801.2 487.5L795.4 496L790.3 504.9L785.6 514.1L782.1 523.7L780.8 533.8L780.8 543.7M1102 500L1095.2 492.5L1087.8 485.5L1080.2 478.7L1072.2 472.4L1063.9 466.7L1055.1 461.5L1046.1 456.8L1036.9 452.4L1027.6 448.3L1018.2 444.5L1008.5 441.3L998.8 438.3L989 435.6L979.5 432L969.5 430.6L959.3 431L949.2 431.7L939 432.7L929 434.1L919 435.9L909.1 438.2L899.3 441.1L889.7 444.5L880.2 448.2L870.8 452L861.5 456.1L852.3 460.3L843.1 464.8L834.1 469.5L825.2 474.4L816.7 479.9L808.8 486.3L802 493.9L796.5 502.4L791.9 511.5L787.1 520.5L782.7 529.6L781.6 539.7L783.7 549.6L786.4 559.4M1112 490L1104.1 490.8L1106.7 481L1097.4 483L1099.2 473.7L1089.4 476.4L1090.4 468L1081.2 470.3L1081.6 462.3L1072.6 464.5L1072.8 456.8L1063.9 459L1064.1 450.9L1055.3 453.4L1056 444.3L1046.7 447.7L1047.9 437.6L1038 442.4L1039.2 431.7L1028.7 437.9L1029.8 427.2L1019.1 434.1L1019.9 423.6L1009.3 430.9L1009.9 420.7L999.3 428.2L999.7 418.3L989.4 425.6L989.4 416.3L979.4 423.2L979 415.1L969.1 422.8L968.5 414.9L958.8 423.2L958.1 415.4L948.5 424L947.6 416.2L938.2 425L937.2 417.3L928 426.4L926.8 418.5L917.8 428.1L916.4 420L907.7 430.2L906.1 421.7L897.7 432.7L895.8 423.8L887.8 435.5L885.6 425.8L878 438.5L875.3 428.1L868.2 441.7L865.2 430.8L858.5 445.3L855.3 434.1L849.1 449.3L845.7 438.4L839.9 454L836.8 443.9L831.1 459.5L828.6 450.4L822.8 465.5L820.9 457.5L814.9 472.1L813.7 465.1L807.7 479.5L806.7 472.9L801.2 487.5L799.9 480.9L795.4 496L793.7 489.3L790.3 504.9L788.6 498.5L785.6 514.1L784.4 508.1L782.1 523.7L780.7 517.8L780.8 533.8L777.8 527.9L780.8 543.7L775 538M1102 500L1104.1 490.8L1095.2 492.5L1097.4 483L1087.8 485.5L1089.4 476.4L1080.2 478.7L1081.2 470.3L1072.2 472.4L1072.6 464.5L1063.9 466.7L1063.9 459L1055.1 461.5L1055.3 453.4L1046.1 456.8L1046.7 447.7L1036.9 452.4L1038 442.4L1027.6 448.3L1028.7 437.9L1018.2 444.5L1019.1 434.1L1008.5 441.3L1009.3 430.9L998.8 438.3L999.3 428.2L989 435.6L989.4 425.6L979.5 432L979.4 423.2L969.5 430.6L969.1 422.8L959.3 431L958.8 423.2L949.2 431.7L948.5 424L939 432.7L938.2 425L929 434.1L928 426.4L919 435.9L917.8 428.1L909.1 438.2L907.7 430.2L899.3 441.1L897.7 432.7L889.7 444.5L887.8 435.5L880.2 448.2L878 438.5L870.8 452L868.2 441.7L861.5 456.1L858.5 445.3L852.3 460.3L849.1 449.3L843.1 464.8L839.9 454L834.1 469.5L831.1 459.5L825.2 474.4L822.8 465.5L816.7 479.9L814.9 472.1L808.8 486.3L807.7 479.5L802 493.9L801.2 487.5L796.5 502.4L795.4 496L791.9 511.5L790.3 504.9L787.1 520.5L785.6 514.1L782.7 529.6L782.1 523.7L781.6 539.7L780.8 533.8L783.7 549.6L780.8 543.7L786.4 559.4M1102 500L1096.2 493.4L1089.7 487.3L1083.2 481.4L1076.5 475.6L1069.4 470.3L1062 465.5L1054.3 461.1L1046.5 457L1038.5 453.2L1030.5 449.5L1022.3 446.1L1014 443.1L1005.6 440.3L997.1 437.8L988.6 435.5L980.3 432.3L971.7 430.6L962.8 430.8L954 431.4L945.2 432.1L936.4 433L927.7 434.3L919 435.9L910.3 437.9L901.8 440.3L893.5 443.1L885.2 446.2L877 449.5L868.8 452.9L860.7 456.5L852.7 460.2L844.7 464L836.8 468L829.1 472.2L821.5 476.7L814.2 481.7L807.5 487.5L801.8 494.2L797 501.7L792.9 509.5L788.9 517.4L784.6 525.1L781.9 533.5L781.9 542.3L784 550.9L786.4 559.4M1091.3 501.2L1085 495.6L1078.7 490.2L1072.1 484.9L1065.4 479.9L1058.4 475.3L1051.2 470.9L1043.9 466.8L1036.4 463.1L1028.7 459.6L1021 456.5L1013.1 453.6L1005.1 451L997.1 448.5L989 446.2L981 443.8L973 441.5L964.6 441L956.2 441.3L947.8 441.7L939.5 442.4L931.1 443.3L922.8 444.3L914.5 445.6L906.3 447.2L898.2 449.4L890.3 451.9L882.3 454.7L874.5 457.6L866.7 460.7L859 464.1L851.5 467.8L844.1 471.8L836.9 476L829.8 480.5L822.9 485.2L816.3 490.5L810.3 496.3L805 502.8L800.3 509.6L796 516.8L791.9 524.1L788.6 531.8L786.5 539.7L786 547.7L786.3 555.5M1086 508.7L1080.2 503.3L1074 498.4L1067.6 493.6L1061.2 489L1054.5 484.7L1047.7 480.6L1040.9 476.5L1033.9 472.8L1026.7 469.5L1019.3 466.5L1011.8 463.9L1004.3 461.4L996.6 459.1L989 456.9L981.4 454.7L973.8 452.6L965.9 451.4L958 451.3L950 451.6L942.1 452L934.2 452.6L926.3 453.2L918.4 453.9L910.5 454.8L902.7 456.2L895 458.2L887.4 460.3L879.8 462.7L872.3 465.3L864.9 468.3L857.8 471.7L850.8 475.6L844.1 479.8L837.6 484.3L831.2 488.9L825 493.8L819 499.1L813.4 504.7L808.2 510.7L803.3 516.9L799 523.5L795.8 530.7L792.7 538L790.1 545.2L788.2 552.3L786.4 559.4M1075.2 510.5L1069.2 506.1L1063 501.8L1056.7 497.7L1050.3 493.8L1043.8 490L1037.4 486.2L1030.9 482.4L1024.2 479L1017.2 476.3L1010.1 473.9L1003 471.7L995.8 469.5L988.6 467.5L981.4 465.3L974.1 463.4L966.7 462.2L959.3 461.7L951.8 461.6L944.3 461.8L936.8 462.2L929.3 462.5L921.8 462.8L914.3 463.1L906.8 463.7L899.4 464.9L892.1 466.5L884.8 468.3L877.6 470.3L870.5 472.8L863.7 475.8L857.1 479.4L850.8 483.5L844.8 487.9L838.9 492.6L833.2 497.5L827.5 502.4L822 507.4L816.5 512.6L811.2 517.8L806.1 523.4L802.5 529.9L800 537L796.2 543.4L792.3 549.8L788.4 556.2M1102 500L1091.3 501.2L1096.2 493.4L1085 495.6L1089.7 487.3L1078.7 490.2L1083.2 481.4L1072.1 484.9L1076.5 475.6L1065.4 479.9L1069.4 470.3L1058.4 475.3L1062 465.5L1051.2 470.9L1054.3 461.1L1043.9 466.8L1046.5 457L1036.4 463.1L1038.5 453.2L1028.7 459.6L1030.5 449.5L1021 456.5L1022.3 446.1L1013.1 453.6L1014 443.1L1005.1 451L1005.6 440.3L997.1 448.5L997.1 437.8L989 446.2L988.6 435.5L981 443.8L980.3 432.3L973 441.5L971.7 430.6L964.6 441L962.8 430.8L956.2 441.3L954 431.4L947.8 441.7L945.2 432.1L939.5 442.4L936.4 433L931.1 443.3L927.7 434.3L922.8 444.3L919 435.9L914.5 445.6L910.3 437.9L906.3 447.2L901.8 440.3L898.2 449.4L893.5 443.1L890.3 451.9L885.2 446.2L882.3 454.7L877 449.5L874.5 457.6L868.8 452.9L866.7 460.7L860.7 456.5L859 464.1L852.7 460.2L851.5 467.8L844.7 464L844.1 471.8L836.8 468L836.9 476L829.1 472.2L829.8 480.5L821.5 476.7L822.9 485.2L814.2 481.7L816.3 490.5L807.5 487.5L810.3 496.3L801.8 494.2L805 502.8L797 501.7L800.3 509.6L792.9 509.5L796 516.8L788.9 517.4L791.9 524.1L784.6 525.1L788.6 531.8L781.9 533.5L786.5 539.7L781.9 542.3L786 547.7L784 550.9L786.3 555.5L786.4 559.4M1086 508.7L1091.3 501.2L1080.2 503.3L1085 495.6L1074 498.4L1078.7 490.2L1067.6 493.6L1072.1 484.9L1061.2 489L1065.4 479.9L1054.5 484.7L1058.4 475.3L1047.7 480.6L1051.2 470.9L1040.9 476.5L1043.9 466.8L1033.9 472.8L1036.4 463.1L1026.7 469.5L1028.7 459.6L1019.3 466.5L1021 456.5L1011.8 463.9L1013.1 453.6L1004.3 461.4L1005.1 451L996.6 459.1L997.1 448.5L989 456.9L989 446.2L981.4 454.7L981 443.8L973.8 452.6L973 441.5L965.9 451.4L964.6 441L958 451.3L956.2 441.3L950 451.6L947.8 441.7L942.1 452L939.5 442.4L934.2 452.6L931.1 443.3L926.3 453.2L922.8 444.3L918.4 453.9L914.5 445.6L910.5 454.8L906.3 447.2L902.7 456.2L898.2 449.4L895 458.2L890.3 451.9L887.4 460.3L882.3 454.7L879.8 462.7L874.5 457.6L872.3 465.3L866.7 460.7L864.9 468.3L859 464.1L857.8 471.7L851.5 467.8L850.8 475.6L844.1 471.8L844.1 479.8L836.9 476L837.6 484.3L829.8 480.5L831.2 488.9L822.9 485.2L825 493.8L816.3 490.5L819 499.1L810.3 496.3L813.4 504.7L805 502.8L808.2 510.7L800.3 509.6L803.3 516.9L796 516.8L799 523.5L791.9 524.1L795.8 530.7L788.6 531.8L792.7 538L786.5 539.7L790.1 545.2L786 547.7L788.2 552.3L786.3 555.5L786.4 559.4M1086 508.7L1075.2 510.5L1080.2 503.3L1069.2 506.1L1074 498.4L1063 501.8L1067.6 493.6L1056.7 497.7L1061.2 489L1050.3 493.8L1054.5 484.7L1043.8 490L1047.7 480.6L1037.4 486.2L1040.9 476.5L1030.9 482.4L1033.9 472.8L1024.2 479L1026.7 469.5L1017.2 476.3L1019.3 466.5L1010.1 473.9L1011.8 463.9L1003 471.7L1004.3 461.4L995.8 469.5L996.6 459.1L988.6 467.5L989 456.9L981.4 465.3L981.4 454.7L974.1 463.4L973.8 452.6L966.7 462.2L965.9 451.4L959.3 461.7L958 451.3L951.8 461.6L950 451.6L944.3 461.8L942.1 452L936.8 462.2L934.2 452.6L929.3 462.5L926.3 453.2L921.8 462.8L918.4 453.9L914.3 463.1L910.5 454.8L906.8 463.7L902.7 456.2L899.4 464.9L895 458.2L892.1 466.5L887.4 460.3L884.8 468.3L879.8 462.7L877.6 470.3L872.3 465.3L870.5 472.8L864.9 468.3L863.7 475.8L857.8 471.7L857.1 479.4L850.8 475.6L850.8 483.5L844.1 479.8L844.8 487.9L837.6 484.3L838.9 492.6L831.2 488.9L833.2 497.5L825 493.8L827.5 502.4L819 499.1L822 507.4L813.4 504.7L816.5 512.6L808.2 510.7L811.2 517.8L803.3 516.9L806.1 523.4L799 523.5L802.5 529.9L795.8 530.7L800 537L792.7 538L796.2 543.4L790.1 545.2L792.3 549.8L788.2 552.3L788.4 556.2L786.4 559.4M1078 513L1070.1 506.7L1061.7 500.9L1053.1 495.5L1044.4 490.4L1035.7 485.2L1026.8 480.3L1017.5 476.4L1007.8 473.1L998.1 470.2L988.4 467.4L978.6 464.5L968.7 462.4L958.6 461.7L948.5 461.7L938.3 462.1L928.2 462.6L918.1 462.9L907.9 463.6L897.9 465.2L888 467.5L878.2 470.1L868.7 473.5L859.5 477.9L851 483.3L842.9 489.4L835 495.9L827.4 502.5L819.9 509.4L812.6 516.4L805.8 523.9L801.5 533L797 542.1L791.7 550.8L786.4 559.4M1065.6 513.4L1057.6 508L1049.4 502.8L1041.1 498L1032.6 493.3L1024.1 488.6L1015.3 484.6L1006.2 481.4L996.9 478.7L987.5 476.2L978.2 473.7L968.8 471.5L959.2 470.3L949.5 470.2L939.8 470.7L930.2 471.3L920.5 471.9L910.9 472.5L901.3 473.7L891.8 475.8L882.4 478.1L873.1 480.9L864.1 484.5L855.5 488.9L847.4 494.1L839.6 499.8L832 505.7L824.5 511.7L817 517.7L809.8 523.9L803.6 530.9L799.2 539L793.8 546.9L788.9 555.3M1060.8 519.8L1053.2 514.6L1045.4 509.8L1037.4 505.2L1029.2 500.9L1021 496.7L1012.7 492.8L1004.1 489.5L995.3 486.8L986.3 484.6L977.4 482.5L968.4 480.5L959.3 479L950.1 478.7L940.9 479.1L931.7 479.8L922.5 480.7L913.3 481.4L904.2 482.5L895.1 484.1L886.1 486.3L877.2 488.7L868.4 491.6L860 495.2L851.9 499.5L844.1 504.4L836.5 509.5L829 514.7L821.6 520L814.2 525.1L807.1 530.5L801.5 536.9L796 543.7L790.9 551.4L786.4 559.4M1048.6 520.8L1041 516.4L1033.4 512.1L1025.6 508.1L1017.7 504.4L1009.7 500.7L1001.6 497.5L993.2 494.8L984.7 492.7L976.2 490.9L967.6 489.2L959 487.8L950.2 487.1L941.5 487.5L932.7 488.3L924 489.2L915.3 490.2L906.6 491.2L898 492.7L889.4 494.6L880.9 496.8L872.5 499.2L864.2 502.2L856.2 505.6L848.5 509.7L841 514.1L833.5 518.6L826.2 523.1L818.7 527.4L811.3 531.6L804.4 536.2L798.6 541.6L792.7 547.9L788.5 555.6M1043.6 526.6L1036.4 522.5L1029 518.7L1021.6 514.9L1014 511.5L1006.4 508.3L998.7 505.3L990.8 502.6L982.7 500.5L974.6 498.9L966.4 497.6L958.2 496.4L949.9 495.6L941.6 495.8L933.3 496.6L925.1 497.6L916.8 498.7L908.6 499.9L900.4 501.3L892.3 503.1L884.2 505L876.2 507.2L868.2 509.7L860.4 512.5L852.8 515.7L845.3 519.3L838 523.1L830.7 526.9L823.3 530.6L815.8 533.9L808.4 537.1L801.6 540.8L795 545.4L790.1 552L786.4 559.4M1031.5 528.2L1024.4 524.8L1017.3 521.4L1010.1 518.2L1002.8 515.4L995.4 512.8L987.9 510.3L980.3 508.2L972.6 506.7L964.8 505.5L957 504.7L949.1 504.1L941.3 504L933.4 504.8L925.6 505.9L917.9 507.1L910.1 508.5L902.4 510L894.7 511.6L887.1 513.5L879.4 515.4L871.9 517.6L864.3 519.9L856.9 522.4L849.6 525.3L842.3 528.4L835.1 531.5L827.8 534.5L820.4 537.1L812.9 539.3L805.3 541.5L797.9 544.3L791.7 548.9L788.2 555.9M1078 513L1065.6 513.4L1070.1 506.7L1057.6 508L1061.7 500.9L1049.4 502.8L1053.1 495.5L1041.1 498L1044.4 490.4L1032.6 493.3L1035.7 485.2L1024.1 488.6L1026.8 480.3L1015.3 484.6L1017.5 476.4L1006.2 481.4L1007.8 473.1L996.9 478.7L998.1 470.2L987.5 476.2L988.4 467.4L978.2 473.7L978.6 464.5L968.8 471.5L968.7 462.4L959.2 470.3L958.6 461.7L949.5 470.2L948.5 461.7L939.8 470.7L938.3 462.1L930.2 471.3L928.2 462.6L920.5 471.9L918.1 462.9L910.9 472.5L907.9 463.6L901.3 473.7L897.9 465.2L891.8 475.8L888 467.5L882.4 478.1L878.2 470.1L873.1 480.9L868.7 473.5L864.1 484.5L859.5 477.9L855.5 488.9L851 483.3L847.4 494.1L842.9 489.4L839.6 499.8L835 495.9L832 505.7L827.4 502.5L824.5 511.7L819.9 509.4L817 517.7L812.6 516.4L809.8 523.9L805.8 523.9L803.6 530.9L801.5 533L799.2 539L797 542.1L793.8 546.9L791.7 550.8L788.9 555.3L786.4 559.4M1060.8 519.8L1065.6 513.4L1053.2 514.6L1057.6 508L1045.4 509.8L1049.4 502.8L1037.4 505.2L1041.1 498L1029.2 500.9L1032.6 493.3L1021 496.7L1024.1 488.6L1012.7 492.8L1015.3 484.6L1004.1 489.5L1006.2 481.4L995.3 486.8L996.9 478.7L986.3 484.6L987.5 476.2L977.4 482.5L978.2 473.7L968.4 480.5L968.8 471.5L959.3 479L959.2 470.3L950.1 478.7L949.5 470.2L940.9 479.1L939.8 470.7L931.7 479.8L930.2 471.3L922.5 480.7L920.5 471.9L913.3 481.4L910.9 472.5L904.2 482.5L901.3 473.7L895.1 484.1L891.8 475.8L886.1 486.3L882.4 478.1L877.2 488.7L873.1 480.9L868.4 491.6L864.1 484.5L860 495.2L855.5 488.9L851.9 499.5L847.4 494.1L844.1 504.4L839.6 499.8L836.5 509.5L832 505.7L829 514.7L824.5 511.7L821.6 520L817 517.7L814.2 525.1L809.8 523.9L807.1 530.5L803.6 530.9L801.5 536.9L799.2 539L796 543.7L793.8 546.9L790.9 551.4L788.9 555.3L786.4 559.4M1060.8 519.8L1048.6 520.8L1053.2 514.6L1041 516.4L1045.4 509.8L1033.4 512.1L1037.4 505.2L1025.6 508.1L1029.2 500.9L1017.7 504.4L1021 496.7L1009.7 500.7L1012.7 492.8L1001.6 497.5L1004.1 489.5L993.2 494.8L995.3 486.8L984.7 492.7L986.3 484.6L976.2 490.9L977.4 482.5L967.6 489.2L968.4 480.5L959 487.8L959.3 479L950.2 487.1L950.1 478.7L941.5 487.5L940.9 479.1L932.7 488.3L931.7 479.8L924 489.2L922.5 480.7L915.3 490.2L913.3 481.4L906.6 491.2L904.2 482.5L898 492.7L895.1 484.1L889.4 494.6L886.1 486.3L880.9 496.8L877.2 488.7L872.5 499.2L868.4 491.6L864.2 502.2L860 495.2L856.2 505.6L851.9 499.5L848.5 509.7L844.1 504.4L841 514.1L836.5 509.5L833.5 518.6L829 514.7L826.2 523.1L821.6 520L818.7 527.4L814.2 525.1L811.3 531.6L807.1 530.5L804.4 536.2L801.5 536.9L798.6 541.6L796 543.7L792.7 547.9L790.9 551.4L788.5 555.6L786.4 559.4M1043.6 526.6L1048.6 520.8L1036.4 522.5L1041 516.4L1029 518.7L1033.4 512.1L1021.6 514.9L1025.6 508.1L1014 511.5L1017.7 504.4L1006.4 508.3L1009.7 500.7L998.7 505.3L1001.6 497.5L990.8 502.6L993.2 494.8L982.7 500.5L984.7 492.7L974.6 498.9L976.2 490.9L966.4 497.6L967.6 489.2L958.2 496.4L959 487.8L949.9 495.6L950.2 487.1L941.6 495.8L941.5 487.5L933.3 496.6L932.7 488.3L925.1 497.6L924 489.2L916.8 498.7L915.3 490.2L908.6 499.9L906.6 491.2L900.4 501.3L898 492.7L892.3 503.1L889.4 494.6L884.2 505L880.9 496.8L876.2 507.2L872.5 499.2L868.2 509.7L864.2 502.2L860.4 512.5L856.2 505.6L852.8 515.7L848.5 509.7L845.3 519.3L841 514.1L838 523.1L833.5 518.6L830.7 526.9L826.2 523.1L823.3 530.6L818.7 527.4L815.8 533.9L811.3 531.6L808.4 537.1L804.4 536.2L801.6 540.8L798.6 541.6L795 545.4L792.7 547.9L790.1 552L788.5 555.6L786.4 559.4M1043.6 526.6L1031.5 528.2L1036.4 522.5L1024.4 524.8L1029 518.7L1017.3 521.4L1021.6 514.9L1010.1 518.2L1014 511.5L1002.8 515.4L1006.4 508.3L995.4 512.8L998.7 505.3L987.9 510.3L990.8 502.6L980.3 508.2L982.7 500.5L972.6 506.7L974.6 498.9L964.8 505.5L966.4 497.6L957 504.7L958.2 496.4L949.1 504.1L949.9 495.6L941.3 504L941.6 495.8L933.4 504.8L933.3 496.6L925.6 505.9L925.1 497.6L917.9 507.1L916.8 498.7L910.1 508.5L908.6 499.9L902.4 510L900.4 501.3L894.7 511.6L892.3 503.1L887.1 513.5L884.2 505L879.4 515.4L876.2 507.2L871.9 517.6L868.2 509.7L864.3 519.9L860.4 512.5L856.9 522.4L852.8 515.7L849.6 525.3L845.3 519.3L842.3 528.4L838 523.1L835.1 531.5L830.7 526.9L827.8 534.5L823.3 530.6L820.4 537.1L815.8 533.9L812.9 539.3L808.4 537.1L805.3 541.5L801.6 540.8L797.9 544.3L795 545.4L791.7 548.9L790.1 552L788.2 555.9L786.4 559.4" stroke="#000" stroke-width="1" fill="none"/><path d="M1190 472C1184.6 462.2 1179.3 452.9 1173.8 442.6C1168.2 432.4 1163.8 420.8 1156.7 410.5C1149.6 400.2 1142.4 390.6 1131 380.6C1119.6 370.6 1102.5 358.5 1088.3 350.6C1074 342.8 1059.8 337.9 1045.5 333.5C1031.2 329.1 1016.2 326.7 1002.8 324.5C989.4 322.3 982.2 320 965 320.4C947.8 320.8 918.8 323.1 899.6 326.6C880.4 330.1 863.6 335.2 849.8 341.6C835.9 348 826.2 356.3 816.5 364.9C806.8 373.5 800 380.6 791.6 393.1C783.2 405.6 771.4 425.5 766.4 440C761.4 454.5 762.2 469.2 761.6 480C761 490.8 760.9 495.4 763 505C765.1 514.6 770.3 526.7 774 537.5" stroke="#000" stroke-width="1.1" fill="none"/><path d="M1035 530C1031.5 528.3 1029.4 527.1 1024.6 524.9C1019.8 522.7 1013.9 519.5 1006.3 516.7C998.7 513.9 988 510 978.9 507.9C969.8 505.8 959 504.8 951.4 504.3C943.8 503.8 942.3 503.7 933.2 504.8C924.1 505.9 908.8 508.4 896.6 511.2C884.4 513.9 871.7 517.3 860 521.3C848.3 525.3 837 531.1 826.3 535.1C815.6 539.1 802.2 541.5 795.6 545.5C789 549.5 789.5 554.8 786.4 559.4L800 577L824 604L1100 560Z" fill="#5c5c5c"/><path d="M600 690.7L1400 378.5L1400 707L600 707Z" fill="#fff"/><path d="M379.2 780.9L431.3 760.6M379.2 780.9L419 817M419 817L468.4 790.3M419 817L464.8 840.8M419 817L414.7 861.5M414.7 861.5L464.8 840.8M414.7 861.5L453 894.9M453 894.9L504.9 876.3M453 894.9L494.9 923.7M453 894.9L446.8 945.3M446.8 945.3L494.9 923.7M446.8 945.3L485 979.4M485 979.4L543.4 953.8M485 979.4L533.9 1006.1M485 979.4L473.7 1030.5M473.7 1030.5L533.9 1006.1M473.7 1030.5L522.2 1062.9M522.2 1062.9L572.1 1043M431.3 760.6L483.5 740.2M431.3 760.6L468.4 790.3M431.3 760.6L419 817M468.4 790.3L524.8 773.3M468.4 790.3L520.7 821.5M468.4 790.3L464.8 840.8M464.8 840.8L520.7 821.5M464.8 840.8L504.9 876.3M464.8 840.8L453 894.9M504.9 876.3L553.2 851.6M504.9 876.3L553.2 908.3M504.9 876.3L494.9 923.7M494.9 923.7L553.2 908.3M494.9 923.7L543.4 953.8M494.9 923.7L485 979.4M543.4 953.8L594.1 937.4M543.4 953.8L579.1 992.9M543.4 953.8L533.9 1006.1M533.9 1006.1L579.1 992.9M533.9 1006.1L572.1 1043M533.9 1006.1L522.2 1062.9M572.1 1043L624.4 1027.1M483.5 740.2L535.7 719.8M483.5 740.2L524.8 773.3M483.5 740.2L468.4 790.3M524.8 773.3L574 749.5M524.8 773.3L570.5 808.2M524.8 773.3L520.7 821.5M520.7 821.5L570.5 808.2M520.7 821.5L553.2 851.6M520.7 821.5L504.9 876.3M553.2 851.6L610.2 838.3M553.2 851.6L596.1 888.4M553.2 851.6L553.2 908.3M553.2 908.3L596.1 888.4M553.2 908.3L594.1 937.4M553.2 908.3L543.4 953.8M594.1 937.4L641.1 920.6M594.1 937.4L631 966.5M594.1 937.4L579.1 992.9M579.1 992.9L631 966.5M579.1 992.9L624.4 1027.1M579.1 992.9L572.1 1043M624.4 1027.1L673 1004.5M535.7 719.8L587.8 699.5M535.7 719.8L574 749.5M535.7 719.8L524.8 773.3M574 749.5L632.8 736M574 749.5L619.4 777.7M574 749.5L570.5 808.2M570.5 808.2L619.4 777.7M570.5 808.2L610.2 838.3M570.5 808.2L553.2 851.6M610.2 838.3L666.5 811.6M610.2 838.3L655.6 866.3M610.2 838.3L596.1 888.4M596.1 888.4L655.6 866.3M596.1 888.4L641.1 920.6M596.1 888.4L594.1 937.4M641.1 920.6L694.7 892.3M641.1 920.6L682.3 952.8M641.1 920.6L631 966.5M631 966.5L682.3 952.8M631 966.5L673 1004.5M631 966.5L624.4 1027.1M673 1004.5L727.5 986M587.8 699.5L640 679.1M587.8 699.5L632.8 736M587.8 699.5L574 749.5M632.8 736L686.1 711.1M632.8 736L678.4 756.6M632.8 736L619.4 777.7M619.4 777.7L678.4 756.6M619.4 777.7L666.5 811.6M619.4 777.7L610.2 838.3M666.5 811.6L713.8 794.5M666.5 811.6L699.8 850.5M666.5 811.6L655.6 866.3M655.6 866.3L699.8 850.5M655.6 866.3L694.7 892.3M655.6 866.3L641.1 920.6M694.7 892.3L743.3 878.6M694.7 892.3L735 928.1M694.7 892.3L682.3 952.8M682.3 952.8L735 928.1M682.3 952.8L727.5 986M682.3 952.8L673 1004.5M727.5 986L779.7 958.5M640 679.1L692.2 658.7M640 679.1L686.1 711.1M640 679.1L632.8 736M686.1 711.1L730.6 692.3M686.1 711.1L726.3 737.2M686.1 711.1L678.4 756.6M678.4 756.6L726.3 737.2M678.4 756.6L713.8 794.5M678.4 756.6L666.5 811.6M713.8 794.5L772.8 769M713.8 794.5L754 823.1M713.8 794.5L699.8 850.5M699.8 850.5L754 823.1M699.8 850.5L743.3 878.6M699.8 850.5L694.7 892.3M743.3 878.6L798.1 857.1M743.3 878.6L794.7 904.4M743.3 878.6L735 928.1M735 928.1L794.7 904.4M735 928.1L779.7 958.5M735 928.1L727.5 986M779.7 958.5L833.2 942.2M692.2 658.7L744.3 638.4M692.2 658.7L730.6 692.3M692.2 658.7L686.1 711.1M730.6 692.3L783.8 668.2M730.6 692.3L776.3 726.5M730.6 692.3L726.3 737.2M726.3 737.2L776.3 726.5M726.3 737.2L772.8 769M726.3 737.2L713.8 794.5M772.8 769L822.6 753.2M772.8 769L804.3 803.6M772.8 769L754 823.1M754 823.1L804.3 803.6M754 823.1L798.1 857.1M754 823.1L743.3 878.6M798.1 857.1L855.7 836.1M798.1 857.1L840.8 890.5M798.1 857.1L794.7 904.4M794.7 904.4L840.8 890.5M794.7 904.4L833.2 942.2M794.7 904.4L779.7 958.5M833.2 942.2L878.9 922.1M744.3 638.4L796.5 618M744.3 638.4L783.8 668.2M744.3 638.4L730.6 692.3M783.8 668.2L841.1 644.9M783.8 668.2L828.1 705.8M783.8 668.2L776.3 726.5M776.3 726.5L828.1 705.8M776.3 726.5L822.6 753.2M776.3 726.5L772.8 769M822.6 753.2L868.6 733.4M822.6 753.2L859.8 785.6M822.6 753.2L804.3 803.6M804.3 803.6L859.8 785.6M804.3 803.6L855.7 836.1M804.3 803.6L798.1 857.1M855.7 836.1L902.7 814.6M855.7 836.1L899.3 870.7M855.7 836.1L840.8 890.5M840.8 890.5L899.3 870.7M840.8 890.5L878.9 922.1M840.8 890.5L833.2 942.2M878.9 922.1L942.6 898M796.5 618L848.7 597.7M796.5 618L841.1 644.9M796.5 618L783.8 668.2M841.1 644.9L890.6 627.6M841.1 644.9L885.6 679.5M841.1 644.9L828.1 705.8M828.1 705.8L885.6 679.5M828.1 705.8L868.6 733.4M828.1 705.8L822.6 753.2M868.6 733.4L925.8 708.8M868.6 733.4L914.3 761.8M868.6 733.4L859.8 785.6M859.8 785.6L914.3 761.8M859.8 785.6L902.7 814.6M859.8 785.6L855.7 836.1M902.7 814.6L961.2 794.6M902.7 814.6L951.8 848.9M902.7 814.6L899.3 870.7M899.3 870.7L951.8 848.9M899.3 870.7L942.6 898M899.3 870.7L878.9 922.1M942.6 898L986.9 880.2M848.7 597.7L900.8 577.3M848.7 597.7L890.6 627.6M848.7 597.7L841.1 644.9M890.6 627.6L948.4 611.2M890.6 627.6L937.3 661.6M890.6 627.6L885.6 679.5M885.6 679.5L937.3 661.6M885.6 679.5L925.8 708.8M885.6 679.5L868.6 733.4M925.8 708.8L977.2 688M925.8 708.8L970 745.9M925.8 708.8L914.3 761.8M914.3 761.8L970 745.9M914.3 761.8L961.2 794.6M914.3 761.8L902.7 814.6M961.2 794.6L1010.1 773.4M961.2 794.6L1001.7 828M961.2 794.6L951.8 848.9M951.8 848.9L1001.7 828M951.8 848.9L986.9 880.2M951.8 848.9L942.6 898M986.9 880.2L1038.8 865.2M900.8 577.3L953 556.9M900.8 577.3L948.4 611.2M900.8 577.3L890.6 627.6M948.4 611.2L998.6 590.6M948.4 611.2L989.7 642.8M948.4 611.2L937.3 661.6M937.3 661.6L989.7 642.8M937.3 661.6L977.2 688M937.3 661.6L925.8 708.8M977.2 688L1026.6 677.4M977.2 688L1023 725.9M977.2 688L970 745.9M970 745.9L1023 725.9M970 745.9L1010.1 773.4M970 745.9L961.2 794.6M1010.1 773.4L1059.7 755.4M1010.1 773.4L1045.3 812M1010.1 773.4L1001.7 828M1001.7 828L1045.3 812M1001.7 828L1038.8 865.2M1001.7 828L986.9 880.2M1038.8 865.2L1097.1 840M953 556.9L1005.2 536.6M953 556.9L998.6 590.6M953 556.9L948.4 611.2M998.6 590.6L1047.1 571.8M998.6 590.6L1032 618.9M998.6 590.6L989.7 642.8M989.7 642.8L1032 618.9M989.7 642.8L1026.6 677.4M989.7 642.8L977.2 688M1026.6 677.4L1077.1 652.9M1026.6 677.4L1068.6 704.8M1026.6 677.4L1023 725.9M1023 725.9L1068.6 704.8M1023 725.9L1059.7 755.4M1023 725.9L1010.1 773.4M1059.7 755.4L1117.5 734M1059.7 755.4L1098.3 781.1M1059.7 755.4L1045.3 812M1045.3 812L1098.3 781.1M1045.3 812L1097.1 840M1045.3 812L1038.8 865.2M1097.1 840L1149.3 818.2M1005.2 536.6L1057.3 516.2M1005.2 536.6L1047.1 571.8M1005.2 536.6L998.6 590.6M1047.1 571.8L1099 542.1M1047.1 571.8L1085.2 593.7M1047.1 571.8L1032 618.9M1032 618.9L1085.2 593.7M1032 618.9L1077.1 652.9M1032 618.9L1026.6 677.4M1077.1 652.9L1137 625.8M1077.1 652.9L1120.4 682.8M1077.1 652.9L1068.6 704.8M1068.6 704.8L1120.4 682.8M1068.6 704.8L1117.5 734M1068.6 704.8L1059.7 755.4M1117.5 734L1165.7 711.4M1117.5 734L1156.8 768.3M1117.5 734L1098.3 781.1M1098.3 781.1L1156.8 768.3M1098.3 781.1L1149.3 818.2M1098.3 781.1L1097.1 840M1149.3 818.2L1203.3 793.3M1057.3 516.2L1109.5 495.9M1057.3 516.2L1099 542.1M1057.3 516.2L1047.1 571.8M1099 542.1L1149.4 522.6M1099 542.1L1139.6 575.9M1099 542.1L1085.2 593.7M1085.2 593.7L1139.6 575.9M1085.2 593.7L1137 625.8M1085.2 593.7L1077.1 652.9M1137 625.8L1178.8 614.6M1137 625.8L1172 665.7M1137 625.8L1120.4 682.8M1120.4 682.8L1172 665.7M1120.4 682.8L1165.7 711.4M1120.4 682.8L1117.5 734M1165.7 711.4L1220.8 697.9M1165.7 711.4L1201.5 747.3M1165.7 711.4L1156.8 768.3M1156.8 768.3L1201.5 747.3M1156.8 768.3L1203.3 793.3M1156.8 768.3L1149.3 818.2M1203.3 793.3L1253.8 779.4M1109.5 495.9L1161.7 475.5M1109.5 495.9L1149.4 522.6M1109.5 495.9L1099 542.1M1149.4 522.6L1205.3 506.2M1149.4 522.6L1198.1 559.4M1149.4 522.6L1139.6 575.9M1139.6 575.9L1198.1 559.4M1139.6 575.9L1178.8 614.6M1139.6 575.9L1137 625.8M1178.8 614.6L1234.8 590.5M1178.8 614.6L1226.5 638.7M1178.8 614.6L1172 665.7M1172 665.7L1226.5 638.7M1172 665.7L1220.8 697.9M1172 665.7L1165.7 711.4M1220.8 697.9L1271.3 678M1220.8 697.9L1261.3 720M1220.8 697.9L1201.5 747.3M1201.5 747.3L1261.3 720M1201.5 747.3L1253.8 779.4M1201.5 747.3L1203.3 793.3M1253.8 779.4L1300.6 760.7M1161.7 475.5L1213.8 455.1M1161.7 475.5L1205.3 506.2M1161.7 475.5L1149.4 522.6M1205.3 506.2L1251.8 486.8M1205.3 506.2L1248.6 539M1205.3 506.2L1198.1 559.4M1198.1 559.4L1248.6 539M1198.1 559.4L1234.8 590.5M1198.1 559.4L1178.8 614.6M1234.8 590.5L1286.8 564.4M1234.8 590.5L1281.4 618.1M1234.8 590.5L1226.5 638.7M1226.5 638.7L1281.4 618.1M1226.5 638.7L1271.3 678M1226.5 638.7L1220.8 697.9M1271.3 678L1322.6 653.9M1271.3 678L1314.2 700.9M1271.3 678L1261.3 720M1261.3 720L1314.2 700.9M1261.3 720L1300.6 760.7M1261.3 720L1253.8 779.4M1300.6 760.7L1359.6 740.1M1213.8 455.1L1266 434.8M1213.8 455.1L1251.8 486.8M1213.8 455.1L1205.3 506.2M1251.8 486.8L1312.9 462.5M1251.8 486.8L1301.2 516.8M1251.8 486.8L1248.6 539M1248.6 539L1301.2 516.8M1248.6 539L1286.8 564.4M1248.6 539L1234.8 590.5M1286.8 564.4L1343.4 552.2M1286.8 564.4L1330.1 607.1M1286.8 564.4L1281.4 618.1M1281.4 618.1L1330.1 607.1M1281.4 618.1L1322.6 653.9M1281.4 618.1L1271.3 678M1322.6 653.9L1372.8 632.9M1322.6 653.9L1366.3 681M1322.6 653.9L1314.2 700.9M1314.2 700.9L1366.3 681M1314.2 700.9L1359.6 740.1M1314.2 700.9L1300.6 760.7M1359.6 740.1L1410.9 714.7M1266 434.8L1318.2 414.4M1266 434.8L1312.9 462.5M1266 434.8L1251.8 486.8M1312.9 462.5L1365.2 441.7M1312.9 462.5L1346.2 499M1312.9 462.5L1301.2 516.8M1301.2 516.8L1346.2 499M1301.2 516.8L1343.4 552.2M1301.2 516.8L1286.8 564.4M1343.4 552.2L1390 528.7M1343.4 552.2L1379.7 584M1343.4 552.2L1330.1 607.1M1330.1 607.1L1379.7 584M1330.1 607.1L1372.8 632.9M1330.1 607.1L1322.6 653.9M1372.8 632.9L1428.6 615.1M1372.8 632.9L1411.5 659.4M1372.8 632.9L1366.3 681M1366.3 681L1411.5 659.4M1366.3 681L1410.9 714.7M1366.3 681L1359.6 740.1M1410.9 714.7L1459.3 691.4M1318.2 414.4L1370.3 394.1M1318.2 414.4L1365.2 441.7M1318.2 414.4L1312.9 462.5M1365.2 441.7L1415.3 426.2M1365.2 441.7L1408.1 481.3M1365.2 441.7L1346.2 499M1346.2 499L1408.1 481.3M1346.2 499L1390 528.7M1346.2 499L1343.4 552.2M1390 528.7L1447.2 513M1390 528.7L1435.6 558.5M1390 528.7L1379.7 584M1379.7 584L1435.6 558.5M1379.7 584L1428.6 615.1M1379.7 584L1372.8 632.9M1428.6 615.1L1472.6 595M1428.6 615.1L1470.1 646M1428.6 615.1L1411.5 659.4M1411.5 659.4L1470.1 646M1411.5 659.4L1459.3 691.4M1411.5 659.4L1410.9 714.7M1459.3 691.4L1510.6 675.5M1370.3 394.1L1422.5 373.7M1370.3 394.1L1415.3 426.2M1370.3 394.1L1365.2 441.7M1415.3 426.2L1469.9 403.8M1415.3 426.2L1450.8 462.6M1415.3 426.2L1408.1 481.3M1408.1 481.3L1450.8 462.6M1408.1 481.3L1447.2 513M1408.1 481.3L1390 528.7M1447.2 513L1500.6 493.5M1447.2 513L1493.5 539.9M1447.2 513L1435.6 558.5M1435.6 558.5L1493.5 539.9M1435.6 558.5L1472.6 595M1435.6 558.5L1428.6 615.1M1472.6 595L1525.9 572.1M1472.6 595L1520.1 622.7M1472.6 595L1470.1 646M1470.1 646L1520.1 622.7M1470.1 646L1510.6 675.5M1470.1 646L1459.3 691.4M1510.6 675.5L1566 652.7M1422.5 373.7L1474.7 353.3M1422.5 373.7L1469.9 403.8M1422.5 373.7L1415.3 426.2M1469.9 403.8L1522.7 381.4M1469.9 403.8L1504.7 440.8M1469.9 403.8L1450.8 462.6M1450.8 462.6L1504.7 440.8M1450.8 462.6L1500.6 493.5M1450.8 462.6L1447.2 513M1500.6 493.5L1546.4 471.1M1500.6 493.5L1537.1 519.2M1500.6 493.5L1493.5 539.9M1493.5 539.9L1537.1 519.2M1493.5 539.9L1525.9 572.1M1493.5 539.9L1472.6 595M1525.9 572.1L1581.8 548.8M1525.9 572.1L1576.3 609M1525.9 572.1L1520.1 622.7M1520.1 622.7L1576.3 609M1520.1 622.7L1566 652.7M1520.1 622.7L1510.6 675.5M1566 652.7L1619.9 631.2M1474.7 353.3L1526.8 333M1474.7 353.3L1522.7 381.4M1474.7 353.3L1469.9 403.8M1522.7 381.4L1563.5 363.8M1522.7 381.4L1562.3 417M1522.7 381.4L1504.7 440.8M1504.7 440.8L1562.3 417M1504.7 440.8L1546.4 471.1M1504.7 440.8L1500.6 493.5M1546.4 471.1L1607.3 453.8M1546.4 471.1L1594.2 497M1546.4 471.1L1537.1 519.2M1537.1 519.2L1594.2 497M1537.1 519.2L1581.8 548.8M1537.1 519.2L1525.9 572.1M1581.8 548.8L1633.2 526.2M1581.8 548.8L1623.3 586.4M1581.8 548.8L1576.3 609M1576.3 609L1623.3 586.4M1576.3 609L1619.9 631.2M1576.3 609L1566 652.7M1619.9 631.2L1664.7 611.2M1526.8 333L1579 312.6M1526.8 333L1563.5 363.8M1526.8 333L1522.7 381.4M1563.5 363.8L1621.8 348.9M1563.5 363.8L1613.3 391.4M1563.5 363.8L1562.3 417M1562.3 417L1613.3 391.4M1562.3 417L1607.3 453.8M1562.3 417L1546.4 471.1M1607.3 453.8L1653.1 424.4M1607.3 453.8L1647.9 478.6M1607.3 453.8L1594.2 497M1594.2 497L1647.9 478.6M1594.2 497L1633.2 526.2M1594.2 497L1581.8 548.8M1633.2 526.2L1685.9 515.6M1633.2 526.2L1674.3 562.4M1633.2 526.2L1623.3 586.4M1623.3 586.4L1674.3 562.4M1623.3 586.4L1664.7 611.2M1623.3 586.4L1619.9 631.2M1664.7 611.2L1724.9 592.2M1579 312.6L1631.2 292.3M1579 312.6L1621.8 348.9M1579 312.6L1563.5 363.8M1621.8 348.9L1674 325.6M1621.8 348.9L1661.8 377.3M1621.8 348.9L1613.3 391.4M1613.3 391.4L1661.8 377.3M1613.3 391.4L1653.1 424.4M1613.3 391.4L1607.3 453.8M1653.1 424.4L1705.2 411.2M1653.1 424.4L1697 461.9M1653.1 424.4L1647.9 478.6M1647.9 478.6L1697 461.9M1647.9 478.6L1685.9 515.6M1647.9 478.6L1633.2 526.2M1685.9 515.6L1739.6 493.1M1685.9 515.6L1727.6 538.4M1685.9 515.6L1674.3 562.4M1674.3 562.4L1727.6 538.4M1674.3 562.4L1724.9 592.2M1674.3 562.4L1664.7 611.2M1724.9 592.2L1769.6 572.1M1631.2 292.3L1683.3 271.9M1631.2 292.3L1674 325.6M1631.2 292.3L1621.8 348.9M1674 325.6L1719.9 306.7M1674 325.6L1716.2 355.1M1674 325.6L1661.8 377.3M1661.8 377.3L1716.2 355.1M1661.8 377.3L1705.2 411.2M1661.8 377.3L1653.1 424.4M1705.2 411.2L1760.8 381.7M1705.2 411.2L1744 441.4M1705.2 411.2L1697 461.9M1697 461.9L1744 441.4M1697 461.9L1739.6 493.1M1697 461.9L1685.9 515.6M1739.6 493.1L1785.4 474.8M1739.6 493.1L1781.2 527.9M1739.6 493.1L1727.6 538.4M1727.6 538.4L1781.2 527.9M1727.6 538.4L1769.6 572.1M1727.6 538.4L1724.9 592.2M1769.6 572.1L1827.8 552.7M1683.3 271.9L1735.5 251.5M1683.3 271.9L1719.9 306.7M1683.3 271.9L1674 325.6M1719.9 306.7L1776 282.3M1719.9 306.7L1771.3 334.5M1719.9 306.7L1716.2 355.1M1716.2 355.1L1771.3 334.5M1716.2 355.1L1760.8 381.7M1716.2 355.1L1705.2 411.2M1760.8 381.7L1813.1 372.4M1760.8 381.7L1803.7 418.6M1760.8 381.7L1744 441.4M1744 441.4L1803.7 418.6M1744 441.4L1785.4 474.8M1744 441.4L1739.6 493.1M1785.4 474.8L1845.9 449.9M1785.4 474.8L1834.2 501M1785.4 474.8L1781.2 527.9M1781.2 527.9L1834.2 501M1781.2 527.9L1827.8 552.7M1781.2 527.9L1769.6 572.1M1827.8 552.7L1880.8 539.3M1735.5 251.5L1787.7 231.2M1735.5 251.5L1776 282.3M1735.5 251.5L1719.9 306.7M1776 282.3L1830.9 263.4M1776 282.3L1815.5 315.4M1776 282.3L1771.3 334.5M1771.3 334.5L1815.5 315.4M1771.3 334.5L1813.1 372.4M1771.3 334.5L1760.8 381.7M1813.1 372.4L1867.8 343.1M1813.1 372.4L1856.1 395.2M1813.1 372.4L1803.7 418.6M1803.7 418.6L1856.1 395.2M1803.7 418.6L1845.9 449.9M1803.7 418.6L1785.4 474.8M1845.9 449.9L1897.8 427M1845.9 449.9L1886.6 484.9M1845.9 449.9L1834.2 501M1834.2 501L1886.6 484.9M1834.2 501L1880.8 539.3M1834.2 501L1827.8 552.7M1880.8 539.3L1922.2 517.2M1787.7 231.2L1839.8 210.8M1787.7 231.2L1830.9 263.4M1787.7 231.2L1776 282.3M1830.9 263.4L1882.5 239.3M1830.9 263.4L1870.1 294.9M1830.9 263.4L1815.5 315.4M1815.5 315.4L1870.1 294.9M1815.5 315.4L1867.8 343.1M1815.5 315.4L1813.1 372.4M1867.8 343.1L1917.7 322M1867.8 343.1L1899.8 374.5M1867.8 343.1L1856.1 395.2M1856.1 395.2L1899.8 374.5M1856.1 395.2L1897.8 427M1856.1 395.2L1845.9 449.9M1897.8 427L1949 408.1M1897.8 427L1940.7 463.9M1897.8 427L1886.6 484.9M1886.6 484.9L1940.7 463.9M1886.6 484.9L1922.2 517.2M1886.6 484.9L1880.8 539.3M1922.2 517.2L1978.4 493.8M1839.8 210.8L1892 190.4M1839.8 210.8L1882.5 239.3M1839.8 210.8L1830.9 263.4M1882.5 239.3L1930.1 223.3M1882.5 239.3L1926.4 270.8M1882.5 239.3L1870.1 294.9M1870.1 294.9L1926.4 270.8M1870.1 294.9L1917.7 322M1870.1 294.9L1867.8 343.1M1917.7 322L1969 301.1M1917.7 322L1962.8 358M1917.7 322L1899.8 374.5M1899.8 374.5L1962.8 358M1899.8 374.5L1949 408.1M1899.8 374.5L1897.8 427M1949 408.1L2004.6 391M1949 408.1L1986.3 443.6M1949 408.1L1940.7 463.9M1940.7 463.9L1986.3 443.6M1940.7 463.9L1978.4 493.8M1940.7 463.9L1922.2 517.2M1978.4 493.8L2033.5 470.9M1892 190.4L1930.1 223.3M1892 190.4L1882.5 239.3M1930.1 223.3L1926.4 270.8M1926.4 270.8L1969 301.1M1926.4 270.8L1917.7 322M1969 301.1L1962.8 358M1962.8 358L2004.6 391M1962.8 358L1949 408.1M2004.6 391L1986.3 443.6M1986.3 443.6L2033.5 470.9M1986.3 443.6L1978.4 493.8" stroke="#000" stroke-width="1.1" fill="none"/><path d="M600 690.7L1400 378.5" stroke="#222" stroke-width="0.8"/><path d="M600 692.5L1400 380.3" stroke="#222" stroke-width="0.45"/><path d="M600 693.9L1400 381.7" stroke="#222" stroke-width="0.45"/><path d="M600 695.3L1400 383.1" stroke="#222" stroke-width="0.75"/><path d="M1219 697L1353 624.5M1235 697L1353 632M1254.5 684.5L1353 628" stroke="#000" stroke-width="0.9" fill="none"/><path d="M530 458L540 458L593 573L594.9 573C603.2 594.1 612.3 617.4 619.8 636.2C627.3 655 635.4 675.4 639.8 686C644.2 696.6 643.9 695.3 646 700L530 705Z" fill="#5c5c5c"/><path d="M1289 697L1353 653L1360 653L1360 705L1289 705Z" fill="#5c5c5c"/><g stroke-linecap="round"><path d="M1271 296.5L1262 283.5" stroke="#ff0000" stroke-width="5"/><path d="M1271 296.5L1289.5 290.5" stroke="#00c000" stroke-width="4.6"/><path d="M1291 290L1287 288.5L1288 292.5Z" fill="#008800"/><path d="M1270.5 297L1269.3 308.5" stroke="#0000ff" stroke-width="5"/></g><g font-family="Liberation Sans" font-style="italic" font-size="10" fill="#fff"><text x="1265.5" y="280">X</text><text x="1291" y="287">Y</text><text x="1272" y="305">Z</text></g></svg></div>
<svg width="1367" height="842" viewBox="0 0 1367 842" style="left:0;top:0;pointer-events:none" fill="none" stroke-linecap="round" stroke-linejoin="round"><path d="M11 8.6L16.6 7.6" stroke="#f6a46a" stroke-width="0.8" stroke-dasharray="1.2 0.8"/><path d="M16.8 21.5L23.5 18.6" stroke="#b0b0b0" stroke-width="0.8" stroke-dasharray="1.2 0.8"/><path d="M16.8 16L16.8 21.5" stroke="#c8c8c8" stroke-width="0.8"/><path d="M10.9 12.3L16.4 15.3M13.7 13.8L13.7 19.8" stroke="#111" stroke-width="1.9" stroke-linecap="butt"/><path d="M17.2 15.2V8.2L21.9 10.4Q23.2 11.2 22.8 13.2L18 12.6L23.6 18.3" stroke="#ff6a00" stroke-width="1.9" stroke-linecap="butt"/><path d="M217 37.3H222L218.2 52.2H213.2Z" fill="#c8202a"/><path d="M223.7 37.3H228.7L224.9 52.2H219.9Z" fill="#22a04a"/><path d="M230.2 37.3H235.1L231.3 52.2H226.4Z" fill="#0b4e9a"/><path d="M272.9 35.9H256.5Q250.1 36.2 250.1 42.3V47.6H265.3Q266.6 48 265.8 49.3H250.6V54.9H265.8Q272.9 54.6 272.9 48.7V43.5H256.5Q255.3 43 255.9 42H272.9Z" fill="#fff" stroke="#111" stroke-width="1.2"/><path d="M256.3 42.8H272.2M251 48.6H265" stroke="#8a8a8a" stroke-width="0.8"/><path d="M1247 15.5H1257" stroke="#555" stroke-width="1"/><rect x="1292.5" y="10.5" width="9" height="9" rx="1" stroke="#c8c8c8" stroke-width="1"/><path d="M1338 10L1348 20M1348 10L1338 20" stroke="#666" stroke-width="1"/><path d="M1279 56.5L1280.6 51.2A10 10 0 1 1 1284.6 54.6Z" fill="#fff" stroke="#e6ecef" stroke-width="0.8"/><path d="M1281.5 53.6L1282.4 50.4A8.4 8.4 0 1 1 1285.2 52.9Z" fill="#3fc350"/><path d="M1285.2 42.4Q1284.6 44.5 1286.6 47.1Q1289 49.8 1291.4 50.3Q1293.2 50.3 1293.6 49.2L1291.8 48L1290.6 49Q1288.2 47.9 1286.9 45.4L1287.8 44.2L1286.5 42Q1285.6 42 1285.2 42.4Z" fill="#fff"/><rect x="1309.3" y="38.3" width="19.8" height="15.3" rx="2" stroke="#000" stroke-width="2.2"/><path d="M1309.8 39.5L1319.2 46.4L1328.6 39.5" stroke="#000" stroke-width="1.8"/><rect x="1345" y="40.6" width="8.6" height="14.2" rx="4.3" stroke="#000" stroke-width="2.1"/><path d="M1340.6 42.6H1344.6M1340.6 46.8H1344.6M1340.6 51.1H1344.6M1353.8 42.6H1357.8M1353.8 46.8H1357.8M1353.8 51.1H1357.8M1345 37.4L1347 40M1353.5 37.4L1351.5 40M1347.6 44.8H1351M1347.6 48.9H1351" stroke="#000" stroke-width="1.7"/><path d="M129.50 69.40L136.95 73.70L136.95 82.30L129.50 86.60L122.05 82.30L122.05 73.70Z" fill="#f4f4f4" stroke="#4a4a4a" stroke-width="1.6"/><path d="M129.50 78.00L129.50 69.40" stroke="none"/><path d="M122.05 73.70L129.50 78.00L136.95 73.70M129.50 78.00L129.50 86.60" stroke="#4a4a4a" stroke-width="1.3"/><path d="M131.96 70.82L124.51 75.12M127.04 70.82L134.49 75.12M134.42 72.24L126.97 76.54M124.58 72.24L132.03 76.54M129.50 69.40L129.50 78.00M124.51 75.12L124.51 83.72M122.05 76.54L129.50 80.84M126.97 76.54L126.97 85.14M122.05 79.38L129.50 83.68M122.05 73.70L129.50 86.60M131.96 76.58L131.96 85.18M129.50 80.84L136.95 76.54M134.42 75.16L134.42 83.76M129.50 83.68L136.95 79.38M129.50 78.00L136.95 82.30" stroke="#4a4a4a" stroke-width="0.7"/><path d="M16.00 542.80L25.53 548.30L25.53 559.30L16.00 564.80L6.47 559.30L6.47 548.30Z" fill="#f4f4f4" stroke="#3d3d3d" stroke-width="1.6"/><path d="M16.00 553.80L16.00 542.80" stroke="none"/><path d="M6.47 548.30L16.00 553.80L25.53 548.30M16.00 553.80L16.00 564.80" stroke="#3d3d3d" stroke-width="1.3"/><path d="M19.14 544.62L9.62 550.12M12.86 544.62L22.38 550.12M22.29 546.43L12.76 551.93M9.71 546.43L19.24 551.93M16.00 542.80L16.00 553.80M9.62 550.12L9.62 561.12M6.47 551.93L16.00 557.43M12.76 551.93L12.76 562.93M6.47 555.56L16.00 561.06M6.47 548.30L16.00 564.80M19.14 551.98L19.14 562.98M16.00 557.43L25.53 551.93M22.29 550.17L22.29 561.17M16.00 561.06L25.53 555.56M16.00 553.80L25.53 559.30" stroke="#3d3d3d" stroke-width="0.7"/><path d="M7 121.6L17.2 113.2L27.4 121.6M9.9 119.6V129.6H14.9V123.8H19.5V129.6H24.6V119.6" stroke="#ffffff" stroke-width="1.7" stroke-linecap="butt"/><rect x="7.8" y="144.6" width="15.5" height="15.5" rx="2" stroke="#8592a0" stroke-width="0.9"/><rect x="10.6" y="147.6" width="15.2" height="15.2" rx="2" stroke="#8592a0" stroke-width="0.9"/><rect x="9.8" y="147" width="14" height="13.5" rx="1" fill="#fff"/><g fill="#132130"><circle cx="12.2" cy="149.6" r="1.05"/><circle cx="12.2" cy="152.7" r="1.05"/><circle cx="12.2" cy="155.8" r="1.05"/><circle cx="12.2" cy="158.9" r="1.05"/><circle cx="15.3" cy="149.6" r="1.05"/><circle cx="15.3" cy="152.7" r="1.05"/><circle cx="15.3" cy="155.8" r="1.05"/><circle cx="15.3" cy="158.9" r="1.05"/><circle cx="18.4" cy="149.6" r="1.05"/><circle cx="18.4" cy="152.7" r="1.05"/><circle cx="18.4" cy="155.8" r="1.05"/><circle cx="18.4" cy="158.9" r="1.05"/><circle cx="21.5" cy="149.6" r="1.05"/><circle cx="21.5" cy="152.7" r="1.05"/><circle cx="21.5" cy="155.8" r="1.05"/><circle cx="21.5" cy="158.9" r="1.05"/></g><rect x="7" y="205.6" width="19.6" height="14.6" rx="0.8" stroke="#ffffff" stroke-width="1.3"/><path d="M7.3 205.8L9.5 204.6H27.2L26.6 206M11.5 209.2H16.6V217.4H11.5ZM18.5 209.2H24V217.4H18.5Z" stroke="#ffffff" stroke-width="1.1"/><path d="M6.8 251Q7 240 9 238.5Q10.4 241 10.6 251Q11 240 13 238.5Q14.4 241 14.6 251Q15 240 17 238.5Q18.4 241 18.6 251Q19 240 21 238.5Q22.4 241 22.6 251Q23 240 25 238.5Q26.4 240 26.3 246" stroke="#ffffff" stroke-width="1.9"/><path d="M9 265.5L13 267V286.5L9.4 285Z M19.3 268.8L24.3 270.5V289.2L19.6 287.6Z" stroke="#dde3ea" stroke-width="0.9"/><path d="M9.5 276L13 277M19.8 279.5L24 281" stroke="#dde3ea" stroke-width="0.9"/><path d="M12 298.5H16.8Q17.7 299 17.3 302L15.3 319.5H9.7L11.2 302Q11.3 299 12 298.5Z M19.3 299H24.6Q25.4 299.5 25 303L23 320H17.6L19 303Q19.1 299.5 19.3 299Z" stroke="#ffffff" stroke-width="1"/><path d="M11.6 299.5H17L16.6 303.5H11.2ZM19.6 300H24.8L24.4 304H19.2Z" fill="#ffffff"/><path d="M14.3 303.5L16.6 303.1M21.6 304L23.5 303.6" stroke="#132130" stroke-width="0.8"/><path d="M8.4 334.2A5.6 5.6 0 0 0 15.5 341.6L25.4 350.8Q26.8 351.6 27.3 349.8L17.6 340A5.6 5.6 0 0 0 11.6 331.5L14.3 334.4L12.6 337.4L9.3 336.6Z" fill="#ffffff"/><g stroke="#ffffff" stroke-width="1.3"><ellipse cx="16.8" cy="399.9" rx="3.8" ry="9.6"/><ellipse cx="16.8" cy="399.9" rx="3.8" ry="9.6" transform="rotate(60 16.8 399.9)"/><ellipse cx="16.8" cy="399.9" rx="3.8" ry="9.6" transform="rotate(-60 16.8 399.9)"/></g><circle cx="16.8" cy="399.9" r="2" fill="#ffffff"/><path d="M9.4 429.5V424.5H14.4M19.8 424.5H24.6V429.6M9.4 435.4V441.3H24.6V435M24.6 433.6L22.2 431" stroke="#e8ecf0" stroke-width="1.1"/><rect x="7" y="429.4" width="4.4" height="7.1" stroke="#e8ecf0" stroke-width="1"/><circle cx="16.9" cy="432.6" r="3.3" stroke="#e8ecf0" stroke-width="1.1"/><path d="M15.8 436V440M18 436V440" stroke="#e8ecf0" stroke-width="1"/><rect x="14.1" y="423.3" width="2.7" height="2.5" fill="#3b82e8"/><rect x="17.2" y="423.3" width="2.7" height="2.5" fill="#ee5b6a"/><path d="M6.9 464.5C9 458 10.5 456.6 12.2 456.8C15 457 16.5 471 21.8 471C24 471 25.5 467 26.8 463.2" stroke="#ffffff" stroke-width="1.5"/><rect x="14" y="485.3" width="6" height="14" rx="3" fill="#ffffff"/><circle cx="17" cy="502" r="5.2" fill="#ffffff"/><path d="M16.6 488.6H18.2M16.6 490.8H18.2M16.6 493H18.2" stroke="#132130" stroke-width="0.9" stroke-linecap="butt"/><path d="M16.6 488.6V493.4" stroke="#132130" stroke-width="0.8"/><path d="M13.4 595.4V591.4Q10.6 590.9 11 588.4H10.2Q8.6 588 9.4 586.4L11 584Q10.6 576.6 17.8 576.4Q25.4 576.6 25.3 583.4Q25.2 586.8 21.6 589.6V595.4Z" stroke="#ffffff" stroke-width="1.6"/><circle cx="18.1" cy="583.6" r="3.9" stroke="#ffffff" stroke-width="1.6" stroke-dasharray="1.55 1.5" stroke-linecap="butt"/><circle cx="18.1" cy="583.6" r="2.3" stroke="#ffffff" stroke-width="1.9"/><path d="M16.6 595V589.6M19.8 595V589.6" stroke="#ffffff" stroke-width="1.3"/><rect x="6.8" y="608.1" width="16.6" height="15.7" rx="1.6" stroke="#8cc12a" stroke-width="1.8"/><path d="M9.2 612.4H12.8M9.2 616H12.8M9.2 619.8H12.8M15.5 616.2L17.5 618.3L21 614" stroke="#8cc12a" stroke-width="1.7"/><path d="M422.2 150.2L426.6 154.4L431 150.2" stroke="#333" stroke-width="1.1"/><path d="M138.8 228.5L133.4 234.8L138.8 241M133.6 234.8H150.8V229.1" stroke="#1d5fd0" stroke-width="2" stroke-linecap="butt" stroke-linejoin="miter"/><path d="M1202.3 228L1204.8 229.6V235.6L1202.3 234ZM1202.3 236.4L1204.8 238V243.2L1202.3 241.6ZM1203.5 227H1210L1212 229H1205.5ZM1211 227H1217.5L1219.3 229H1213Z" fill="#3c3c3c"/><g fill="#1d64d2"><rect x="1205.6" y="229.6" width="6.4" height="6.2" rx="1.2"/><rect x="1212.8" y="229.6" width="6.4" height="6.2" rx="1.2"/><rect x="1205.6" y="236.8" width="6.4" height="6.2" rx="1.2"/><rect x="1212.8" y="236.8" width="6.4" height="6.2" rx="1.2"/></g><path d="M1329.7 230H1343.2L1336.45 237.2Z" fill="#000"/><rect x="7.7" y="816.2" width="20.6" height="18.7" rx="2.6" fill="#e4e4e4" stroke="#2a2a2a" stroke-width="1.1"/><path d="M8 820.5V818.6Q8 816.2 10.5 816.2H25.5Q28 816.2 28 818.6V820.5Z" fill="#2a2a2a"/><path d="M8.2 832.8Q8.5 835 11 835H25Q27.5 835 27.8 832.8" stroke="#2a2a2a" stroke-width="1.7"/><path d="M10.8 823.4L17.4 827.1L10.8 830.8" stroke="#222" stroke-width="1.5"/><path d="M19.2 830.6H25" stroke="#222" stroke-width="1.3" stroke-linecap="butt"/></svg>
<div class="t" style="left:31.10px;top:10.04px;font-size:12.9px;color:#8b8b8b;transform:scaleX(0.8200);transform-origin:0.00px 0;">TRAFOLO</div>
<div class="t" style="left:13.30px;top:42.18px;font-size:11.9px;color:#111;transform:scaleX(0.9412);transform-origin:0.00px 0;">File</div>
<div class="t" style="left:49.20px;top:42.18px;font-size:11.9px;color:#111;letter-spacing:0.453px;">Help</div>
<div class="t" style="left:89.10px;top:42.18px;font-size:11.9px;color:#111;letter-spacing:0.373px;">D:\TRAFOLO\demo</div>
<div class="t" style="left:1216.50px;top:39.25px;font-size:15px;color:#111;letter-spacing:-0.034px;">Support:</div>
<div class="t" style="left:149.50px;top:74.26px;font-size:12.75px;color:#1a1a3a;letter-spacing:0.383px;">Meshing</div>
<div class="t" style="left:6.00px;top:94.76px;font-size:10.4px;font-weight:700;-webkit-text-stroke:0;color:#fff;letter-spacing:-0.114px;">SYSTEM</div>
<div class="t" style="left:31.40px;top:116.10px;font-size:14px;color:#fff;transform:scaleX(0.9321);transform-origin:0.00px 0;">Setup</div>
<div class="t" style="left:30.60px;top:148.10px;font-size:14px;color:#fff;letter-spacing:-0.087px;">Materials</div>
<div class="t" style="left:6.60px;top:185.66px;font-size:10.4px;font-weight:700;-webkit-text-stroke:0;color:#fff;letter-spacing:-0.192px;">GEOMETRY</div>
<div class="t" style="left:31.40px;top:207.10px;font-size:14px;color:#fff;transform:scaleX(0.9359);transform-origin:0.00px 0;">Core</div>
<div class="t" style="left:31.40px;top:238.90px;font-size:14px;color:#fff;transform:scaleX(0.9288);transform-origin:0.00px 0;">Coil</div>
<div class="t" style="left:31.40px;top:270.50px;font-size:14px;color:#fff;letter-spacing:0.062px;">Other</div>
<div class="t" style="left:30.70px;top:303.00px;font-size:14px;color:#fff;">Bobbin</div>
<div class="t" style="left:31.70px;top:334.50px;font-size:14px;color:#fff;transform:scaleX(0.9443);transform-origin:0.00px 0;">Assembly</div>
<div class="t" style="left:6.60px;top:372.76px;font-size:10.4px;font-weight:700;-webkit-text-stroke:0;color:#fff;transform:scaleX(0.9455);transform-origin:0.00px 0;">PHYSICS</div>
<div class="t" style="left:30.60px;top:393.90px;font-size:14px;color:#fff;transform:scaleX(0.9657);transform-origin:1.00px 0;">ElMag</div>
<div class="t" style="left:29.30px;top:425.70px;font-size:14px;color:#fff;transform:scaleX(0.9535);transform-origin:0.00px 0;">Circuits</div>
<div class="t" style="left:31.60px;top:458.10px;font-size:14px;color:#fff;transform:scaleX(0.9696);transform-origin:0.00px 0;">Waveform</div>
<div class="t" style="left:30.60px;top:489.90px;font-size:14px;color:#fff;transform:scaleX(0.9693);transform-origin:1.00px 0;">Heat</div>
<div class="t" style="left:5.90px;top:527.76px;font-size:10.4px;font-weight:700;-webkit-text-stroke:0;color:#fff;letter-spacing:-0.196px;">STUDY</div>
<div class="t" style="left:29.40px;top:547.70px;font-size:14px;color:#444;letter-spacing:0.051px;">Mesh</div>
<div class="t" style="left:31.50px;top:580.00px;font-size:14px;color:#fff;transform:scaleX(0.8941);transform-origin:0.00px 0;">Solve</div>
<div class="t" style="left:28.70px;top:610.00px;font-size:14px;color:#80b82a;transform:scaleX(0.9260);transform-origin:1.00px 0;">Results</div>
<div class="t" style="left:130.30px;top:111.24px;font-size:13.6px;font-weight:700;-webkit-text-stroke:0;color:#10102a;transform:scaleX(0.9310);transform-origin:0.00px 0;">Settings</div>
<div class="t" style="left:129.30px;top:145.95px;font-size:13px;color:#111;letter-spacing:-0.041px;">Mesh Refinement</div>
<div class="t" style="left:339.20px;top:146.04px;font-size:13.6px;color:#111;letter-spacing:0.162px;">Normal</div>
<div class="t" style="left:443.20px;top:144.80px;font-size:16px;color:#111;-webkit-text-stroke:0.35px #111;">?</div>
<div class="t" style="left:119.80px;top:189.23px;font-size:16.2px;font-weight:700;-webkit-text-stroke:0;color:#111;letter-spacing:0.139px;">Meshing</div>
<div class="t" style="left:160.30px;top:227.95px;font-size:15px;color:#111;letter-spacing:-0.012px;">Group1coil</div>
<div class="t" style="left:1223.30px;top:229.35px;font-size:13.0px;color:#10102a;letter-spacing:0.38px;">Compute Mesh</div>
<div class="t" style="left:132.20px;top:544.35px;font-size:13px;color:#111;letter-spacing:-0.11px;">Max Element Edge Size</div>
<div class="t" style="left:396.20px;top:544.35px;font-size:13px;color:#111;transform:scaleX(0.9374);transform-origin:0.00px 0;">0.25</div>
<div class="t" style="left:475.20px;top:544.35px;font-size:13px;color:#111;letter-spacing:0.471px;">mm</div>
<div class="t" style="left:507.20px;top:542.20px;font-size:16px;color:#111;-webkit-text-stroke:0.35px #111;">?</div>
<div class="t" style="left:549.30px;top:705.91px;font-size:15.4px;color:#111;letter-spacing:-0.063px;">Mesh Information</div>
<div class="t" style="left:558.20px;top:728.93px;font-size:14.2px;color:#111;transform:scaleX(0.9473);transform-origin:1.00px 0;">Number of elements:</div>
<div class="t" style="left:694.60px;top:728.93px;font-size:14.2px;color:#111;transform:scaleX(0.8734);transform-origin:1.00px 0;">124767.0</div>
<div class="t" style="left:558.20px;top:747.93px;font-size:14.2px;color:#111;transform:scaleX(0.9627);transform-origin:1.00px 0;">Number of nodes:</div>
<div class="t" style="left:695.60px;top:747.93px;font-size:14.2px;color:#111;transform:scaleX(0.8581);transform-origin:0.00px 0;">33671.0</div>
<div class="t" style="left:559.20px;top:767.93px;font-size:14.2px;color:#111;transform:scaleX(0.9383);transform-origin:0.00px 0;">Aspect ratio:</div>
<div class="t" style="left:695.60px;top:767.93px;font-size:14.2px;color:#111;transform:scaleX(0.8297);transform-origin:0.00px 0;">48.4</div>
<div class="t" style="left:730.30px;top:768.58px;font-size:16.5px;color:#111;-webkit-text-stroke:0.35px #111;">?</div>
<div class="t" style="left:35.30px;top:818.71px;font-size:15.4px;font-weight:700;-webkit-text-stroke:0;color:#000;transform:scaleX(0.9248);transform-origin:0.00px 0;">Status:</div>
<div class="t" style="left:89.00px;top:818.71px;font-size:15.4px;color:#111;transform:scaleX(0.9135);transform-origin:1.00px 0;">Ready</div>
<div class="t" style="left:133.70px;top:254.09px;font-size:12.6px;color:#111;letter-spacing:-0.007px;">Group1coil1Face7</div>
<div class="t" style="left:133.70px;top:289.09px;font-size:12.6px;color:#111;letter-spacing:-0.007px;">Group1coil1Face8</div>
<div class="t" style="left:133.70px;top:324.09px;font-size:12.6px;color:#111;letter-spacing:-0.007px;">Group1coil1Face9</div>
<div class="t" style="left:133.70px;top:359.09px;font-size:12.6px;color:#111;letter-spacing:-0.007px;">Group1coil1Face10</div>
<div class="t" style="left:133.70px;top:394.09px;font-size:12.6px;color:#111;letter-spacing:0.052px;">Group1coil1Face11</div>
<div class="t" style="left:133.70px;top:429.09px;font-size:12.6px;color:#111;letter-spacing:-0.007px;">Group1coil1Face12</div>
<div class="t" style="left:133.70px;top:464.09px;font-size:12.6px;color:#fff;letter-spacing:-0.007px;">Group1coil1Face13</div>
<div class="t" style="left:133.70px;top:499.09px;font-size:12.6px;color:#111;letter-spacing:-0.007px;">Group1coil1Face14</div>
<div class="t" style="left:548.50px;top:644.40px;font-size:16px;color:#ececec;-webkit-text-stroke:0;">x: 6.5 mm (</div>
<div class="t" style="left:548.50px;top:660.10px;font-size:16px;color:#ececec;-webkit-text-stroke:0;">y: 6.5 mm (</div>
<div class="t" style="left:548.50px;top:675.80px;font-size:16px;color:#ececec;-webkit-text-stroke:0;">z: 6.25 mm (</div>
</body></html>
